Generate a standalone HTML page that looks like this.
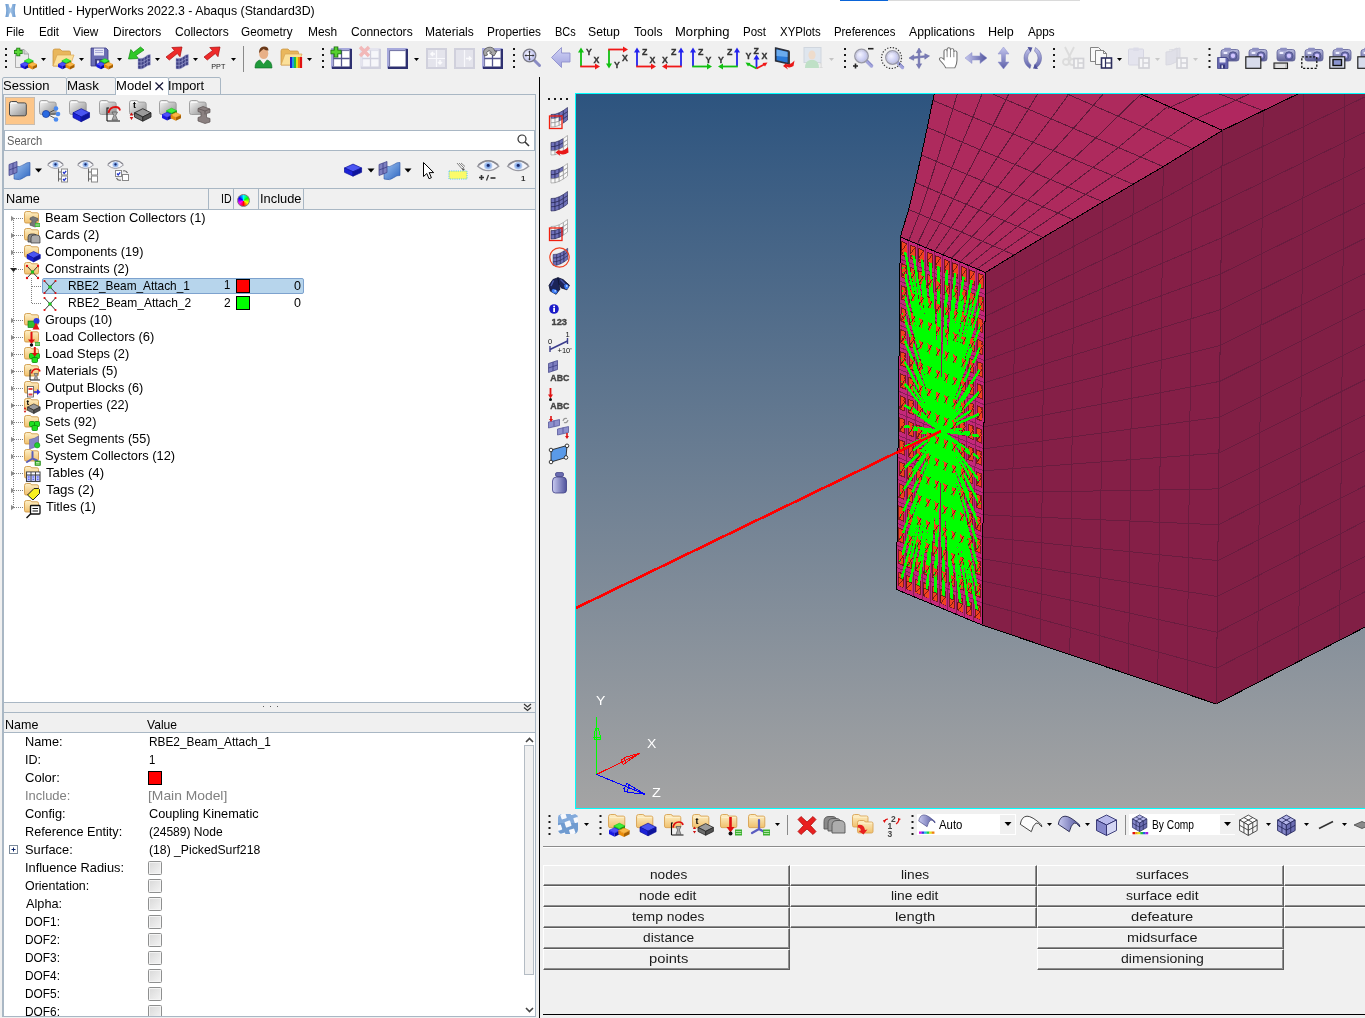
<!DOCTYPE html><html><head><meta charset="utf-8"><title>HyperWorks</title><style>
html,body{margin:0;padding:0;}
body{width:1365px;height:1018px;overflow:hidden;background:#f0f0f0;position:relative;font-family:"Liberation Sans",sans-serif;}
.a{position:absolute;box-sizing:border-box;}
.t{position:absolute;white-space:pre;transform-origin:0 0;display:block;}
svg{overflow:visible;}
#root{position:absolute;left:0;top:0;width:1365px;height:1018px;overflow:hidden;will-change:transform;transform:translateZ(0);}
</style></head><body><div id="root"><svg class="a" style="left:0;top:0" width="0" height="0"><defs>
<linearGradient id="gFold" x1="0" y1="0" x2="0" y2="1"><stop offset="0" stop-color="#fdf0c8"/><stop offset="1" stop-color="#f0c06c"/></linearGradient>
<linearGradient id="gFoldG" x1="0" y1="0" x2="1" y2="1"><stop offset="0" stop-color="#fafafa"/><stop offset="1" stop-color="#8e8e8e"/></linearGradient>
<linearGradient id="gPur" x1="0" y1="0" x2="0" y2="1"><stop offset="0" stop-color="#c4c6ee"/><stop offset="1" stop-color="#5c5fa8"/></linearGradient>
<linearGradient id="gPurL" x1="0" y1="0" x2="0" y2="1"><stop offset="0" stop-color="#d2d4f6"/><stop offset="1" stop-color="#a0a2de"/></linearGradient>
<linearGradient id="gPurH" x1="0" y1="0" x2="1" y2="0"><stop offset="0" stop-color="#c8caf0"/><stop offset="1" stop-color="#4f529c"/></linearGradient>
<linearGradient id="gCam" x1="0" y1="0" x2="0" y2="1"><stop offset="0" stop-color="#b9bbe0"/><stop offset="1" stop-color="#5e6096"/></linearGradient>
<linearGradient id="gBlueF" x1="0" y1="0" x2="1" y2="1"><stop offset="0" stop-color="#9ec4f2"/><stop offset="1" stop-color="#2f66c0"/></linearGradient>
<radialGradient id="gLens" cx="0.4" cy="0.4" r="0.6"><stop offset="0" stop-color="#f4f4ff"/><stop offset="1" stop-color="#b9bcec"/></radialGradient>
<radialGradient id="gEye" cx="0.5" cy="0.5" r="0.5"><stop offset="0" stop-color="#3050a8"/><stop offset="0.45" stop-color="#7fa6e6"/><stop offset="1" stop-color="#c8daf6"/></radialGradient>
</defs></svg>
<div class="a" style="left:0px;top:0px;width:1365px;height:41px;background:#ffffff;"></div>
<div class="a" style="left:840px;top:0px;width:240px;height:1px;background:#dadada;"></div>
<div class="a" style="left:840px;top:0px;width:48px;height:1px;background:#0a64d8;"></div>
<svg class="a" style="left:4.7px;top:4.4px" width="11" height="13" viewBox="0 0 11 13"><defs><linearGradient id="gApp" x1="0" y1="0" x2="1" y2="0"><stop offset="0" stop-color="#6a99cf"/><stop offset="0.5" stop-color="#a4c4e6"/><stop offset="1" stop-color="#6a99cf"/></linearGradient></defs><path d="M0.300 0h3.300q0.500 3.600 1.900 4.700q1.400 -1.100 1.900 -4.700h3.300q-0.900 3.500 -0.900 6.500q0 3 0.900 6.500h-3.300q-0.500 -3.600 -1.900 -4.700q-1.400 1.100 -1.900 4.700h-3.300q0.900 -3.500 0.900 -6.500q0 -3 -0.900 -6.500z" fill="url(#gApp)"/></svg>
<span class="t " style="left:22.5px;top:5.16px;font-size:12.8px;line-height:12.8px;color:#000;transform:scaleX(0.9657);">Untitled - HyperWorks 2022.3 - Abaqus (Standard3D)</span>
<span class="t " style="left:6.4px;top:26.18px;font-size:12.9px;line-height:12.9px;color:#000;transform:scaleX(0.8844);">File</span>
<span class="t " style="left:38.6px;top:26.18px;font-size:12.9px;line-height:12.9px;color:#000;transform:scaleX(0.9028);">Edit</span>
<span class="t " style="left:73.2px;top:26.18px;font-size:12.9px;line-height:12.9px;color:#000;transform:scaleX(0.9152);">View</span>
<span class="t " style="left:112.7px;top:26.18px;font-size:12.9px;line-height:12.9px;color:#000;transform:scaleX(0.9346);">Directors</span>
<span class="t " style="left:174.6px;top:26.18px;font-size:12.9px;line-height:12.9px;color:#000;transform:scaleX(0.9366);">Collectors</span>
<span class="t " style="left:241.4px;top:26.18px;font-size:12.9px;line-height:12.9px;color:#000;transform:scaleX(0.9109);">Geometry</span>
<span class="t " style="left:307.5px;top:26.18px;font-size:12.9px;line-height:12.9px;color:#000;transform:scaleX(0.9269);">Mesh</span>
<span class="t " style="left:350.5px;top:26.18px;font-size:12.9px;line-height:12.9px;color:#000;transform:scaleX(0.9355);">Connectors</span>
<span class="t " style="left:425.4px;top:26.18px;font-size:12.9px;line-height:12.9px;color:#000;transform:scaleX(0.9322);">Materials</span>
<span class="t " style="left:487.1px;top:26.18px;font-size:12.9px;line-height:12.9px;color:#000;transform:scaleX(0.9180);">Properties</span>
<span class="t " style="left:554.5px;top:26.18px;font-size:12.9px;line-height:12.9px;color:#000;transform:scaleX(0.8536);">BCs</span>
<span class="t " style="left:588.4px;top:26.18px;font-size:12.9px;line-height:12.9px;color:#000;transform:scaleX(0.9468);">Setup</span>
<span class="t " style="left:633.7px;top:26.18px;font-size:12.9px;line-height:12.9px;color:#000;transform:scaleX(0.9486);">Tools</span>
<span class="t " style="left:675.4px;top:26.18px;font-size:12.9px;line-height:12.9px;color:#000;transform:scaleX(1.0124);">Morphing</span>
<span class="t " style="left:742.9px;top:26.18px;font-size:12.9px;line-height:12.9px;color:#000;transform:scaleX(0.8929);">Post</span>
<span class="t " style="left:779.6px;top:26.18px;font-size:12.9px;line-height:12.9px;color:#000;transform:scaleX(0.8878);">XYPlots</span>
<span class="t " style="left:833.7px;top:26.18px;font-size:12.9px;line-height:12.9px;color:#000;transform:scaleX(0.8824);">Preferences</span>
<span class="t " style="left:909.3px;top:26.18px;font-size:12.9px;line-height:12.9px;color:#000;transform:scaleX(0.9459);">Applications</span>
<span class="t " style="left:988.3px;top:26.18px;font-size:12.9px;line-height:12.9px;color:#000;transform:scaleX(0.9750);">Help</span>
<span class="t " style="left:1028.3px;top:26.18px;font-size:12.9px;line-height:12.9px;color:#000;transform:scaleX(0.9096);">Apps</span>
<svg class="a" style="left:0;top:0" width="1365" height="76" viewBox="0 0 1365 76"><rect x="5" y="48" width="2" height="2" fill="#1a1a1a"/><rect x="5" y="54" width="2" height="2" fill="#1a1a1a"/><rect x="5" y="60" width="2" height="2" fill="#1a1a1a"/><rect x="5" y="66" width="2" height="2" fill="#1a1a1a"/><g transform="translate(13 47)"><path d="M2.500 2.500h8.500l4.500 4.500v13.500h-13z" fill="#ececec" stroke="#9a9a9a" stroke-width="0.8"/><path d="M11 2.500v4.500h4.500" fill="#d8d8d8" stroke="#9a9a9a" stroke-width="0.8"/><path d="M5.300 0.700v8.600M1 5h8.600" stroke="#1a7a10" stroke-width="4"/><path d="M5.300 1.400v7.200M1.700 5h7.200" stroke="#5ad838" stroke-width="2.400"/><g transform="translate(7.5 11)"><g transform="scale(1)"><path d="M3.8 2.8l4.500 -2.200l4.500 2.200l-4.500 2.200z" fill="#3cf03c" stroke="#12c412" stroke-width="0.5"/><path d="M3.8 2.8l4.500 2.200v2.800l-4.500 -2.200z" fill="#12c412"/><path d="M8.3 5l4.500 -2.200v2.800l-4.500 2.200z" fill="#0a8a0a"/><path d="M0 6.3l4.500 -2.200l4.500 2.200l-4.500 2.200z" fill="#5050fa" stroke="#1818e4" stroke-width="0.5"/><path d="M0 6.3l4.500 2.200v2.800l-4.500 -2.200z" fill="#1818e4"/><path d="M4.5 8.5l4.500 -2.200v2.800l-4.500 2.200z" fill="#0a0a9c"/><path d="M7.5 6.5l4.500 -2.200l4.500 2.200l-4.500 2.200z" fill="#fab848" stroke="#ea8c0a" stroke-width="0.5"/><path d="M7.5 6.5l4.500 2.200v2.800l-4.500 -2.200z" fill="#ea8c0a"/><path d="M12 8.7l4.500 -2.200v2.800l-4.500 2.200z" fill="#a86000"/></g></g></g><path d="M41 58h5l-2.5 3z" fill="#000"/><g transform="translate(52 47)"><path d="M1 4q0 -2 2 -2h5l2 2h7q1.5 0 1.5 1.5v13.5h-17.5z" fill="#e9b75c" stroke="#c88f3a" stroke-width="0.7"/><path d="M1 19l4 -11h17l-4 11z" fill="#fbe09a" stroke="#d9a455" stroke-width="0.7"/><g transform="translate(6 11)"><g transform="scale(1)"><path d="M3.8 2.8l4.500 -2.200l4.500 2.200l-4.500 2.200z" fill="#3cf03c" stroke="#12c412" stroke-width="0.5"/><path d="M3.8 2.8l4.500 2.200v2.800l-4.500 -2.200z" fill="#12c412"/><path d="M8.3 5l4.500 -2.200v2.800l-4.500 2.200z" fill="#0a8a0a"/><path d="M0 6.3l4.500 -2.200l4.500 2.200l-4.500 2.200z" fill="#5050fa" stroke="#1818e4" stroke-width="0.5"/><path d="M0 6.3l4.500 2.200v2.800l-4.500 -2.200z" fill="#1818e4"/><path d="M4.5 8.5l4.500 -2.200v2.800l-4.500 2.200z" fill="#0a0a9c"/><path d="M7.5 6.5l4.500 -2.200l4.500 2.200l-4.500 2.200z" fill="#fab848" stroke="#ea8c0a" stroke-width="0.5"/><path d="M7.5 6.5l4.500 2.200v2.800l-4.500 -2.200z" fill="#ea8c0a"/><path d="M12 8.7l4.500 -2.200v2.800l-4.500 2.200z" fill="#a86000"/></g></g></g><path d="M79 58h5l-2.5 3z" fill="#000"/><g transform="translate(90 47)"><path d="M1 1h15l2 2v16h-17z" fill="#6a6cb4" stroke="#3c3e84" stroke-width="0.8"/><rect x="4" y="1.5" width="10" height="7" fill="#e6e6f6"/><path d="M5 3.5h8M5 5.5h8" stroke="#9a9cd0" stroke-width="0.8"/><rect x="5" y="12" width="8" height="7" fill="#3c3e84"/><rect x="7" y="13.5" width="2.2" height="4" fill="#dde"/><g transform="translate(6.5 11)"><g transform="scale(1)"><path d="M3.8 2.8l4.500 -2.200l4.500 2.200l-4.500 2.200z" fill="#3cf03c" stroke="#12c412" stroke-width="0.5"/><path d="M3.8 2.8l4.500 2.200v2.800l-4.500 -2.200z" fill="#12c412"/><path d="M8.3 5l4.500 -2.200v2.800l-4.500 2.200z" fill="#0a8a0a"/><path d="M0 6.3l4.500 -2.200l4.500 2.200l-4.500 2.200z" fill="#5050fa" stroke="#1818e4" stroke-width="0.5"/><path d="M0 6.3l4.500 2.200v2.800l-4.500 -2.200z" fill="#1818e4"/><path d="M4.5 8.5l4.500 -2.200v2.800l-4.500 2.200z" fill="#0a0a9c"/><path d="M7.5 6.5l4.500 -2.200l4.500 2.200l-4.500 2.200z" fill="#fab848" stroke="#ea8c0a" stroke-width="0.5"/><path d="M7.5 6.5l4.500 2.200v2.800l-4.500 -2.200z" fill="#ea8c0a"/><path d="M12 8.7l4.500 -2.200v2.800l-4.500 2.200z" fill="#a86000"/></g></g></g><path d="M117 58h5l-2.5 3z" fill="#000"/><g transform="translate(128 47)"><path d="M12.500 0l3.500 3l-8 5.500l2.500 3l-10 0.500l2.300 -9.500l2.700 3z" fill="#30c828" stroke="#0c8a0a" stroke-width="0.7"/><g transform="translate(10 7.5)"><g transform="scale(0.880 0.950)"><path d="M0 4q5 1 8 -1.5q3 -2.5 6 -2.5v11q-3 0 -6 2.5q-3 2.5 -8 1.5z" fill="#3e4084" stroke="#a4a6d8" stroke-width="0.5"/><path d="M0 7.7q5 1 8 -1.5q3 -2.5 6 -2.5M0 11.3q5 1 8 -1.5q3 -2.5 6 -2.5M3.5 4.6v11M7 3.2v11M10.5 0.8v11" stroke="#a4a6d8" stroke-width="0.7" fill="none"/></g></g></g><path d="M155 58h5l-2.5 3z" fill="#000"/><g transform="translate(166 47)"><path d="M0 10l8.500 -6.500l-2.700 -3l10.200 -0.500l-2 9.700l-2.700 -3.200l-8 6.500z" fill="#ee2a2a" stroke="#a80a0a" stroke-width="0.7"/><g transform="translate(10 7.5)"><g transform="scale(0.880 0.950)"><path d="M0 4q5 1 8 -1.5q3 -2.5 6 -2.5v11q-3 0 -6 2.5q-3 2.5 -8 1.5z" fill="#3e4084" stroke="#a4a6d8" stroke-width="0.5"/><path d="M0 7.7q5 1 8 -1.5q3 -2.5 6 -2.5M0 11.3q5 1 8 -1.5q3 -2.5 6 -2.5M3.5 4.6v11M7 3.2v11M10.5 0.8v11" stroke="#a4a6d8" stroke-width="0.7" fill="none"/></g></g></g><path d="M193 58h5l-2.5 3z" fill="#000"/><g transform="translate(204 47)"><path d="M0 10l8.500 -6.500l-2.700 -3l10.200 -0.500l-2 9.700l-2.700 -3.200l-8 6.500z" fill="#ee2a2a" stroke="#a80a0a" stroke-width="0.7"/><text x="7.300" y="21.800" font-family="Liberation Sans" font-size="7.200" fill="#222">PPT</text></g><path d="M231 58h5l-2.5 3z" fill="#000"/><rect x="243" y="46" width="1" height="26" fill="#8a8a8a"/><g transform="translate(255 47)"><path d="M0 21q0 -7 5 -8l3.5 3l3.5 -3q5 1 5 8z" fill="#1f9a3a" stroke="#0c6a22" stroke-width="0.6"/><path d="M5.5 13l3 4l3 -4l-3 -1z" fill="#f4f4f4"/><ellipse cx="8.7" cy="6.5" rx="4.6" ry="5.6" fill="#e8b088"/><path d="M4 6q0 -6.5 5 -6.5q4.5 0 4.5 4q-3 0 -5 -1.5q-2 1.5 -4.5 4z" fill="#6a3a1a"/></g><g transform="translate(280 47)"><path d="M1 4q0 -2 2 -2h5l2 2h7q1.5 0 1.5 1.5v12.5h-17.5z" fill="#e9b75c" stroke="#c88f3a" stroke-width="0.7"/><path d="M1 18l4 -11h17l-4 11z" fill="#fbe09a" stroke="#d9a455" stroke-width="0.7"/><rect x="10" y="10" width="2.1" height="11" fill="#2020d0"/><rect x="12" y="10" width="2.1" height="11" fill="#20a0e0"/><rect x="14" y="10" width="2.1" height="11" fill="#20c040"/><rect x="16" y="10" width="2.1" height="11" fill="#e0e020"/><rect x="18" y="10" width="2.1" height="11" fill="#f08010"/><rect x="20" y="10" width="2.1" height="11" fill="#e01010"/></g><path d="M307 58h5l-2.5 3z" fill="#000"/><rect x="322" y="48" width="2" height="2" fill="#1a1a1a"/><rect x="322" y="54" width="2" height="2" fill="#1a1a1a"/><rect x="322" y="60" width="2" height="2" fill="#1a1a1a"/><rect x="322" y="66" width="2" height="2" fill="#1a1a1a"/><g transform="translate(331 48)"><rect x="1" y="1" width="19" height="19" fill="#fff"/><path d="M1.200 20.500v-19.300h19.300" stroke="#a8aadc" stroke-width="2.400" fill="none"/><path d="M1 19.800h18.800v-18.800" stroke="#2e3070" stroke-width="2.400" fill="none"/><path d="M2.600 18.200v-15.600h15.600" stroke="#54568e" stroke-width="0.800" fill="none"/><path d="M10.500 2.400v16.400M2.400 10.500h16.400" stroke="#54568e" stroke-width="1.300"/><path d="M5 -1.5v11M-0.5 4h11" stroke="#1a6a10" stroke-width="4.6"/><path d="M5 -0.7v9.4M0.3 4h9.4" stroke="#56d030" stroke-width="2.8"/></g><g transform="translate(360 48)"><rect x="1" y="1" width="19" height="19" fill="#f6f6fa"/><path d="M1.200 20.500v-19.300h19.300" stroke="#e4e4ee" stroke-width="2.400" fill="none"/><path d="M1 19.800h18.800v-18.800" stroke="#d0d0de" stroke-width="2.400" fill="none"/><path d="M2.600 18.200v-15.600h15.600" stroke="#dcdce8" stroke-width="0.800" fill="none"/><path d="M10.500 2.400v16.400M2.400 10.500h16.400" stroke="#d0d0de" stroke-width="1.300"/><path d="M0 -1l9 9M9 -1l-9 9" stroke="#f2b8b8" stroke-width="3.4"/></g><g transform="translate(387 48)"><rect x="1" y="1" width="19" height="19" fill="#fff"/><path d="M1.200 20.500v-19.300h19.300" stroke="#a8aadc" stroke-width="2.400" fill="none"/><path d="M1 19.800h18.800v-18.800" stroke="#2e3070" stroke-width="2.400" fill="none"/><path d="M2.600 18.200v-15.600h15.600" stroke="#54568e" stroke-width="0.800" fill="none"/></g><path d="M414 58h5l-2.5 3z" fill="#000"/><g transform="translate(426 48)"><rect x="1" y="1" width="19" height="19" fill="#e4e4ec" stroke="#d0d0dc" stroke-width="2"/><path d="M10.5 2v17M2 10.5h17" stroke="#f8f8fc" stroke-width="1.200"/><path d="M9 6h-4M7 4l-2 2l2 2M14 12v4M12 14l2 2l2 -2" stroke="#fbfbfd" stroke-width="1.500" fill="none"/></g><g transform="translate(454 48)"><rect x="1" y="1" width="19" height="19" fill="#e4e4ec" stroke="#d0d0dc" stroke-width="2"/><path d="M10.5 2v17" stroke="#f8f8fc" stroke-width="1.200"/><path d="M12 10.5h5M15 8.5l2 2l-2 2" stroke="#fbfbfd" stroke-width="1.500" fill="none"/></g><g transform="translate(482 48)"><rect x="1" y="1" width="19" height="19" fill="#fff"/><path d="M1.200 20.500v-19.300h19.300" stroke="#a8aadc" stroke-width="2.400" fill="none"/><path d="M1 19.800h18.800v-18.800" stroke="#2e3070" stroke-width="2.400" fill="none"/><path d="M2.600 18.200v-15.600h15.600" stroke="#54568e" stroke-width="0.800" fill="none"/><path d="M10.500 2.400v16.400M2.400 10.500h16.400" stroke="#54568e" stroke-width="1.300"/><path d="M2.5 8q-3 -6 3 -8.5q6 -1.5 7.5 4l2 -0.5l-3 5l-4.5 -3l2 -0.5q-1 -2.5 -3.5 -1.5q-2.5 1.5 -0.5 4z" fill="#a8a8a8" stroke="#505050" stroke-width="0.8"/></g><rect x="513" y="48" width="2" height="2" fill="#1a1a1a"/><rect x="513" y="54" width="2" height="2" fill="#1a1a1a"/><rect x="513" y="60" width="2" height="2" fill="#1a1a1a"/><rect x="513" y="66" width="2" height="2" fill="#1a1a1a"/><g transform="translate(522 48)"><path d="M11.5 11.5l6 6" stroke="#8a8cc4" stroke-width="3" stroke-linecap="round"/><circle cx="7.5" cy="7.5" r="6.3" fill="url(#gLens)" stroke="#7a7a86" stroke-width="1.3"/><path d="M7.5 3.5v8M3.5 7.5h8" stroke="#333" stroke-width="0.9"/><path d="M7.5 2.5l-1.3 1.8h2.6zM7.5 12.5l-1.3 -1.8h2.6zM2.5 7.5l1.8 -1.3v2.6zM12.5 7.5l-1.8 -1.3v2.6z" fill="#333"/></g><g transform="translate(551 47)"><path d="M0.5 10.5l10 -10v5.5h8.5v9h-8.5v5.5z" fill="url(#gPurL)" stroke="#8e90cc" stroke-width="0.9"/></g><g transform="translate(578 46.5)"><path d="M3 20V4" stroke="#10c010" stroke-width="1.8"/><path d="M3 1l-3 5h6z" fill="#10c010"/><path d="M2.2 20H19" stroke="#f01818" stroke-width="1.8"/><path d="M22 20l-5 -3v6z" fill="#f01818"/><text x="8" y="8" font-family="Liberation Sans" font-weight="bold" font-size="8.800" fill="#333" stroke="#333" stroke-width="0.300">Y</text><text x="15.5" y="16" font-family="Liberation Sans" font-weight="bold" font-size="8.800" fill="#333" stroke="#333" stroke-width="0.300">X</text></g><g transform="translate(606 46.5)"><path d="M3 3V19" stroke="#10c010" stroke-width="1.8"/><path d="M3 22l-3 -5h6z" fill="#10c010"/><path d="M2.2 3H19" stroke="#f01818" stroke-width="1.8"/><path d="M22 3l-5 -3v6z" fill="#f01818"/><text x="8" y="21" font-family="Liberation Sans" font-weight="bold" font-size="8.800" fill="#333" stroke="#333" stroke-width="0.300">Y</text><text x="16" y="14" font-family="Liberation Sans" font-weight="bold" font-size="8.800" fill="#333" stroke="#333" stroke-width="0.300">X</text></g><g transform="translate(634 46.5)"><path d="M3 20V4" stroke="#2222ee" stroke-width="1.8"/><path d="M3 1l-3 5h6z" fill="#2222ee"/><path d="M2.2 20H19" stroke="#f01818" stroke-width="1.8"/><path d="M22 20l-5 -3v6z" fill="#f01818"/><text x="8" y="8" font-family="Liberation Sans" font-weight="bold" font-size="8.800" fill="#333" stroke="#333" stroke-width="0.300">Z</text><text x="15.5" y="16" font-family="Liberation Sans" font-weight="bold" font-size="8.800" fill="#333" stroke="#333" stroke-width="0.300">X</text></g><g transform="translate(662 46.5)"><path d="M19 20V4" stroke="#2222ee" stroke-width="1.8"/><path d="M19 1l-3 5h6z" fill="#2222ee"/><path d="M19.8 20H3" stroke="#f01818" stroke-width="1.8"/><path d="M0 20l5 -3v6z" fill="#f01818"/><text x="9" y="8" font-family="Liberation Sans" font-weight="bold" font-size="8.800" fill="#333" stroke="#333" stroke-width="0.300">Z</text><text x="0" y="16" font-family="Liberation Sans" font-weight="bold" font-size="8.800" fill="#333" stroke="#333" stroke-width="0.300">X</text></g><g transform="translate(690 46.5)"><path d="M3 20V4" stroke="#2222ee" stroke-width="1.8"/><path d="M3 1l-3 5h6z" fill="#2222ee"/><path d="M2.2 20H19" stroke="#10c010" stroke-width="1.8"/><path d="M22 20l-5 -3v6z" fill="#10c010"/><text x="8" y="8" font-family="Liberation Sans" font-weight="bold" font-size="8.800" fill="#333" stroke="#333" stroke-width="0.300">Z</text><text x="15.5" y="16" font-family="Liberation Sans" font-weight="bold" font-size="8.800" fill="#333" stroke="#333" stroke-width="0.300">Y</text></g><g transform="translate(718 46.5)"><path d="M19 20V4" stroke="#2222ee" stroke-width="1.8"/><path d="M19 1l-3 5h6z" fill="#2222ee"/><path d="M19.8 20H3" stroke="#10c010" stroke-width="1.8"/><path d="M0 20l5 -3v6z" fill="#10c010"/><text x="9" y="8" font-family="Liberation Sans" font-weight="bold" font-size="8.800" fill="#333" stroke="#333" stroke-width="0.300">Z</text><text x="0" y="16" font-family="Liberation Sans" font-weight="bold" font-size="8.800" fill="#333" stroke="#333" stroke-width="0.300">Y</text></g><g transform="translate(745.5 46.5)"><path d="M11 22V11" stroke="#2222ee" stroke-width="1.8"/><path d="M11 8l-3 5h6z" fill="#2222ee"/><path d="M11 22L2.500 17.500" stroke="#10c010" stroke-width="1.8"/><path d="M0 16l5 0.500l-2.500 3.500z" fill="#10c010"/><path d="M11 22L19.500 17.500" stroke="#f01818" stroke-width="1.8"/><path d="M22 16l-5 0.500l2.500 3.500z" fill="#f01818"/><text x="0" y="12" font-family="Liberation Sans" font-weight="bold" font-size="8.800" fill="#333" stroke="#333" stroke-width="0.300">Y</text><text x="8" y="7" font-family="Liberation Sans" font-weight="bold" font-size="8.800" fill="#333" stroke="#333" stroke-width="0.300">Z</text><text x="16" y="12" font-family="Liberation Sans" font-weight="bold" font-size="8.800" fill="#333" stroke="#333" stroke-width="0.300">X</text></g><g transform="translate(775 47)"><path d="M0.700 1.200l12.800 3v12.600l-12.800 -3z" fill="#2a7ad8" stroke="#2a2e3a" stroke-width="1.700"/><path d="M1.5 2.5l11 2.5v5l-11 -1z" fill="#7ab8f4" opacity="0.8"/><path d="M13.5 4l1.5 0.5v13l-1.5 -0.5z" fill="#444"/><path d="M11 17q5 1 8.5 -3.5l-1 5.5q-4 2.5 -7 0.5l1.5 3l-5 -3.5l4.5 -4z" fill="#e81818"/></g><g transform="translate(803 47)"><rect x="1" y="0.5" width="17" height="15" fill="#dfe6ee" stroke="#d0d6de"/><path d="M2 21q0 -7 5 -8h4q5 1 5 8z" fill="#bfe0c6"/><ellipse cx="9" cy="8" rx="3.6" ry="4.6" fill="#eedccc"/><text x="16" y="21" font-family="Liberation Sans" font-size="7" font-weight="bold" fill="#d8d8d8">1</text></g><path d="M829 58h5l-2.5 3z" fill="#c4c4c4"/><rect x="844" y="48" width="2" height="2" fill="#1a1a1a"/><rect x="844" y="54" width="2" height="2" fill="#1a1a1a"/><rect x="844" y="60" width="2" height="2" fill="#1a1a1a"/><rect x="844" y="66" width="2" height="2" fill="#1a1a1a"/><g transform="translate(853 47.5)"><path d="M13 13l5.500 5.500" stroke="#a2a4dc" stroke-width="3.400" stroke-linecap="round"/><path d="M13 13l5.500 5.500" stroke="#7e80c0" stroke-width="1" stroke-linecap="round" transform="translate(0.900 -0.900)"/><circle cx="8.500" cy="8.500" r="6.800" fill="url(#gLens)" stroke="#9a9aa6" stroke-width="1.300"/><circle cx="8.500" cy="8.500" r="5.300" fill="none" stroke="#c8c8d8" stroke-width="0.800"/><path d="M15 1.2h5.5" stroke="#222" stroke-width="1.6"/><path d="M0 18.5h5M2.5 16v5" stroke="#222" stroke-width="1.6"/></g><g transform="translate(882 47.5)"><g transform="translate(2 1.5)"><path d="M13 13l5.500 5.500" stroke="#a2a4dc" stroke-width="3.400" stroke-linecap="round"/><path d="M13 13l5.500 5.500" stroke="#7e80c0" stroke-width="1" stroke-linecap="round" transform="translate(0.900 -0.900)"/><circle cx="8.500" cy="8.500" r="6.800" fill="url(#gLens)" stroke="#9a9aa6" stroke-width="1.300"/><circle cx="8.500" cy="8.500" r="5.300" fill="none" stroke="#c8c8d8" stroke-width="0.800"/></g><ellipse cx="9.5" cy="10.5" rx="10" ry="10.5" fill="none" stroke="#333" stroke-width="1.2" stroke-dasharray="1.3 1.6"/></g><g transform="translate(910 48)"><path d="M9 0l2.6 4.5h-1.8v3.7h5v-1.9l4.7 2.7l-4.7 2.7v-1.9h-5v6.2h1.8l-2.6 4.5l-2.6 -4.5h1.8v-6.2h-4.5v1.9l-4.7 -2.7l4.7 -2.7v1.9h4.5v-3.7h-1.8z" fill="#7a7cb8" stroke="#5c5e9c" stroke-width="0.5" transform="skewY(-6) translate(0 1)"/></g><g transform="translate(938 47)"><g transform="scale(1.200 1.020)"><path d="M6.500 20.500Q5 17 2 13.500Q0.500 11.500 1.800 10.600Q3.200 9.800 5 12.200L5 4.200Q5 2.600 6.300 2.600Q7.600 2.600 7.600 4.200L7.600 2.400Q7.600 0.800 9 0.800Q10.400 0.800 10.400 2.400L10.400 3Q10.400 1.600 11.800 1.600Q13.200 1.600 13.200 3.200L13.200 5Q13.200 3.800 14.500 3.800Q15.800 3.800 15.800 5.400L15.800 13Q15.800 17 14 20.500Z" fill="#fff" stroke="#6e6e6e" stroke-width="0.9"/><path d="M7.600 4v6M10.400 3v7M13.200 5v5" stroke="#7a7a7a" stroke-width="0.8"/></g></g><g transform="translate(965 52)"><path d="M0 6l7 -5.5v3.5h8v-3.5l7 5.5l-7 5.5v-3.5h-8v3.5z" fill="url(#gPurH)" stroke="#8e90cc" stroke-width="0.5"/></g><g transform="translate(998 47)"><path d="M5.5 0l5.5 7h-3.5v8h3.5l-5.5 7l-5.5 -7h3.5v-8h-3.5z" fill="url(#gPur)" stroke="#8e90cc" stroke-width="0.5"/></g><g transform="translate(1023 47)"><path d="M7 0.5q-6 4 -6 10.5q0 6.5 6 10.5l1 -3.5q-3.5 -3 -3.5 -7q0 -4 3.5 -7z" fill="url(#gPur)" stroke="#5c5e9c" stroke-width="0.5"/><path d="M12.5 0.5q6 4 6 10.5q0 6.5 -6 10.5l-1 -3.5q3.5 -3 3.5 -7q0 -4 -3.5 -7z" fill="url(#gPur)" stroke="#5c5e9c" stroke-width="0.5"/><path d="M4.5 0l5 0.5l-2 4.5zM15 22l-5 -0.5l2 -4.5z" fill="#4f529c"/></g><rect x="1053" y="48" width="2" height="2" fill="#1a1a1a"/><rect x="1053" y="54" width="2" height="2" fill="#1a1a1a"/><rect x="1053" y="60" width="2" height="2" fill="#1a1a1a"/><rect x="1053" y="66" width="2" height="2" fill="#1a1a1a"/><g transform="translate(1062 47)"><path d="M3 0l6 12M12 0l-6 12" stroke="#dcdcdc" stroke-width="1.8"/><circle cx="4" cy="15" r="3" fill="none" stroke="#dcdcdc" stroke-width="1.8"/><circle cx="10.5" cy="15" r="3" fill="none" stroke="#dcdcdc" stroke-width="1.8"/><rect x="12" y="11.500" width="9.500" height="9.500" fill="#f6f6f6" stroke="#d2d2d6" stroke-width="1.700"/><path d="M16 11.5v9.5M16 16h5.5" stroke="#d2d2d6" stroke-width="1.400"/></g><g transform="translate(1090 47)"><path d="M0.5 0.5h8l3 3v11h-11z" fill="#f8f8f8" stroke="#777" stroke-width="0.9"/><path d="M5.5 3.5h8l3 3v11h-11z" fill="#f8f8f8" stroke="#777" stroke-width="0.9"/><path d="M13.5 3.5v3h3" fill="none" stroke="#777" stroke-width="0.9"/><rect x="11.5" y="11" width="10" height="10" fill="#fff" stroke="#2c2e5c" stroke-width="1.6"/><path d="M15.5 11v10M15.5 16h6" stroke="#2c2e5c" stroke-width="1.2"/></g><path d="M1117 58h5l-2.5 3z" fill="#000"/><g transform="translate(1128 47)"><rect x="0.5" y="2" width="15" height="16" rx="1" fill="#e4e4ee" stroke="#d6d6e2"/><rect x="5" y="0.5" width="6" height="3.4" rx="1" fill="#dcdce8"/><rect x="11" y="11" width="10" height="10" fill="#f6f6f8" stroke="#d2d2d8" stroke-width="1.700"/><path d="M15 11v10M15 16h6" stroke="#d2d2d8" stroke-width="1.400"/></g><path d="M1155 58h5l-2.5 3z" fill="#c8c8c8"/><g transform="translate(1166 47)"><path d="M0 5q5 0 8 -2q3 -2 6 -2v13q-3 0 -6 2q-3 2 -8 2z" fill="#e0e0e8" stroke="#d8d8e0"/><path d="M3 3q5 0 8 -2v13" fill="none" stroke="#d8d8e0"/><rect x="11" y="11" width="10" height="10" fill="#f6f6f8" stroke="#d2d2d8" stroke-width="1.700"/><path d="M15 11v10M15 16h6" stroke="#d2d2d8" stroke-width="1.400"/></g><path d="M1193 58h5l-2.5 3z" fill="#c8c8c8"/><rect x="1208.5" y="48" width="2" height="2" fill="#1a1a1a"/><rect x="1208.5" y="54" width="2" height="2" fill="#1a1a1a"/><rect x="1208.5" y="60" width="2" height="2" fill="#1a1a1a"/><rect x="1208.5" y="66" width="2" height="2" fill="#1a1a1a"/><g transform="translate(1217 47)"><rect x="4" y="2.5" width="18" height="11.5" rx="2.5" fill="url(#gCam)" stroke="#5c5e96" stroke-width="0.8"/><rect x="7" y="0.8" width="7" height="3" rx="1" fill="#8d8fc2"/><rect x="6.5" y="5" width="4" height="2" rx="0.8" fill="#eef"/><circle cx="16" cy="8.800" r="4" fill="#6d6fae" stroke="#4a4c86" stroke-width="0.8"/><circle cx="16" cy="8.800" r="2.200" fill="#d0c4ff"/><path d="M0.5 10.5h9l1.5 1.5v9.5h-10.5z" fill="#6466b0" stroke="#3a3c80" stroke-width="0.7"/><rect x="2.5" y="11" width="6" height="4.5" fill="#e8e8f8"/><rect x="3" y="17.5" width="5" height="4" fill="#34367a"/><rect x="4.5" y="18.3" width="1.5" height="3" fill="#dde"/></g><g transform="translate(1245 47)"><rect x="4" y="2.5" width="18" height="11.5" rx="2.5" fill="url(#gCam)" stroke="#5c5e96" stroke-width="0.8"/><rect x="7" y="0.8" width="7" height="3" rx="1" fill="#8d8fc2"/><rect x="6.5" y="5" width="4" height="2" rx="0.8" fill="#eef"/><circle cx="16" cy="8.800" r="4" fill="#6d6fae" stroke="#4a4c86" stroke-width="0.8"/><circle cx="16" cy="8.800" r="2.200" fill="#d0c4ff"/><rect x="0.8" y="9.8" width="15" height="11.5" fill="#d8dcec" stroke="#222" stroke-width="1.2"/></g><g transform="translate(1273 47)"><rect x="4" y="2.5" width="18" height="11.5" rx="2.5" fill="url(#gCam)" stroke="#5c5e96" stroke-width="0.8"/><rect x="7" y="0.8" width="7" height="3" rx="1" fill="#8d8fc2"/><rect x="6.5" y="5" width="4" height="2" rx="0.8" fill="#eef"/><circle cx="16" cy="8.800" r="4" fill="#6d6fae" stroke="#4a4c86" stroke-width="0.8"/><circle cx="16" cy="8.800" r="2.200" fill="#d0c4ff"/><rect x="1" y="16" width="13.5" height="5.5" fill="#c8c8c8" stroke="#222" stroke-width="1.1"/><path d="M3 18h9M3 20h9" stroke="#fff" stroke-width="0.9"/></g><g transform="translate(1301 47)"><rect x="4" y="2.5" width="18" height="11.5" rx="2.5" fill="url(#gCam)" stroke="#5c5e96" stroke-width="0.8"/><rect x="7" y="0.8" width="7" height="3" rx="1" fill="#8d8fc2"/><rect x="6.5" y="5" width="4" height="2" rx="0.8" fill="#eef"/><circle cx="16" cy="8.800" r="4" fill="#6d6fae" stroke="#4a4c86" stroke-width="0.8"/><circle cx="16" cy="8.800" r="2.200" fill="#d0c4ff"/><rect x="0.8" y="9.8" width="15" height="11.5" fill="none" stroke="#111" stroke-width="1.3" stroke-dasharray="2.2 1.6"/></g><g transform="translate(1329 47)"><rect x="4" y="2.5" width="18" height="11.5" rx="2.5" fill="url(#gCam)" stroke="#5c5e96" stroke-width="0.8"/><rect x="7" y="0.8" width="7" height="3" rx="1" fill="#8d8fc2"/><rect x="6.5" y="5" width="4" height="2" rx="0.8" fill="#eef"/><circle cx="16" cy="8.800" r="4" fill="#6d6fae" stroke="#4a4c86" stroke-width="0.8"/><circle cx="16" cy="8.800" r="2.200" fill="#d0c4ff"/><rect x="0.8" y="9.8" width="15" height="11.5" fill="#d8dcec" stroke="#222" stroke-width="1.2"/><rect x="4" y="12.5" width="8.5" height="6" fill="#8a94d0" stroke="#111" stroke-width="1.4"/></g><g transform="translate(1357 47)"><rect x="4" y="2.5" width="18" height="11.5" rx="2.5" fill="url(#gCam)" stroke="#5c5e96" stroke-width="0.8"/><rect x="7" y="0.8" width="7" height="3" rx="1" fill="#8d8fc2"/><rect x="6.5" y="5" width="4" height="2" rx="0.8" fill="#eef"/><circle cx="16" cy="8.800" r="4" fill="#6d6fae" stroke="#4a4c86" stroke-width="0.8"/><circle cx="16" cy="8.800" r="2.200" fill="#d0c4ff"/><rect x="0.8" y="9.8" width="15" height="11.5" fill="#d8dcec" stroke="#222" stroke-width="1.2"/></g></svg>
<div class="a" style="left:2px;top:77px;width:65px;height:18px;background:#f0f0f0;border:1px solid #a9b7c4;border-bottom:1px solid #a9b7c4;border-radius:2px 2px 0 0;"></div>
<span class="t " style="left:2.8px;top:78.54px;font-size:13.3px;line-height:13.3px;color:#000;transform:scaleX(0.9814);">Session</span>
<div class="a" style="left:66px;top:77px;width:50px;height:18px;background:#f0f0f0;border:1px solid #a9b7c4;border-bottom:1px solid #a9b7c4;border-radius:2px 2px 0 0;"></div>
<span class="t " style="left:66.6px;top:78.54px;font-size:13.3px;line-height:13.3px;color:#000;transform:scaleX(1.0025);">Mask</span>
<div class="a" style="left:115px;top:77px;width:54px;height:18px;background:#ffffff;border:1px solid #a9b7c4;border-bottom:none;border-radius:2px 2px 0 0;"></div>
<span class="t " style="left:115.6px;top:78.54px;font-size:13.3px;line-height:13.3px;color:#000;transform:scaleX(0.9821);">Model</span>
<div class="a" style="left:168px;top:77px;width:53px;height:18px;background:#f0f0f0;border:1px solid #a9b7c4;border-bottom:1px solid #a9b7c4;border-radius:2px 2px 0 0;"></div>
<span class="t " style="left:168.0px;top:78.54px;font-size:13.3px;line-height:13.3px;color:#000;transform:scaleX(0.9577);">Import</span>
<svg class="a" style="left:155px;top:82px" width="9" height="9"><path d="M0.5 0.5L8 8M8 0.5L0.5 8" stroke="#1a1a3a" stroke-width="1.3" fill="none"/></svg>
<div class="a" style="left:2px;top:94px;width:534px;height:923px;border:1px solid #a9b7c4;border-left:2px solid #a9b7c4;"></div>
<div class="a" style="left:220px;top:94px;width:316px;height:1px;background:#a9b7c4;"></div>
<div class="a" style="left:116px;top:94px;width:52px;height:1px;background:#ffffff;"></div>
<div class="a" style="left:5px;top:97px;width:30px;height:28px;background:#fdc689;border:1px solid #c9bcae;"></div>
<svg class="a" style="left:0;top:0" width="540" height="130" viewBox="0 0 540 130"><g transform="translate(9 101)"><path d="M0.5 2.500q0 -2 2 -2h4.500q1.200 0 1.700 1.400h6.800q1.800 0 1.800 1.800v9.300q0 1.800 -1.800 1.800h-13.200q-1.800 0 -1.800 -1.800z" fill="url(#gFoldG)" stroke="#4a4a4a" stroke-width="1"/><path d="M2 2.300h6" stroke="#fff" stroke-width="1" opacity="0.8"/></g><g transform="translate(39 99)"><path d="M0.5 3.800q0 -2.300 2.300 -2.300h4.700q1.400 0 2 1.600h5.700q2 0 2 2v8.400q0 2 -2 2h-12.700q-2 0 -2 -2z" fill="url(#gFoldG)" stroke="#9a9a9a" stroke-width="0.9"/><path d="M2 3.300h6.500" stroke="#fff" stroke-width="1" opacity="0.9"/><path d="M8 15l9 -5M8 15l10 0M8 15l9 5" stroke="#333" stroke-width="0.8"/><circle cx="7" cy="15" r="3.6" fill="#2a6ae0" stroke="#0a2a90" stroke-width="0.6"/><circle cx="17" cy="9.5" r="2.3" fill="#4a8af0"/><circle cx="19" cy="15" r="2.3" fill="#4a8af0"/><circle cx="17" cy="20.5" r="2.3" fill="#4a8af0"/></g><g transform="translate(69 99)"><path d="M0.5 3.800q0 -2.300 2.300 -2.300h4.700q1.400 0 2 1.600h5.700q2 0 2 2v8.400q0 2 -2 2h-12.700q-2 0 -2 -2z" fill="url(#gFoldG)" stroke="#9a9a9a" stroke-width="0.9"/><path d="M2 3.300h6.500" stroke="#fff" stroke-width="1" opacity="0.9"/><g transform="translate(4 8.5)"><g transform="scale(1.180)"><path d="M0 4.5l7 -3.5l7 3.5l-7 3.5z" fill="#4a55f2" stroke="#0a0f9a" stroke-width="0.6"/><path d="M0 4.5l7 3.5v4l-7 -3.5z" fill="#1c22d8" stroke="#0a0f9a" stroke-width="0.6"/><path d="M7 8l7 -3.5v4l-7 3.5z" fill="#0e149c" stroke="#0a0f9a" stroke-width="0.6"/></g></g></g><g transform="translate(99 99)"><path d="M0.5 3.800q0 -2.300 2.300 -2.300h4.700q1.400 0 2 1.600h5.700q2 0 2 2v8.400q0 2 -2 2h-12.700q-2 0 -2 -2z" fill="url(#gFoldG)" stroke="#9a9a9a" stroke-width="0.9"/><path d="M2 3.300h6.500" stroke="#fff" stroke-width="1" opacity="0.9"/><path d="M8 22v-13h2M8 22h13" stroke="#111" stroke-width="1.1" fill="none"/><path d="M9.5 14q1 -6 7 -6q4 0 4.5 3.5" stroke="#e01010" stroke-width="1.8" fill="none"/><path d="M13 13h5.5l-1.8 3.5l1.8 4.5h-5.5l1.8 -4.5z" fill="#aaa" stroke="#555" stroke-width="0.7"/></g><g transform="translate(129 99)"><path d="M0.5 3.800q0 -2.300 2.300 -2.300h4.700q1.400 0 2 1.600h5.700q2 0 2 2v8.400q0 2 -2 2h-12.700q-2 0 -2 -2z" fill="url(#gFoldG)" stroke="#9a9a9a" stroke-width="0.9"/><path d="M2 3.300h6.500" stroke="#fff" stroke-width="1" opacity="0.9"/><g transform="translate(5.5 8.5)"><g transform="scale(1.180)"><path d="M0 4.5l7 -3.5l7 3.5l-7 3.5z" fill="#9a9a9a" stroke="#222" stroke-width="0.7"/><path d="M0 4.5l7 3.5v3.6l-7 -3.5z" fill="#6e6e6e" stroke="#222" stroke-width="0.7"/><path d="M7 8l7 -3.5v3.6l-7 3.5z" fill="#505050" stroke="#222" stroke-width="0.7"/></g></g><text x="4" y="9" font-family="Liberation Sans" font-weight="bold" font-size="9" fill="#000">t</text><path d="M2.5 13.5l1.8 3h-3.6zM2.5 21l1.8 -3h-3.6z" fill="#d01010"/></g><g transform="translate(159 99)"><path d="M0.5 3.800q0 -2.300 2.300 -2.300h4.700q1.400 0 2 1.600h5.700q2 0 2 2v8.400q0 2 -2 2h-12.700q-2 0 -2 -2z" fill="url(#gFoldG)" stroke="#9a9a9a" stroke-width="0.9"/><path d="M2 3.300h6.500" stroke="#fff" stroke-width="1" opacity="0.9"/><g transform="translate(3 8.5)"><g transform="scale(1.15)"><path d="M3.8 2.8l4.500 -2.200l4.500 2.200l-4.500 2.200z" fill="#3cf03c" stroke="#12c412" stroke-width="0.5"/><path d="M3.8 2.8l4.500 2.200v2.800l-4.500 -2.200z" fill="#12c412"/><path d="M8.3 5l4.500 -2.200v2.800l-4.500 2.200z" fill="#0a8a0a"/><path d="M0 6.3l4.500 -2.200l4.500 2.200l-4.500 2.200z" fill="#5050fa" stroke="#1818e4" stroke-width="0.5"/><path d="M0 6.3l4.500 2.200v2.800l-4.500 -2.200z" fill="#1818e4"/><path d="M4.5 8.5l4.500 -2.200v2.800l-4.500 2.200z" fill="#0a0a9c"/><path d="M7.5 6.5l4.500 -2.200l4.500 2.200l-4.500 2.200z" fill="#fab848" stroke="#ea8c0a" stroke-width="0.5"/><path d="M7.5 6.5l4.500 2.200v2.800l-4.500 -2.200z" fill="#ea8c0a"/><path d="M12 8.7l4.500 -2.200v2.800l-4.500 2.200z" fill="#a86000"/></g></g></g><g transform="translate(189 99)"><path d="M0.5 3.800q0 -2.300 2.300 -2.300h4.700q1.400 0 2 1.600h5.700q2 0 2 2v8.400q0 2 -2 2h-12.700q-2 0 -2 -2z" fill="url(#gFoldG)" stroke="#9a9a9a" stroke-width="0.9"/><path d="M2 3.300h6.500" stroke="#fff" stroke-width="1" opacity="0.9"/><path d="M9 9.5l5 -2l7 2.5v3.5l-3.5 1v4l3.5 1v3.5l-5 1.5l-7 -2.5v-3.5l3 -1v-4l-3 -1z" fill="#8a8080" stroke="#5a5050" stroke-width="0.7"/><path d="M9 9.5l7 2.5l5 -2M16 12v3.5" stroke="#5a5050" stroke-width="0.7" fill="none"/></g></svg>
<div class="a" style="left:4px;top:130px;width:531px;height:21px;background:#ffffff;border:1px solid #a9b7c4;"></div>
<span class="t " style="left:6.8px;top:135.19px;font-size:12.3px;line-height:12.3px;color:#606060;transform:scaleX(0.9036);">Search</span>
<svg class="a" style="left:517px;top:134px" width="13" height="13" viewBox="0 0 13 13"><circle cx="5" cy="5" r="4" fill="none" stroke="#333" stroke-width="1.2"/><path d="M8 8l4 4" stroke="#333" stroke-width="1.6"/></svg>
<svg class="a" style="left:0;top:0" width="540" height="190" viewBox="0 0 540 190"><g transform="translate(9 160)"><path d="M5 6q6 2 10 -1.5q3 -2.5 6 -2v13q-3 -0.5 -6 2q-4 3.5 -10 1.5z" fill="url(#gBlueF)" stroke="#2c56a8" stroke-width="0.6"/><path d="M0 4.5l8 -3v11l-8 3z" fill="#7e80c0" stroke="#3c3e84" stroke-width="0.7"/><path d="M4 3v11M0 10l8 -3" stroke="#3c3e84" stroke-width="0.8"/></g><path d="M35 168.5h7l-3.500 4z" fill="#000"/><g transform="translate(47 160)"><path d="M0.500 5q8 -8.500 16 0q-8 7 -16 0z" fill="#f6f6fa" stroke="#9a9aa2" stroke-width="1"/><circle cx="8.500" cy="4.600" r="3.200" fill="url(#gEye)"/><circle cx="8.500" cy="4.300" r="1.100" fill="#182868"/><path d="M1 3.800q7.500 -6.500 15 0" stroke="#8a8a92" stroke-width="1.100" fill="none"/><g transform="translate(11 8.5)"><path d="M0.5 0v13M0.5 3.5h3M0.5 10.5h3" stroke="#666" stroke-width="1" fill="none"/><rect x="3.5" y="0.5" width="6" height="6" fill="#fff" stroke="#888" stroke-width="1"/><path d="M5 3.5l1.2 1.4l2 -2.6" stroke="#2233cc" stroke-width="1.3" fill="none"/><rect x="3.5" y="7.5" width="6" height="6" fill="#fff" stroke="#888" stroke-width="1"/><path d="M5 10.5l1.2 1.4l2 -2.6" stroke="#2233cc" stroke-width="1.3" fill="none"/></g></g><g transform="translate(77 160)"><path d="M0.500 5q8 -8.500 16 0q-8 7 -16 0z" fill="#f6f6fa" stroke="#9a9aa2" stroke-width="1"/><circle cx="8.500" cy="4.600" r="3.200" fill="url(#gEye)"/><circle cx="8.500" cy="4.300" r="1.100" fill="#182868"/><path d="M1 3.800q7.500 -6.500 15 0" stroke="#8a8a92" stroke-width="1.100" fill="none"/><g transform="translate(11 8.5)"><path d="M0.5 0v13M0.5 3.5h3M0.5 10.5h3" stroke="#666" stroke-width="1" fill="none"/><rect x="3.5" y="0.5" width="6" height="6" fill="#fff" stroke="#888" stroke-width="1"/><rect x="3.5" y="7.5" width="6" height="6" fill="#fff" stroke="#888" stroke-width="1"/></g></g><g transform="translate(107 160)"><path d="M0.500 5q8 -8.500 16 0q-8 7 -16 0z" fill="#f6f6fa" stroke="#9a9aa2" stroke-width="1"/><circle cx="8.500" cy="4.600" r="3.200" fill="url(#gEye)"/><circle cx="8.500" cy="4.300" r="1.100" fill="#182868"/><path d="M1 3.800q7.500 -6.500 15 0" stroke="#8a8a92" stroke-width="1.100" fill="none"/><rect x="8.5" y="10.5" width="6" height="6" fill="#fff" stroke="#888"/><path d="M10 13.5l1.2 1.4l2 -2.6" stroke="#2233cc" stroke-width="1.3" fill="none"/><rect x="15.5" y="14.500" width="6" height="6" fill="#fff" stroke="#888"/><path d="M16 11q3 -1 4.5 2M14 20q-3 1 -4.500 -2" stroke="#666" stroke-width="1.2" fill="none"/></g><g transform="translate(344.5 163)"><g transform="scale(1.220 1.100)"><path d="M0 4.5l7 -3.5l7 3.5l-7 3.5z" fill="#4a55f2" stroke="#0a0f9a" stroke-width="0.6"/><path d="M0 4.5l7 3.5v4l-7 -3.5z" fill="#1c22d8" stroke="#0a0f9a" stroke-width="0.6"/><path d="M7 8l7 -3.5v4l-7 3.5z" fill="#0e149c" stroke="#0a0f9a" stroke-width="0.6"/></g></g><path d="M367.5 168.5h7l-3.500 4z" fill="#000"/><g transform="translate(379 160)"><path d="M5 6q6 2 10 -1.5q3 -2.5 6 -2v13q-3 -0.5 -6 2q-4 3.5 -10 1.5z" fill="url(#gBlueF)" stroke="#2c56a8" stroke-width="0.6"/><path d="M0 4.5l8 -3v11l-8 3z" fill="#7e80c0" stroke="#3c3e84" stroke-width="0.7"/><path d="M4 3v11M0 10l8 -3" stroke="#3c3e84" stroke-width="0.8"/></g><path d="M404.5 168.5h7l-3.500 4z" fill="#000"/><g transform="translate(423 162)"><path d="M0.5 0.5v14l3.3 -3l2.2 5.2l2.4 -1l-2.200 -5.100h4.500z" fill="#fff" stroke="#000" stroke-width="1"/></g><g transform="translate(448 163)"><rect x="1" y="8" width="18" height="8" fill="#fbfb6a" stroke="#58c8e8" stroke-width="1" stroke-dasharray="1.2 1"/><path d="M9 0l6 7M11 0l5 5M13 0l4 3.500" stroke="#555" stroke-width="0.7"/><path d="M15 8l-1 -3l3 1z" fill="#555"/></g><g transform="translate(477 160)"><g transform="scale(1.320 1.250)"><path d="M0.500 5q8 -8.500 16 0q-8 7 -16 0z" fill="#f6f6fa" stroke="#9a9aa2" stroke-width="1"/><circle cx="8.500" cy="4.600" r="3.200" fill="url(#gEye)"/><circle cx="8.500" cy="4.300" r="1.100" fill="#182868"/><path d="M1 3.800q7.500 -6.500 15 0" stroke="#8a8a92" stroke-width="1.100" fill="none"/></g><path d="M2 17.500h5M4.500 15v5" stroke="#333" stroke-width="1.6"/><path d="M11.500 15l-2 5.500" stroke="#333" stroke-width="1.2"/><path d="M13.500 18h5" stroke="#333" stroke-width="1.6"/></g><g transform="translate(507 160)"><g transform="scale(1.320 1.250)"><path d="M0.500 5q8 -8.500 16 0q-8 7 -16 0z" fill="#f6f6fa" stroke="#9a9aa2" stroke-width="1"/><circle cx="8.500" cy="4.600" r="3.200" fill="url(#gEye)"/><circle cx="8.500" cy="4.300" r="1.100" fill="#182868"/><path d="M1 3.800q7.500 -6.500 15 0" stroke="#8a8a92" stroke-width="1.100" fill="none"/></g><text x="14" y="21" font-family="Liberation Sans" font-weight="bold" font-size="8" fill="#333">1</text></g></svg>
<div class="a" style="left:4px;top:188px;width:531px;height:22px;background:#f0f0f0;border-top:1px solid #a9b7c4;border-bottom:1px solid #a9b7c4;"></div>
<div class="a" style="left:208px;top:189px;width:1px;height:20px;background:#a9b7c4;"></div>
<div class="a" style="left:233px;top:189px;width:1px;height:20px;background:#a9b7c4;"></div>
<div class="a" style="left:258px;top:189px;width:1px;height:20px;background:#a9b7c4;"></div>
<div class="a" style="left:303px;top:189px;width:1px;height:20px;background:#a9b7c4;"></div>
<span class="t " style="left:5.7px;top:191.60px;font-size:13px;line-height:13px;color:#000;transform:scaleX(0.9782);">Name</span>
<span class="t " style="left:220.5px;top:191.60px;font-size:13px;line-height:13px;color:#000;transform:scaleX(0.8134);">ID</span>
<span class="t " style="left:260.1px;top:191.60px;font-size:13px;line-height:13px;color:#000;transform:scaleX(0.9883);">Include</span>
<div class="a" style="left:237.3px;top:194.3px;width:13.2px;height:13.2px;border-radius:50%;border:1px solid #7a7a7a;background:conic-gradient(#00ffff,#00ff00 60deg,#ffff00 120deg,#ff0000 180deg,#ff00ff 240deg,#0000ff 300deg,#00ffff);"></div>
<div class="a" style="left:4px;top:210px;width:531px;height:493px;background:#ffffff;border-bottom:1px solid #a9b7c4;"></div>
<div class="a" style="left:42px;top:278px;width:262px;height:16px;background:#b7d5ec;border:1px solid #7da2ce;border-radius:2px;"></div>
<svg class="a" style="left:0;top:1px" width="60" height="520" viewBox="0 0 60 520"><path d="M13.500 217V507" stroke="#808080" stroke-width="1" stroke-dasharray="1 1"/><path d="M14 217.5H23" stroke="#808080" stroke-width="1" stroke-dasharray="1 1"/><path d="M11 214.8l3.500 2.700l-3.500 2.700z" fill="#8c8c8c"/><path d="M14 234.5H23" stroke="#808080" stroke-width="1" stroke-dasharray="1 1"/><path d="M11 231.8l3.500 2.700l-3.500 2.700z" fill="#8c8c8c"/><path d="M14 251.5H23" stroke="#808080" stroke-width="1" stroke-dasharray="1 1"/><path d="M11 248.8l3.500 2.700l-3.500 2.700z" fill="#8c8c8c"/><path d="M14 268.5H23" stroke="#808080" stroke-width="1" stroke-dasharray="1 1"/><path d="M10 267h7l-3.500 4z" fill="#222"/><path d="M14 319.5H23" stroke="#808080" stroke-width="1" stroke-dasharray="1 1"/><path d="M11 316.8l3.500 2.700l-3.500 2.700z" fill="#8c8c8c"/><path d="M14 336.5H23" stroke="#808080" stroke-width="1" stroke-dasharray="1 1"/><path d="M11 333.8l3.500 2.700l-3.500 2.700z" fill="#8c8c8c"/><path d="M14 353.5H23" stroke="#808080" stroke-width="1" stroke-dasharray="1 1"/><path d="M11 350.8l3.500 2.700l-3.500 2.700z" fill="#8c8c8c"/><path d="M14 370.5H23" stroke="#808080" stroke-width="1" stroke-dasharray="1 1"/><path d="M11 367.8l3.500 2.700l-3.500 2.700z" fill="#8c8c8c"/><path d="M14 387.5H23" stroke="#808080" stroke-width="1" stroke-dasharray="1 1"/><path d="M11 384.8l3.500 2.700l-3.500 2.700z" fill="#8c8c8c"/><path d="M14 404.5H23" stroke="#808080" stroke-width="1" stroke-dasharray="1 1"/><path d="M11 401.8l3.500 2.700l-3.500 2.700z" fill="#8c8c8c"/><path d="M14 421.5H23" stroke="#808080" stroke-width="1" stroke-dasharray="1 1"/><path d="M11 418.8l3.500 2.700l-3.500 2.700z" fill="#8c8c8c"/><path d="M14 438.5H23" stroke="#808080" stroke-width="1" stroke-dasharray="1 1"/><path d="M11 435.8l3.500 2.700l-3.500 2.700z" fill="#8c8c8c"/><path d="M14 455.5H23" stroke="#808080" stroke-width="1" stroke-dasharray="1 1"/><path d="M11 452.8l3.500 2.700l-3.500 2.700z" fill="#8c8c8c"/><path d="M14 472.5H23" stroke="#808080" stroke-width="1" stroke-dasharray="1 1"/><path d="M11 469.8l3.500 2.700l-3.500 2.700z" fill="#8c8c8c"/><path d="M14 489.5H23" stroke="#808080" stroke-width="1" stroke-dasharray="1 1"/><path d="M11 486.8l3.500 2.700l-3.500 2.700z" fill="#8c8c8c"/><path d="M14 506.5H23" stroke="#808080" stroke-width="1" stroke-dasharray="1 1"/><path d="M11 503.8l3.500 2.700l-3.500 2.700z" fill="#8c8c8c"/><path d="M31.500 277V302.500M32 285.500H41M32 302.500H41" stroke="#808080" stroke-width="1" stroke-dasharray="1 1" fill="none"/></svg>
<span class="t " style="left:44.5px;top:210.77px;font-size:13.5px;line-height:13.5px;color:#000;transform:scaleX(0.9556);">Beam Section Collectors (1)</span>
<svg class="a" style="left:24px;top:210.5px" width="18" height="19" viewBox="0 0 18 19"><path d="M0.500 2.500q0 -2 2 -2h3.500q1 0 1.600 1.300h5.400q1.500 0 1.500 1.500v7.200q0 1.500 -1.500 1.500h-11q-1.500 0 -1.500 -1.500z" fill="url(#gFold)" stroke="#d09a48" stroke-width="0.9"/><path d="M6 7l3 -1.500l5 2v2l-2 0.700v2l2 0.700v2l-3 1.100l-5 -1.800v-2l1.800 -0.700v-2.200l-1.800 -0.500z" fill="#777" stroke="#444" stroke-width="0.5"/><rect x="11" y="12" width="5" height="4" fill="#3cb030"/><path d="M11.500 13.300h4M11.500 14.700h4" stroke="#c8f0c0" stroke-width="0.600"/></svg>
<span class="t " style="left:44.8px;top:227.77px;font-size:13.5px;line-height:13.5px;color:#000;transform:scaleX(0.9639);">Cards (2)</span>
<svg class="a" style="left:24px;top:227.5px" width="18" height="19" viewBox="0 0 18 19"><path d="M0.500 2.500q0 -2 2 -2h3.500q1 0 1.600 1.300h5.400q1.500 0 1.500 1.500v7.200q0 1.500 -1.500 1.500h-11q-1.500 0 -1.500 -1.500z" fill="url(#gFold)" stroke="#d09a48" stroke-width="0.9"/><path d="M4 9q0 -3 3 -3h3q3 0 3 3v5h-9z" fill="#888" stroke="#333" stroke-width="0.7"/><path d="M7 10q0 -3 3 -3h3q3 0 3 3v5h-9z" fill="#aaa" stroke="#333" stroke-width="0.7"/></svg>
<span class="t " style="left:44.9px;top:244.77px;font-size:13.5px;line-height:13.5px;color:#000;transform:scaleX(0.9432);">Components (19)</span>
<svg class="a" style="left:24px;top:244.5px" width="18" height="19" viewBox="0 0 18 19"><path d="M0.500 2.500q0 -2 2 -2h3.500q1 0 1.600 1.300h5.400q1.500 0 1.500 1.500v7.200q0 1.500 -1.500 1.500h-11q-1.500 0 -1.500 -1.500z" fill="url(#gFold)" stroke="#d09a48" stroke-width="0.9"/><g transform="translate(3 5.5)"><g transform="scale(0.950)"><path d="M0 4.5l7 -3.5l7 3.5l-7 3.5z" fill="#4a55f2" stroke="#0a0f9a" stroke-width="0.6"/><path d="M0 4.5l7 3.5v4l-7 -3.5z" fill="#1c22d8" stroke="#0a0f9a" stroke-width="0.6"/><path d="M7 8l7 -3.5v4l-7 3.5z" fill="#0e149c" stroke="#0a0f9a" stroke-width="0.6"/></g></g></svg>
<span class="t " style="left:44.9px;top:261.77px;font-size:13.5px;line-height:13.5px;color:#000;transform:scaleX(0.9478);">Constraints (2)</span>
<svg class="a" style="left:24px;top:261.5px" width="18" height="19" viewBox="0 0 18 19"><path d="M0.500 2.500q0 -2 2 -2h3.500q1 0 1.600 1.300h5.400q1.500 0 1.500 1.500v7.200q0 1.500 -1.500 1.500h-11q-1.500 0 -1.500 -1.500z" fill="url(#gFold)" stroke="#d09a48" stroke-width="0.9"/><path d="M3 4l11 12M14 4l-11 12" stroke="#222" stroke-width="0.9"/><circle cx="8.500" cy="10" r="1.700" fill="#20c020"/><g fill="#e01010"><circle cx="3" cy="4" r="1.200"/><circle cx="14" cy="4" r="1.200"/><circle cx="3" cy="16" r="1.200"/><circle cx="14" cy="16" r="1.200"/></g></svg>
<span class="t " style="left:67.8px;top:278.77px;font-size:13.5px;line-height:13.5px;color:#000;transform:scaleX(0.8778);">RBE2_Beam_Attach_1</span>
<svg class="a" style="left:42px;top:278.5px" width="17" height="16" viewBox="0 0 17 16"><path d="M2.500 2l11 12M13.500 2l-11 12" stroke="#222" stroke-width="0.900"/><circle cx="8" cy="8" r="1.800" fill="#20c020"/><g fill="#e01010"><circle cx="2.500" cy="2" r="1.100"/><circle cx="13.500" cy="2" r="1.100"/><circle cx="2.500" cy="14" r="1.100"/><circle cx="13.500" cy="14" r="1.100"/></g></svg>
<span class="t " style="left:67.7px;top:295.77px;font-size:13.5px;line-height:13.5px;color:#000;transform:scaleX(0.8873);">RBE2_Beam_Attach_2</span>
<svg class="a" style="left:42px;top:295.5px" width="17" height="16" viewBox="0 0 17 16"><path d="M2.500 2l11 12M13.500 2l-11 12" stroke="#222" stroke-width="0.900"/><circle cx="8" cy="8" r="1.800" fill="#20c020"/><g fill="#e01010"><circle cx="2.500" cy="2" r="1.100"/><circle cx="13.500" cy="2" r="1.100"/><circle cx="2.500" cy="14" r="1.100"/><circle cx="13.500" cy="14" r="1.100"/></g></svg>
<span class="t " style="left:44.9px;top:312.77px;font-size:13.5px;line-height:13.5px;color:#000;transform:scaleX(0.9323);">Groups (10)</span>
<svg class="a" style="left:24px;top:312.5px" width="18" height="19" viewBox="0 0 18 19"><path d="M0.500 2.500q0 -2 2 -2h3.500q1 0 1.600 1.300h5.400q1.500 0 1.500 1.500v7.200q0 1.500 -1.500 1.500h-11q-1.500 0 -1.500 -1.500z" fill="url(#gFold)" stroke="#d09a48" stroke-width="0.9"/><rect x="4" y="8" width="7" height="6.500" fill="#30c030" stroke="#0a6a0a" stroke-width="0.600"/><circle cx="12.500" cy="8" r="3" fill="#2a3ae0"/><path d="M12 16.500l-3.500 0l3.500 -7l3.500 7z" fill="#e01818"/></svg>
<span class="t " style="left:44.5px;top:329.77px;font-size:13.5px;line-height:13.5px;color:#000;transform:scaleX(0.9585);">Load Collectors (6)</span>
<svg class="a" style="left:24px;top:329.5px" width="18" height="19" viewBox="0 0 18 19"><path d="M0.500 2.500q0 -2 2 -2h3.500q1 0 1.600 1.300h5.400q1.500 0 1.500 1.500v7.200q0 1.500 -1.500 1.500h-11q-1.500 0 -1.500 -1.500z" fill="url(#gFold)" stroke="#d09a48" stroke-width="0.9"/><path d="M7.500 2v9" stroke="#e01010" stroke-width="2"/><path d="M4 9.500h7l-3.500 4.500z" fill="#e01010"/><circle cx="7.500" cy="15" r="1.700" fill="#111"/><rect x="11" y="12" width="5" height="4" fill="#3cb030"/><path d="M11.500 13.300h4M11.500 14.700h4" stroke="#c8f0c0" stroke-width="0.600"/></svg>
<span class="t " style="left:44.5px;top:346.77px;font-size:13.5px;line-height:13.5px;color:#000;transform:scaleX(0.9507);">Load Steps (2)</span>
<svg class="a" style="left:24px;top:346.5px" width="18" height="19" viewBox="0 0 18 19"><path d="M0.500 2.500q0 -2 2 -2h3.500q1 0 1.600 1.300h5.400q1.500 0 1.500 1.500v7.200q0 1.500 -1.500 1.500h-11q-1.500 0 -1.500 -1.500z" fill="url(#gFold)" stroke="#d09a48" stroke-width="0.9"/><rect x="5.500" y="6.500" width="5" height="5" rx="1" fill="#20e020" stroke="#0a8a0a" stroke-width="0.8"/><rect x="10.500" y="6.500" width="5" height="5" rx="1" fill="#20e020" stroke="#0a8a0a" stroke-width="0.8"/><rect x="8" y="10.500" width="5.500" height="5" rx="1" fill="#20e020" stroke="#0a8a0a" stroke-width="0.8"/><path d="M10.800 0v7" stroke="#e01010" stroke-width="2"/><path d="M7.800 6h6l-3 3.500z" fill="#e01010"/></svg>
<span class="t " style="left:44.5px;top:363.77px;font-size:13.5px;line-height:13.5px;color:#000;transform:scaleX(0.9680);">Materials (5)</span>
<svg class="a" style="left:24px;top:363.5px" width="18" height="19" viewBox="0 0 18 19"><path d="M0.500 2.500q0 -2 2 -2h3.500q1 0 1.600 1.300h5.400q1.500 0 1.500 1.500v7.200q0 1.500 -1.500 1.500h-11q-1.500 0 -1.500 -1.500z" fill="url(#gFold)" stroke="#d09a48" stroke-width="0.9"/><path d="M6 16v-10h1.500M6 16h10" stroke="#111" stroke-width="1" fill="none"/><path d="M7.500 9.500q1 -4.500 5 -4.500q3 0 3.500 2.500" stroke="#e01010" stroke-width="1.500" fill="none"/><path d="M10 9.500h4l-1.300 2.500l1.300 3.500h-4l1.300 -3.500z" fill="#aaa" stroke="#555" stroke-width="0.600"/></svg>
<span class="t " style="left:44.9px;top:380.77px;font-size:13.5px;line-height:13.5px;color:#000;transform:scaleX(0.9432);">Output Blocks (6)</span>
<svg class="a" style="left:24px;top:380.5px" width="18" height="19" viewBox="0 0 18 19"><path d="M0.500 2.500q0 -2 2 -2h3.500q1 0 1.600 1.300h5.400q1.500 0 1.500 1.500v7.200q0 1.500 -1.500 1.500h-11q-1.500 0 -1.500 -1.500z" fill="url(#gFold)" stroke="#d09a48" stroke-width="0.9"/><rect x="3.500" y="5.500" width="6" height="10.500" fill="#fff" stroke="#555" stroke-width="0.800"/><path d="M4.500 7h4v2h-4zM4.500 12.500h4v2h-4z" fill="#e04040"/><path d="M10 11h4" stroke="#2a2ae0" stroke-width="1.600"/><path d="M13 8l3.500 3l-3.500 3z" fill="#2a2ae0"/></svg>
<span class="t " style="left:44.5px;top:397.77px;font-size:13.5px;line-height:13.5px;color:#000;transform:scaleX(0.9377);">Properties (22)</span>
<svg class="a" style="left:24px;top:397.5px" width="18" height="19" viewBox="0 0 18 19"><path d="M0.500 2.500q0 -2 2 -2h3.500q1 0 1.600 1.300h5.400q1.500 0 1.500 1.500v7.200q0 1.500 -1.500 1.500h-11q-1.500 0 -1.500 -1.500z" fill="url(#gFold)" stroke="#d09a48" stroke-width="0.9"/><g transform="translate(3.5 5)"><g transform="scale(0.900)"><path d="M0 4.5l7 -3.5l7 3.5l-7 3.5z" fill="#9a9a9a" stroke="#222" stroke-width="0.7"/><path d="M0 4.5l7 3.5v3.6l-7 -3.5z" fill="#6e6e6e" stroke="#222" stroke-width="0.7"/><path d="M7 8l7 -3.5v3.6l-7 3.5z" fill="#505050" stroke="#222" stroke-width="0.7"/></g></g><text x="2.500" y="7" font-family="Liberation Sans" font-weight="bold" font-size="8" fill="#000">t</text><path d="M1 9l1.300 2.200h-2.600zM1 15l1.300 -2.200h-2.600z" fill="#d01010"/></svg>
<span class="t " style="left:44.9px;top:414.77px;font-size:13.5px;line-height:13.5px;color:#000;transform:scaleX(0.9381);">Sets (92)</span>
<svg class="a" style="left:24px;top:414.5px" width="18" height="19" viewBox="0 0 18 19"><path d="M0.500 2.500q0 -2 2 -2h3.500q1 0 1.600 1.300h5.400q1.500 0 1.500 1.500v7.200q0 1.500 -1.500 1.500h-11q-1.500 0 -1.500 -1.500z" fill="url(#gFold)" stroke="#d09a48" stroke-width="0.9"/><rect x="5.500" y="6.500" width="5" height="5" rx="1" fill="#20e020" stroke="#0a8a0a" stroke-width="0.8"/><rect x="10.500" y="6.500" width="5" height="5" rx="1" fill="#20e020" stroke="#0a8a0a" stroke-width="0.8"/><rect x="8" y="10.500" width="5.500" height="5" rx="1" fill="#20e020" stroke="#0a8a0a" stroke-width="0.8"/></svg>
<span class="t " style="left:44.9px;top:431.77px;font-size:13.5px;line-height:13.5px;color:#000;transform:scaleX(0.9363);">Set Segments (55)</span>
<svg class="a" style="left:24px;top:431.5px" width="18" height="19" viewBox="0 0 18 19"><path d="M0.500 2.500q0 -2 2 -2h3.500q1 0 1.600 1.300h5.400q1.500 0 1.500 1.500v7.200q0 1.500 -1.500 1.500h-11q-1.500 0 -1.500 -1.500z" fill="url(#gFold)" stroke="#d09a48" stroke-width="0.9"/><path d="M5.500 7.500q5 -0.500 9 -3.500v9q-4 3 -9 4z" fill="#8486c4" stroke="#5a5ca4" stroke-width="0.500"/><circle cx="13.200" cy="13.300" r="2.700" fill="#20d030" stroke="#0a8a0a" stroke-width="0.500"/></svg>
<span class="t " style="left:44.9px;top:448.77px;font-size:13.5px;line-height:13.5px;color:#000;transform:scaleX(0.9526);">System Collectors (12)</span>
<svg class="a" style="left:24px;top:448.5px" width="18" height="19" viewBox="0 0 18 19"><path d="M0.500 2.500q0 -2 2 -2h3.500q1 0 1.600 1.300h5.400q1.500 0 1.500 1.500v7.200q0 1.500 -1.500 1.500h-11q-1.500 0 -1.500 -1.500z" fill="url(#gFold)" stroke="#d09a48" stroke-width="0.9"/><path d="M8.500 9.500V3M8.500 9.500L3 13M8.500 9.500L13 11.500" stroke="#5a5eb8" stroke-width="2" fill="none" stroke-linecap="round"/><rect x="11" y="12" width="5.500" height="4.500" fill="#3cb030" stroke="#2a8a1c" stroke-width="0.600"/><path d="M12 13.500h3.500M12 15h3.500" stroke="#d8f8c8" stroke-width="0.800"/></svg>
<span class="t " style="left:45.9px;top:465.77px;font-size:13.5px;line-height:13.5px;color:#000;transform:scaleX(0.9796);">Tables (4)</span>
<svg class="a" style="left:24px;top:465.5px" width="18" height="19" viewBox="0 0 18 19"><path d="M0.500 2.500q0 -2 2 -2h3.500q1 0 1.600 1.300h5.400q1.500 0 1.500 1.500v7.200q0 1.500 -1.500 1.500h-11q-1.500 0 -1.500 -1.500z" fill="url(#gFold)" stroke="#d09a48" stroke-width="0.9"/><rect x="2.500" y="6" width="13.500" height="9.500" fill="#c4c8ff" stroke="#444" stroke-width="1.100"/><rect x="3.200" y="6.600" width="12.200" height="2" fill="#fff"/><path d="M2.500 9h13.500M7 6v9.500M11.500 6v9.500" stroke="#444" stroke-width="1"/><path d="M4 11h1.600M4 13.200h1.600M8.500 11h1.600M8.500 13.200h1.600M13 11h1.600M13 13.200h1.600" stroke="#3a4af0" stroke-width="1.100"/></svg>
<span class="t " style="left:45.9px;top:482.77px;font-size:13.5px;line-height:13.5px;color:#000;transform:scaleX(0.9863);">Tags (2)</span>
<svg class="a" style="left:24px;top:482.5px" width="18" height="19" viewBox="0 0 18 19"><path d="M0.500 2.500q0 -2 2 -2h3.500q1 0 1.600 1.300h5.400q1.500 0 1.500 1.500v7.200q0 1.500 -1.500 1.500h-11q-1.500 0 -1.500 -1.500z" fill="url(#gFold)" stroke="#d09a48" stroke-width="0.9"/><path d="M3.500 12l6.500 -6.500h4.500l1 1v4l-6.500 6.500z" fill="#f8f020" stroke="#222" stroke-width="1"/></svg>
<span class="t " style="left:45.9px;top:499.77px;font-size:13.5px;line-height:13.5px;color:#000;transform:scaleX(0.9569);">Titles (1)</span>
<svg class="a" style="left:24px;top:499.5px" width="18" height="19" viewBox="0 0 18 19"><path d="M0.500 2.500q0 -2 2 -2h3.500q1 0 1.600 1.300h5.400q1.500 0 1.500 1.500v7.200q0 1.500 -1.500 1.500h-11q-1.500 0 -1.500 -1.500z" fill="url(#gFold)" stroke="#d09a48" stroke-width="0.9"/><rect x="6.500" y="5.500" width="9.500" height="8.500" rx="0.8" fill="#fff" stroke="#111" stroke-width="1.300"/><path d="M8.500 8.500h5.500M8.500 11h5.500" stroke="#111" stroke-width="1.200"/><path d="M7 13.500l-4.500 4.500" stroke="#111" stroke-width="1.400"/></svg>
<span class="t " style="left:224.0px;top:279.42px;font-size:12.5px;line-height:12.5px;color:#000;transform:scaleX(0.9091);">1</span>
<span class="t " style="left:223.9px;top:296.00px;font-size:13px;line-height:13px;color:#000;transform:scaleX(0.9197);">2</span>
<div class="a" style="left:236px;top:279px;width:14px;height:14px;background:#ff0000;border:1px solid #000;"></div>
<div class="a" style="left:236px;top:296px;width:14px;height:14px;background:#00ff00;border:1px solid #000;"></div>
<span class="t " style="left:294.0px;top:279.00px;font-size:13px;line-height:13px;color:#000;transform:scaleX(0.9615);">0</span>
<span class="t " style="left:294.0px;top:296.00px;font-size:13px;line-height:13px;color:#000;transform:scaleX(0.9615);">0</span>
<div class="a" style="left:263px;top:706px;width:1px;height:1px;background:#5a5a5a;"></div>
<div class="a" style="left:270px;top:706px;width:1px;height:1px;background:#5a5a5a;"></div>
<div class="a" style="left:277px;top:706px;width:1px;height:1px;background:#5a5a5a;"></div>
<svg class="a" style="left:523px;top:703px" width="9" height="9"><path d="M1 1L4.5 4L8 1M1 4.5L4.5 7.5L8 4.5" stroke="#333" stroke-width="1.2" fill="none"/></svg>
<div class="a" style="left:4px;top:712px;width:531px;height:1px;background:#a9b7c4;"></div>
<span class="t " style="left:5.2px;top:718.66px;font-size:12.8px;line-height:12.8px;color:#000;transform:scaleX(0.9781);">Name</span>
<span class="t " style="left:147.4px;top:718.66px;font-size:12.8px;line-height:12.8px;color:#000;transform:scaleX(0.9445);">Value</span>
<div class="a" style="left:4px;top:732px;width:531px;height:1px;background:#a9b7c4;"></div>
<div class="a" style="left:4px;top:733px;width:519px;height:283px;background:#ffffff;"></div>
<span class="t " style="left:24.7px;top:734.60px;font-size:13px;line-height:13px;color:#000;transform:scaleX(0.9823);">Name:</span>
<span class="t " style="left:148.5px;top:734.60px;font-size:13px;line-height:13px;color:#000;transform:scaleX(0.9116);">RBE2_Beam_Attach_1</span>
<span class="t " style="left:24.6px;top:752.60px;font-size:13px;line-height:13px;color:#000;transform:scaleX(0.9650);">ID:</span>
<span class="t " style="left:149.2px;top:752.60px;font-size:13px;line-height:13px;color:#000;transform:scaleX(0.8741);">1</span>
<span class="t " style="left:25.0px;top:770.60px;font-size:13px;line-height:13px;color:#000;transform:scaleX(1.0033);">Color:</span>
<span class="t " style="left:24.5px;top:788.60px;font-size:13px;line-height:13px;color:#808080;transform:scaleX(0.9963);">Include:</span>
<span class="t " style="left:148.4px;top:788.60px;font-size:13px;line-height:13px;color:#808080;transform:scaleX(1.0651);">[Main Model]</span>
<span class="t " style="left:25.1px;top:806.60px;font-size:13px;line-height:13px;color:#000;transform:scaleX(0.9850);">Config:</span>
<span class="t " style="left:148.8px;top:806.60px;font-size:13px;line-height:13px;color:#000;transform:scaleX(0.9782);">Coupling Kinematic</span>
<span class="t " style="left:24.7px;top:824.60px;font-size:13px;line-height:13px;color:#000;transform:scaleX(0.9744);">Reference Entity:</span>
<span class="t " style="left:148.7px;top:824.60px;font-size:13px;line-height:13px;color:#000;transform:scaleX(0.9267);">(24589) Node</span>
<span class="t " style="left:25.1px;top:842.60px;font-size:13px;line-height:13px;color:#000;transform:scaleX(0.9856);">Surface:</span>
<span class="t " style="left:148.7px;top:842.60px;font-size:13px;line-height:13px;color:#000;transform:scaleX(0.9383);">(18) _PickedSurf218</span>
<span class="t " style="left:24.5px;top:860.60px;font-size:13px;line-height:13px;color:#000;transform:scaleX(0.9852);">Influence Radius:</span>
<div class="a" style="left:148px;top:860.8px;width:14px;height:14px;border:1px solid #8e8f8f;border-radius:1.5px;background:linear-gradient(135deg,#d8d8d8,#f4f4f4);box-shadow:inset 0 0 0 1px #f4f4f4;"></div>
<span class="t " style="left:25.1px;top:878.60px;font-size:13px;line-height:13px;color:#000;transform:scaleX(0.9558);">Orientation:</span>
<div class="a" style="left:148px;top:878.8px;width:14px;height:14px;border:1px solid #8e8f8f;border-radius:1.5px;background:linear-gradient(135deg,#d8d8d8,#f4f4f4);box-shadow:inset 0 0 0 1px #f4f4f4;"></div>
<span class="t " style="left:25.7px;top:896.60px;font-size:13px;line-height:13px;color:#000;transform:scaleX(0.9790);">Alpha:</span>
<div class="a" style="left:148px;top:896.8px;width:14px;height:14px;border:1px solid #8e8f8f;border-radius:1.5px;background:linear-gradient(135deg,#d8d8d8,#f4f4f4);box-shadow:inset 0 0 0 1px #f4f4f4;"></div>
<span class="t " style="left:24.8px;top:914.60px;font-size:13px;line-height:13px;color:#000;transform:scaleX(0.9131);">DOF1:</span>
<div class="a" style="left:148px;top:914.8px;width:14px;height:14px;border:1px solid #8e8f8f;border-radius:1.5px;background:linear-gradient(135deg,#d8d8d8,#f4f4f4);box-shadow:inset 0 0 0 1px #f4f4f4;"></div>
<span class="t " style="left:24.8px;top:932.60px;font-size:13px;line-height:13px;color:#000;transform:scaleX(0.9131);">DOF2:</span>
<div class="a" style="left:148px;top:932.8px;width:14px;height:14px;border:1px solid #8e8f8f;border-radius:1.5px;background:linear-gradient(135deg,#d8d8d8,#f4f4f4);box-shadow:inset 0 0 0 1px #f4f4f4;"></div>
<span class="t " style="left:24.8px;top:950.60px;font-size:13px;line-height:13px;color:#000;transform:scaleX(0.9131);">DOF3:</span>
<div class="a" style="left:148px;top:950.8px;width:14px;height:14px;border:1px solid #8e8f8f;border-radius:1.5px;background:linear-gradient(135deg,#d8d8d8,#f4f4f4);box-shadow:inset 0 0 0 1px #f4f4f4;"></div>
<span class="t " style="left:24.8px;top:968.60px;font-size:13px;line-height:13px;color:#000;transform:scaleX(0.9131);">DOF4:</span>
<div class="a" style="left:148px;top:968.8px;width:14px;height:14px;border:1px solid #8e8f8f;border-radius:1.5px;background:linear-gradient(135deg,#d8d8d8,#f4f4f4);box-shadow:inset 0 0 0 1px #f4f4f4;"></div>
<span class="t " style="left:24.8px;top:986.60px;font-size:13px;line-height:13px;color:#000;transform:scaleX(0.9131);">DOF5:</span>
<div class="a" style="left:148px;top:986.8px;width:14px;height:14px;border:1px solid #8e8f8f;border-radius:1.5px;background:linear-gradient(135deg,#d8d8d8,#f4f4f4);box-shadow:inset 0 0 0 1px #f4f4f4;"></div>
<span class="t " style="left:24.8px;top:1004.60px;font-size:13px;line-height:13px;color:#000;transform:scaleX(0.9131);">DOF6:</span>
<div class="a" style="left:148px;top:1004.8px;width:14px;height:14px;border:1px solid #8e8f8f;border-radius:1.5px;background:linear-gradient(135deg,#d8d8d8,#f4f4f4);box-shadow:inset 0 0 0 1px #f4f4f4;"></div>
<div class="a" style="left:148px;top:771px;width:14px;height:14px;background:#ff0000;border:1px solid #000;"></div>
<svg class="a" style="left:9px;top:845px" width="9" height="9"><rect x="0.5" y="0.5" width="8" height="8" fill="#fff" stroke="#7b8a99"/><path d="M2.5 4.5H6.5M4.5 2.5V6.5" stroke="#0a246a" stroke-width="1"/></svg>
<div class="a" style="left:3px;top:1016px;width:533px;height:2px;background:#f0f0f0;border-top:1px solid #a9b7c4;"></div>
<div class="a" style="left:523px;top:733px;width:12px;height:283px;background:#ffffff;"></div>
<div class="a" style="left:524px;top:745px;width:10px;height:230px;background:#f0f0f0;border:1px solid #b4bcc4;"></div>
<svg class="a" style="left:525px;top:737px" width="9" height="6"><path d="M1 5L4.5 1.5L8 5" stroke="#444" stroke-width="1.6" fill="none"/></svg>
<svg class="a" style="left:525px;top:1007px" width="9" height="6"><path d="M1 1L4.5 4.5L8 1" stroke="#444" stroke-width="1.6" fill="none"/></svg>
<div class="a" style="left:539px;top:77px;width:1px;height:941px;background:#000;"></div>
<svg class="a" style="left:0;top:0" width="575" height="500" viewBox="0 0 575 500"><rect x="548" y="98" width="2" height="2" fill="#1a1a1a"/><rect x="554" y="98" width="2" height="2" fill="#1a1a1a"/><rect x="560" y="98" width="2" height="2" fill="#1a1a1a"/><rect x="566" y="98" width="2" height="2" fill="#1a1a1a"/><g transform="translate(548 106)"><path d="M3.0 8.5L7.1 8.2L7.1 12.4L3.0 12.7Z" fill="#6e70b8" stroke="#1c1c4c" stroke-width="0.600"/><path d="M3.0 12.7L7.1 12.4L7.1 16.5L3.0 16.8Z" fill="#f8f8f8" stroke="#8a8a8a" stroke-width="0.600"/><path d="M3.0 16.8L7.1 16.5L7.1 20.7L3.0 21.0Z" fill="#f8f8f8" stroke="#8a8a8a" stroke-width="0.600"/><path d="M7.1 8.2L11.2 6.8L11.2 11.0L7.1 12.4Z" fill="#6e70b8" stroke="#1c1c4c" stroke-width="0.600"/><path d="M7.1 12.4L11.2 11.0L11.2 15.2L7.1 16.5Z" fill="#f8f8f8" stroke="#8a8a8a" stroke-width="0.600"/><path d="M7.1 16.5L11.2 15.2L11.2 19.3L7.1 20.7Z" fill="#f8f8f8" stroke="#8a8a8a" stroke-width="0.600"/><path d="M11.2 6.8L15.4 4.5L15.4 8.7L11.2 11.0Z" fill="#6e70b8" stroke="#1c1c4c" stroke-width="0.600"/><path d="M11.2 11.0L15.4 8.7L15.4 12.9L11.2 15.2Z" fill="#6e70b8" stroke="#1c1c4c" stroke-width="0.600"/><path d="M11.2 15.2L15.4 12.9L15.4 17.0L11.2 19.3Z" fill="#f8f8f8" stroke="#8a8a8a" stroke-width="0.600"/><path d="M15.4 4.5L19.5 1.5L19.5 5.7L15.4 8.7Z" fill="#6e70b8" stroke="#1c1c4c" stroke-width="0.600"/><path d="M15.4 8.7L19.5 5.7L19.5 9.8L15.4 12.9Z" fill="#6e70b8" stroke="#1c1c4c" stroke-width="0.600"/><path d="M15.4 12.9L19.5 9.8L19.5 14.0L15.4 17.0Z" fill="#6e70b8" stroke="#1c1c4c" stroke-width="0.600"/><rect x="1.500" y="10" width="12.500" height="12.500" fill="none" stroke="#f02010" stroke-width="1.300"/></g><g transform="translate(548 134)"><path d="M3.0 8.5L7.1 8.2L7.1 12.4L3.0 12.7Z" fill="#6e70b8" stroke="#1c1c4c" stroke-width="0.600"/><path d="M3.0 12.7L7.1 12.4L7.1 16.5L3.0 16.8Z" fill="#6e70b8" stroke="#1c1c4c" stroke-width="0.600"/><path d="M3.0 16.8L7.1 16.5L7.1 20.7L3.0 21.0Z" fill="#f8f8f8" stroke="#8a8a8a" stroke-width="0.600"/><path d="M7.1 8.2L11.2 6.8L11.2 11.0L7.1 12.4Z" fill="#6e70b8" stroke="#1c1c4c" stroke-width="0.600"/><path d="M7.1 12.4L11.2 11.0L11.2 15.2L7.1 16.5Z" fill="#6e70b8" stroke="#1c1c4c" stroke-width="0.600"/><path d="M7.1 16.5L11.2 15.2L11.2 19.3L7.1 20.7Z" fill="#f8f8f8" stroke="#8a8a8a" stroke-width="0.600"/><path d="M11.2 6.8L15.4 4.5L15.4 8.7L11.2 11.0Z" fill="#6e70b8" stroke="#1c1c4c" stroke-width="0.600"/><path d="M11.2 11.0L15.4 8.7L15.4 12.9L11.2 15.2Z" fill="#6e70b8" stroke="#1c1c4c" stroke-width="0.600"/><path d="M11.2 15.2L15.4 12.9L15.4 17.0L11.2 19.3Z" fill="#f8f8f8" stroke="#8a8a8a" stroke-width="0.600"/><path d="M15.4 4.5L19.5 1.5L19.5 5.7L15.4 8.7Z" fill="#f8f8f8" stroke="#8a8a8a" stroke-width="0.600"/><path d="M15.4 8.7L19.5 5.7L19.5 9.8L15.4 12.9Z" fill="#f8f8f8" stroke="#8a8a8a" stroke-width="0.600"/><path d="M15.4 12.9L19.5 9.8L19.5 14.0L15.4 17.0Z" fill="#f8f8f8" stroke="#8a8a8a" stroke-width="0.600"/><path d="M10 16q5 2.500 10 -3l0.500 5.500q-5 3.500 -9 1l1 2.500l-5 -3.500l4.500 -4z" fill="#e81818"/></g><g transform="translate(548 162)"><path d="M3.0 8.5L7.1 8.2L7.1 12.4L3.0 12.7Z" fill="#6e70b8" stroke="#1c1c4c" stroke-width="0.600"/><path d="M3.0 12.7L7.1 12.4L7.1 16.5L3.0 16.8Z" fill="#6e70b8" stroke="#1c1c4c" stroke-width="0.600"/><path d="M3.0 16.8L7.1 16.5L7.1 20.7L3.0 21.0Z" fill="#f8f8f8" stroke="#8a8a8a" stroke-width="0.600"/><path d="M7.1 8.2L11.2 6.8L11.2 11.0L7.1 12.4Z" fill="#6e70b8" stroke="#1c1c4c" stroke-width="0.600"/><path d="M7.1 12.4L11.2 11.0L11.2 15.2L7.1 16.5Z" fill="#6e70b8" stroke="#1c1c4c" stroke-width="0.600"/><path d="M7.1 16.5L11.2 15.2L11.2 19.3L7.1 20.7Z" fill="#f8f8f8" stroke="#8a8a8a" stroke-width="0.600"/><path d="M11.2 6.8L15.4 4.5L15.4 8.7L11.2 11.0Z" fill="#6e70b8" stroke="#1c1c4c" stroke-width="0.600"/><path d="M11.2 11.0L15.4 8.7L15.4 12.9L11.2 15.2Z" fill="#f8f8f8" stroke="#8a8a8a" stroke-width="0.600"/><path d="M11.2 15.2L15.4 12.9L15.4 17.0L11.2 19.3Z" fill="#f8f8f8" stroke="#8a8a8a" stroke-width="0.600"/><path d="M15.4 4.5L19.5 1.5L19.5 5.7L15.4 8.7Z" fill="#f8f8f8" stroke="#8a8a8a" stroke-width="0.600"/><path d="M15.4 8.7L19.5 5.7L19.5 9.8L15.4 12.9Z" fill="#f8f8f8" stroke="#8a8a8a" stroke-width="0.600"/><path d="M15.4 12.9L19.5 9.8L19.5 14.0L15.4 17.0Z" fill="#f8f8f8" stroke="#8a8a8a" stroke-width="0.600"/></g><g transform="translate(548 190)"><path d="M3.0 8.5L7.1 8.2L7.1 12.4L3.0 12.7Z" fill="#6e70b8" stroke="#1c1c4c" stroke-width="0.600"/><path d="M3.0 12.7L7.1 12.4L7.1 16.5L3.0 16.8Z" fill="#6e70b8" stroke="#1c1c4c" stroke-width="0.600"/><path d="M3.0 16.8L7.1 16.5L7.1 20.7L3.0 21.0Z" fill="#6e70b8" stroke="#1c1c4c" stroke-width="0.600"/><path d="M7.1 8.2L11.2 6.8L11.2 11.0L7.1 12.4Z" fill="#6e70b8" stroke="#1c1c4c" stroke-width="0.600"/><path d="M7.1 12.4L11.2 11.0L11.2 15.2L7.1 16.5Z" fill="#6e70b8" stroke="#1c1c4c" stroke-width="0.600"/><path d="M7.1 16.5L11.2 15.2L11.2 19.3L7.1 20.7Z" fill="#6e70b8" stroke="#1c1c4c" stroke-width="0.600"/><path d="M11.2 6.8L15.4 4.5L15.4 8.7L11.2 11.0Z" fill="#6e70b8" stroke="#1c1c4c" stroke-width="0.600"/><path d="M11.2 11.0L15.4 8.7L15.4 12.9L11.2 15.2Z" fill="#6e70b8" stroke="#1c1c4c" stroke-width="0.600"/><path d="M11.2 15.2L15.4 12.9L15.4 17.0L11.2 19.3Z" fill="#6e70b8" stroke="#1c1c4c" stroke-width="0.600"/><path d="M15.4 4.5L19.5 1.5L19.5 5.7L15.4 8.7Z" fill="#6e70b8" stroke="#1c1c4c" stroke-width="0.600"/><path d="M15.4 8.7L19.5 5.7L19.5 9.8L15.4 12.9Z" fill="#6e70b8" stroke="#1c1c4c" stroke-width="0.600"/><path d="M15.4 12.9L19.5 9.8L19.5 14.0L15.4 17.0Z" fill="#6e70b8" stroke="#1c1c4c" stroke-width="0.600"/></g><g transform="translate(548 218)"><path d="M3.0 8.5L7.1 8.2L7.1 12.4L3.0 12.7Z" fill="#f8f8f8" stroke="#8a8a8a" stroke-width="0.600"/><path d="M3.0 12.7L7.1 12.4L7.1 16.5L3.0 16.8Z" fill="#6e70b8" stroke="#1c1c4c" stroke-width="0.600"/><path d="M3.0 16.8L7.1 16.5L7.1 20.7L3.0 21.0Z" fill="#6e70b8" stroke="#1c1c4c" stroke-width="0.600"/><path d="M7.1 8.2L11.2 6.8L11.2 11.0L7.1 12.4Z" fill="#f8f8f8" stroke="#8a8a8a" stroke-width="0.600"/><path d="M7.1 12.4L11.2 11.0L11.2 15.2L7.1 16.5Z" fill="#6e70b8" stroke="#1c1c4c" stroke-width="0.600"/><path d="M7.1 16.5L11.2 15.2L11.2 19.3L7.1 20.7Z" fill="#6e70b8" stroke="#1c1c4c" stroke-width="0.600"/><path d="M11.2 6.8L15.4 4.5L15.4 8.7L11.2 11.0Z" fill="#f8f8f8" stroke="#8a8a8a" stroke-width="0.600"/><path d="M11.2 11.0L15.4 8.7L15.4 12.9L11.2 15.2Z" fill="#6e70b8" stroke="#1c1c4c" stroke-width="0.600"/><path d="M11.2 15.2L15.4 12.9L15.4 17.0L11.2 19.3Z" fill="#6e70b8" stroke="#1c1c4c" stroke-width="0.600"/><path d="M15.4 4.5L19.5 1.5L19.5 5.7L15.4 8.7Z" fill="#f8f8f8" stroke="#8a8a8a" stroke-width="0.600"/><path d="M15.4 8.7L19.5 5.7L19.5 9.8L15.4 12.9Z" fill="#f8f8f8" stroke="#8a8a8a" stroke-width="0.600"/><path d="M15.4 12.9L19.5 9.8L19.5 14.0L15.4 17.0Z" fill="#f8f8f8" stroke="#8a8a8a" stroke-width="0.600"/><rect x="1.500" y="10" width="12.500" height="12.500" fill="none" stroke="#f02010" stroke-width="1.300"/></g><g transform="translate(549 247)"><g transform="translate(1.5 0)"><g transform="scale(0.880)"><path d="M3.0 8.5L7.1 8.2L7.1 12.4L3.0 12.7Z" fill="#6e70b8" stroke="#1c1c4c" stroke-width="0.600"/><path d="M3.0 12.7L7.1 12.4L7.1 16.5L3.0 16.8Z" fill="#6e70b8" stroke="#1c1c4c" stroke-width="0.600"/><path d="M3.0 16.8L7.1 16.5L7.1 20.7L3.0 21.0Z" fill="#6e70b8" stroke="#1c1c4c" stroke-width="0.600"/><path d="M7.1 8.2L11.2 6.8L11.2 11.0L7.1 12.4Z" fill="#6e70b8" stroke="#1c1c4c" stroke-width="0.600"/><path d="M7.1 12.4L11.2 11.0L11.2 15.2L7.1 16.5Z" fill="#6e70b8" stroke="#1c1c4c" stroke-width="0.600"/><path d="M7.1 16.5L11.2 15.2L11.2 19.3L7.1 20.7Z" fill="#6e70b8" stroke="#1c1c4c" stroke-width="0.600"/><path d="M11.2 6.8L15.4 4.5L15.4 8.7L11.2 11.0Z" fill="#6e70b8" stroke="#1c1c4c" stroke-width="0.600"/><path d="M11.2 11.0L15.4 8.7L15.4 12.9L11.2 15.2Z" fill="#6e70b8" stroke="#1c1c4c" stroke-width="0.600"/><path d="M11.2 15.2L15.4 12.9L15.4 17.0L11.2 19.3Z" fill="#6e70b8" stroke="#1c1c4c" stroke-width="0.600"/><path d="M15.4 4.5L19.5 1.5L19.5 5.7L15.4 8.7Z" fill="#6e70b8" stroke="#1c1c4c" stroke-width="0.600"/><path d="M15.4 8.7L19.5 5.7L19.5 9.8L15.4 12.9Z" fill="#6e70b8" stroke="#1c1c4c" stroke-width="0.600"/><path d="M15.4 12.9L19.5 9.8L19.5 14.0L15.4 17.0Z" fill="#6e70b8" stroke="#1c1c4c" stroke-width="0.600"/></g></g><circle cx="10.500" cy="10.500" r="9.700" fill="none" stroke="#f04020" stroke-width="1.200"/></g><g transform="translate(548 276)"><path d="M4.900 3.600L10 1.700L11.900 13.200L8.100 18.300L2.300 15.100L1 9.300Z" fill="#1c2458" stroke="#0a1030" stroke-width="0.800" stroke-linejoin="round"/><path d="M10 1.700L15.100 3.600L21.500 9.300L18.900 13.800L13.200 11.900L10.600 6.800Z" fill="#1c2458" stroke="#0a1030" stroke-width="0.800" stroke-linejoin="round"/><path d="M5.500 4.500L3 10M12.500 3.500L17 8" stroke="#4a5ab0" stroke-width="1.400"/><ellipse cx="6.600" cy="15.300" rx="3" ry="2" fill="#3a7af4" transform="rotate(25 6.600 15.300)"/><ellipse cx="18.400" cy="10.600" rx="2.100" ry="2.600" fill="#3a7af4" transform="rotate(-30 18.400 10.600)"/><circle cx="7.200" cy="14.800" r="0.900" fill="#b8d4ff"/><circle cx="18.800" cy="10" r="0.900" fill="#b8d4ff"/></g><g transform="translate(548 304)"><circle cx="6" cy="5" r="4.800" fill="#1a1ac8"/><rect x="5.200" y="4" width="1.800" height="4" fill="#fff"/><circle cx="6.100" cy="2.400" r="1" fill="#fff"/><text x="3.500" y="21" font-family="Liberation Sans" font-weight="bold" font-size="9.300" fill="#444" stroke="#444" stroke-width="0.350">123</text></g><g transform="translate(548 331)"><path d="M2 18.500L19.500 10" stroke="#3a3c8c" stroke-width="1.600"/><path d="M2 15v6M19.500 7v6" stroke="#3a3c8c" stroke-width="1.400"/><text x="0" y="13" font-family="Liberation Sans" font-size="7.500" fill="#111">0</text><text x="17.500" y="6" font-family="Liberation Sans" font-size="7.500" fill="#111">1</text><text x="9.500" y="22" font-family="Liberation Sans" font-size="7.500" fill="#111">+10'</text></g><g transform="translate(548 360)"><path d="M0.500 3.500l9 -3v9l-9 3z" fill="#7e80c0" stroke="#3c3e84" stroke-width="0.700"/><path d="M5 2v9M0.500 8l9 -3" stroke="#3c3e84" stroke-width="0.800"/><text x="2.300" y="21" font-family="Liberation Sans" font-weight="bold" font-size="8.800" fill="#444" stroke="#444" stroke-width="0.350">ABC</text></g><g transform="translate(548 388)"><path d="M2.500 0v8" stroke="#e01010" stroke-width="1.800"/><path d="M0 6.500h5l-2.500 4z" fill="#e01010"/><circle cx="2.500" cy="11.500" r="1.500" fill="#111"/><text x="2.300" y="21" font-family="Liberation Sans" font-weight="bold" font-size="8.800" fill="#444" stroke="#444" stroke-width="0.350">ABC</text></g><g transform="translate(548 416)"><path d="M0.500 6l11 -2.500v6l-11 2.500z" fill="#8e90cc" stroke="#4a4c94" stroke-width="0.700"/><path d="M6 4.500v6" stroke="#4a4c94" stroke-width="0.700"/><path d="M9.500 13l11 -2.500v6l-11 2.500z" fill="#8e90cc" stroke="#4a4c94" stroke-width="0.700"/><path d="M15 11.500v6" stroke="#4a4c94" stroke-width="0.700"/><path d="M3 0v4" stroke="#e01010" stroke-width="1.600"/><path d="M1 3h4l-2 3z" fill="#e01010"/><path d="M19 17v4" stroke="#e01010" stroke-width="1.600"/><path d="M17 20h4l-2 3z" fill="#e01010"/><path d="M15 5q1 -3.500 4 -2.500M20 4q-1 3.500 -4 2.500" stroke="#999" stroke-width="1.200" fill="none"/></g><g transform="translate(548 444)"><path d="M3 6l16 -4.500l-1 12l-15 4.500z" fill="#5a9ae8" stroke="#222" stroke-width="0.900"/><g fill="#fff" stroke="#222" stroke-width="0.900"><circle cx="3" cy="6" r="1.800"/><circle cx="19" cy="1.800" r="1.800"/><circle cx="18" cy="13.500" r="1.800"/><circle cx="3" cy="18" r="1.800"/></g></g><g transform="translate(552 472)"><rect x="3.500" y="0.500" width="8" height="4" rx="1.500" fill="#6a6cb0" stroke="#3c3e84" stroke-width="0.700"/><path d="M0.500 9q0 -4 4 -4h6q4 0 4 4v9q0 3 -3 3h-8q-3 0 -3 -3z" fill="url(#gPurH)" stroke="#3c3e84" stroke-width="0.800"/></g></svg>
<svg class="a" style="left:0;top:0" width="1365" height="1018" viewBox="0 0 1365 1018" shape-rendering="crispEdges"><defs><linearGradient id="bg" x1="0" y1="0" x2="0" y2="1"><stop offset="0" stop-color="#2d547f"/><stop offset="1" stop-color="#a4a4a4"/></linearGradient><clipPath id="vc"><rect x="576" y="94" width="789" height="714"/></clipPath></defs><rect x="575" y="93" width="791" height="716" fill="#00ffff"/><rect x="576" y="94" width="789" height="714" fill="url(#bg)"/><g clip-path="url(#vc)"><polygon points="900.3,237.0 908.7,209.4 915.2,182.4 921.4,155.0 927.3,127.3 932.9,100.3 938.6,71.0 944.4,40.5 950.6,9.1 977.8,21.2 1005.0,33.4 1032.1,45.5 1059.3,57.6 1086.5,69.8 1113.7,81.9 1140.9,94.0 1168.0,106.1 1195.2,118.3 1222.4,130.4 1192.6,148.6 1163.2,166.6 1133.2,184.2 1103.0,201.8 1073.2,219.6 1043.2,237.4 1014.2,254.9 985.5,272.5 977.0,268.9 968.5,265.4 959.9,261.9 951.4,258.3 942.9,254.8 934.4,251.2 925.9,247.6 917.3,244.1 908.8,240.6" fill="#ae2a5d"/><polygon points="948.5,20.5 975.9,31.5 1003.3,42.5 1030.7,53.5 1058.1,64.5 1085.5,75.5 1112.8,86.4 1140.2,97.4 1167.6,108.4 1195.0,119.4 1222.4,130.4 1263.2,110.7 1304.0,91.0 1344.8,71.3 1385.6,51.6 1385.6,51.6 1358.2,42.7 1330.8,33.9 1303.4,25.0 1276.0,16.2 1248.7,7.3 1221.3,-1.5 1193.9,-10.4 1166.5,-19.3 1139.1,-28.1 1111.7,-37.0 1070.9,-22.6 1030.1,-8.2 989.3,6.1" fill="#b0275f"/><polygon points="985.5,272.5 1014.2,254.9 1043.2,237.4 1073.2,219.6 1103.0,201.8 1133.2,184.2 1163.2,166.6 1192.6,148.6 1222.4,130.4 1222.0,166.2 1221.6,202.1 1221.3,238.0 1220.9,273.8 1220.5,309.6 1220.1,345.5 1219.7,381.4 1219.3,417.2 1219.0,453.1 1218.6,488.9 1218.2,524.8 1217.8,560.6 1217.4,596.5 1217.1,632.3 1216.7,668.1 1216.3,704.0 1216.3,704.0 1187.0,694.1 1157.7,684.2 1128.4,674.4 1099.2,664.5 1069.9,654.6 1040.6,644.8 1011.3,634.9 982.0,625.0 982.2,603.0 982.4,580.9 982.7,558.9 982.9,536.9 983.1,514.8 983.3,492.8 983.5,470.8 983.8,448.8 984.0,426.7 984.2,404.7 984.4,382.7 984.6,360.6 984.8,338.6 985.1,316.6 985.3,294.5" fill="#851f47"/><polygon points="1222.4,130.4 1263.2,110.7 1304.0,91.0 1344.8,71.3 1385.6,51.6 1385.3,87.0 1385.0,122.5 1384.7,158.0 1384.4,193.4 1384.1,228.9 1383.8,264.4 1383.5,299.8 1383.1,335.3 1382.8,370.8 1382.5,406.2 1382.2,441.7 1381.9,477.2 1381.6,512.6 1381.3,548.1 1381.0,583.5 1380.7,619.0 1380.7,619.0 1339.6,640.3 1298.5,661.5 1257.4,682.8 1216.3,704.0 1216.7,668.1 1217.1,632.3 1217.4,596.5 1217.8,560.6 1218.2,524.8 1218.6,488.9 1219.0,453.1 1219.3,417.2 1219.7,381.4 1220.1,345.5 1220.5,309.6 1220.9,273.8 1221.3,238.0 1221.6,202.1 1222.0,166.2" fill="#811f45"/><path d="M908.7 209.4 L919.3 214.0 L929.8 218.5 L940.4 223.0 L950.9 227.6 L961.5 232.1 L972.0 236.7 L982.5 241.3 L993.1 245.8 L1003.7 250.3 L1014.2 254.9M915.2 182.4 L928.0 187.9 L940.8 193.4 L953.6 198.9 L966.4 204.4 L979.2 209.9 L992.0 215.4 L1004.8 220.9 L1017.6 226.4 L1030.4 231.9 L1043.2 237.4M921.4 155.0 L936.6 161.5 L951.8 167.9 L966.9 174.4 L982.1 180.8 L997.3 187.3 L1012.5 193.8 L1027.7 200.2 L1042.8 206.7 L1058.0 213.1 L1073.2 219.6M927.3 127.3 L944.9 134.7 L962.4 142.2 L980.0 149.7 L997.6 157.1 L1015.1 164.6 L1032.7 172.0 L1050.3 179.4 L1067.9 186.9 L1085.4 194.4 L1103.0 201.8M932.9 100.3 L952.9 108.7 L973.0 117.1 L993.0 125.5 L1013.0 133.9 L1033.1 142.2 L1053.1 150.6 L1073.1 159.0 L1093.1 167.4 L1113.2 175.8 L1133.2 184.2M938.6 71.0 L961.1 80.6 L983.5 90.1 L1006.0 99.7 L1028.4 109.2 L1050.9 118.8 L1073.4 128.4 L1095.8 137.9 L1118.3 147.5 L1140.7 157.0 L1163.2 166.6M944.4 40.5 L969.2 51.3 L994.0 62.1 L1018.9 72.9 L1043.7 83.7 L1068.5 94.6 L1093.3 105.4 L1118.1 116.2 L1143.0 127.0 L1167.8 137.8 L1192.6 148.6M908.8 240.6 L919.3 214.0 L928.0 187.9 L936.6 161.5 L944.9 134.7 L952.9 108.7 L961.1 80.6 L969.2 51.3 L977.8 21.2M917.3 244.1 L929.8 218.5 L940.8 193.4 L951.8 167.9 L962.4 142.2 L973.0 117.1 L983.5 90.1 L994.0 62.1 L1005.0 33.4M925.9 247.6 L940.4 223.0 L953.6 198.9 L966.9 174.4 L980.0 149.7 L993.0 125.5 L1006.0 99.7 L1018.9 72.9 L1032.1 45.5M934.4 251.2 L950.9 227.6 L966.4 204.4 L982.1 180.8 L997.6 157.1 L1013.0 133.9 L1028.4 109.2 L1043.7 83.7 L1059.3 57.6M942.9 254.8 L961.5 232.1 L979.2 209.9 L997.3 187.3 L1015.1 164.6 L1033.1 142.2 L1050.9 118.8 L1068.5 94.6 L1086.5 69.8M951.4 258.3 L972.0 236.7 L992.0 215.4 L1012.5 193.8 L1032.7 172.0 L1053.1 150.6 L1073.4 128.4 L1093.3 105.4 L1113.7 81.9M959.9 261.9 L982.5 241.3 L1004.8 220.9 L1027.7 200.2 L1050.3 179.4 L1073.1 159.0 L1095.8 137.9 L1118.1 116.2 L1140.9 94.0M968.5 265.4 L993.1 245.8 L1017.6 226.4 L1042.8 206.7 L1067.9 186.9 L1093.1 167.4 L1118.3 147.5 L1143.0 127.0 L1168.0 106.1M977.0 268.9 L1003.7 250.3 L1030.4 231.9 L1058.0 213.1 L1085.4 194.4 L1113.2 175.8 L1140.7 157.0 L1167.8 137.8 L1195.2 118.3" fill="none" stroke="#5e1a3a" stroke-width="1"/><path d="M989.3 6.1 L1016.7 16.6 L1044.1 27.0 L1071.5 37.5 L1098.9 48.0 L1126.2 58.4 L1153.6 68.9 L1181.0 79.3 L1208.4 89.8 L1235.8 100.2 L1263.2 110.7M1030.1 -8.2 L1057.5 1.7 L1084.9 11.6 L1112.3 21.5 L1139.7 31.5 L1167.0 41.4 L1194.4 51.3 L1221.8 61.2 L1249.2 71.2 L1276.6 81.1 L1304.0 91.0M1070.9 -22.6 L1098.3 -13.2 L1125.7 -3.8 L1153.1 5.6 L1180.5 15.0 L1207.9 24.4 L1235.2 33.7 L1262.6 43.1 L1290.0 52.5 L1317.4 61.9 L1344.8 71.3M975.9 31.5 L1016.7 16.6 L1057.5 1.7 L1098.3 -13.2 L1139.1 -28.1M1003.3 42.5 L1044.1 27.0 L1084.9 11.6 L1125.7 -3.8 L1166.5 -19.3M1030.7 53.5 L1071.5 37.5 L1112.3 21.5 L1153.1 5.6 L1193.9 -10.4M1058.1 64.5 L1098.9 48.0 L1139.7 31.5 L1180.5 15.0 L1221.3 -1.5M1085.5 75.5 L1126.2 58.4 L1167.0 41.4 L1207.9 24.4 L1248.7 7.3M1112.8 86.4 L1153.6 68.9 L1194.4 51.3 L1235.2 33.7 L1276.0 16.2M1140.2 97.4 L1181.0 79.3 L1221.8 61.2 L1262.6 43.1 L1303.4 25.0M1167.6 108.4 L1208.4 89.8 L1249.2 71.2 L1290.0 52.5 L1330.8 33.9M1195.0 119.4 L1235.8 100.2 L1276.6 81.1 L1317.4 61.9 L1358.2 42.7" fill="none" stroke="#5e1a3a" stroke-width="1"/><path d="M985.3 294.5 L1014.2 278.6 L1043.3 262.8 L1073.2 246.7 L1102.9 230.7 L1133.0 214.7 L1162.9 198.8 L1192.3 182.6 L1222.0 166.2M985.1 316.6 L1014.2 302.3 L1043.4 288.2 L1073.2 273.8 L1102.9 259.5 L1132.7 245.3 L1162.5 231.1 L1192.0 216.6 L1221.6 202.1M984.8 338.6 L1014.2 326.1 L1043.6 313.5 L1073.2 300.9 L1102.8 288.4 L1132.5 275.8 L1162.2 263.3 L1191.7 250.6 L1221.3 238.0M984.6 360.6 L1014.2 349.8 L1043.7 338.9 L1073.2 328.1 L1102.8 317.2 L1132.3 306.4 L1161.8 295.5 L1191.3 284.7 L1220.9 273.8M984.4 382.7 L1013.9 373.5 L1043.4 364.4 L1072.9 355.3 L1102.5 346.2 L1132.0 337.0 L1161.5 327.9 L1191.0 318.8 L1220.5 309.6M984.2 404.7 L1013.7 397.3 L1043.2 389.9 L1072.7 382.5 L1102.2 375.1 L1131.6 367.7 L1161.1 360.3 L1190.6 352.9 L1220.1 345.5M984.0 426.7 L1013.4 421.0 L1042.9 415.4 L1072.4 409.7 L1101.8 404.0 L1131.3 398.4 L1160.8 392.7 L1190.3 387.0 L1219.7 381.4M983.8 448.8 L1013.2 444.8 L1042.7 440.9 L1072.1 436.9 L1101.5 433.0 L1131.0 429.0 L1160.4 425.1 L1189.9 421.1 L1219.3 417.2M983.5 470.8 L1013.0 468.6 L1042.4 466.3 L1071.8 464.1 L1101.2 461.9 L1130.7 459.7 L1160.1 457.5 L1189.5 455.3 L1219.0 453.1M983.3 492.8 L1012.7 492.3 L1042.1 491.8 L1071.5 491.3 L1101.0 490.9 L1130.4 490.4 L1159.8 489.9 L1189.2 489.4 L1218.6 488.9M983.1 514.8 L1012.5 516.1 L1041.9 517.3 L1071.3 518.6 L1100.7 519.8 L1130.0 521.0 L1159.4 522.3 L1188.8 523.5 L1218.2 524.8M982.9 536.9 L1012.2 539.8 L1041.6 542.8 L1071.0 545.8 L1100.3 548.7 L1129.7 551.7 L1159.1 554.7 L1188.5 557.6 L1217.8 560.6M982.7 558.9 L1012.0 563.6 L1041.4 568.3 L1070.7 573.0 L1100.0 577.7 L1129.4 582.4 L1158.7 587.1 L1188.1 591.8 L1217.4 596.5M982.4 580.9 L1011.8 587.4 L1041.1 593.8 L1070.4 600.2 L1099.8 606.6 L1129.1 613.0 L1158.4 619.5 L1187.7 625.9 L1217.1 632.3M982.2 603.0 L1011.5 611.1 L1040.8 619.3 L1070.1 627.4 L1099.4 635.6 L1128.8 643.7 L1158.1 651.9 L1187.4 660.0 L1216.7 668.1M1014.2 254.9 L1014.2 278.6 L1014.2 302.3 L1014.2 326.1 L1014.2 349.8 L1013.9 373.5 L1013.7 397.3 L1013.4 421.0 L1013.2 444.8 L1013.0 468.6 L1012.7 492.3 L1012.5 516.1 L1012.2 539.8 L1012.0 563.6 L1011.8 587.4 L1011.5 611.1 L1011.3 634.9M1043.2 237.4 L1043.3 262.8 L1043.4 288.2 L1043.6 313.5 L1043.7 338.9 L1043.4 364.4 L1043.2 389.9 L1042.9 415.4 L1042.7 440.9 L1042.4 466.3 L1042.1 491.8 L1041.9 517.3 L1041.6 542.8 L1041.4 568.3 L1041.1 593.8 L1040.8 619.3 L1040.6 644.8M1073.2 219.6 L1073.2 246.7 L1073.2 273.8 L1073.2 300.9 L1073.2 328.1 L1072.9 355.3 L1072.7 382.5 L1072.4 409.7 L1072.1 436.9 L1071.8 464.1 L1071.5 491.3 L1071.3 518.6 L1071.0 545.8 L1070.7 573.0 L1070.4 600.2 L1070.1 627.4 L1069.9 654.6M1103.0 201.8 L1102.9 230.7 L1102.9 259.5 L1102.8 288.4 L1102.8 317.2 L1102.5 346.2 L1102.2 375.1 L1101.8 404.0 L1101.5 433.0 L1101.2 461.9 L1101.0 490.9 L1100.7 519.8 L1100.3 548.7 L1100.0 577.7 L1099.8 606.6 L1099.4 635.6 L1099.2 664.5M1133.2 184.2 L1133.0 214.7 L1132.7 245.3 L1132.5 275.8 L1132.3 306.4 L1132.0 337.0 L1131.6 367.7 L1131.3 398.4 L1131.0 429.0 L1130.7 459.7 L1130.4 490.4 L1130.0 521.0 L1129.7 551.7 L1129.4 582.4 L1129.1 613.0 L1128.8 643.7 L1128.4 674.4M1163.2 166.6 L1162.9 198.8 L1162.5 231.1 L1162.2 263.3 L1161.8 295.5 L1161.5 327.9 L1161.1 360.3 L1160.8 392.7 L1160.4 425.1 L1160.1 457.5 L1159.8 489.9 L1159.4 522.3 L1159.1 554.7 L1158.7 587.1 L1158.4 619.5 L1158.1 651.9 L1157.7 684.2M1192.6 148.6 L1192.3 182.6 L1192.0 216.6 L1191.7 250.6 L1191.3 284.7 L1191.0 318.8 L1190.6 352.9 L1190.3 387.0 L1189.9 421.1 L1189.5 455.3 L1189.2 489.4 L1188.8 523.5 L1188.5 557.6 L1188.1 591.8 L1187.7 625.9 L1187.4 660.0 L1187.0 694.1M1222.4 130.4 L1222.0 166.2 L1221.6 202.1 L1221.3 238.0 L1220.9 273.8 L1220.5 309.6 L1220.1 345.5 L1219.7 381.4 L1219.3 417.2 L1219.0 453.1 L1218.6 488.9 L1218.2 524.8 L1217.8 560.6 L1217.4 596.5 L1217.1 632.3 L1216.7 668.1 L1216.3 704.0" fill="none" stroke="#6a1c3f" stroke-width="1"/><path d="M1222.0 166.2 L1262.8 146.4 L1303.7 126.6 L1344.5 106.8 L1385.3 87.0M1221.6 202.1 L1262.5 182.2 L1303.3 162.3 L1344.2 142.4 L1385.0 122.5M1221.3 238.0 L1262.1 218.0 L1303.0 198.0 L1343.8 178.0 L1384.7 158.0M1220.9 273.8 L1261.8 253.7 L1302.6 233.6 L1343.5 213.5 L1384.4 193.4M1220.5 309.6 L1261.4 289.5 L1302.3 269.3 L1343.2 249.1 L1384.1 228.9M1220.1 345.5 L1261.0 325.2 L1301.9 304.9 L1342.8 284.7 L1383.8 264.4M1219.7 381.4 L1260.7 361.0 L1301.6 340.6 L1342.5 320.2 L1383.5 299.8M1219.3 417.2 L1260.3 396.7 L1301.2 376.3 L1342.2 355.8 L1383.1 335.3M1219.0 453.1 L1259.9 432.5 L1300.9 411.9 L1341.9 391.3 L1382.8 370.8M1218.6 488.9 L1259.6 468.2 L1300.6 447.6 L1341.6 426.9 L1382.5 406.2M1218.2 524.8 L1259.2 504.0 L1300.2 483.2 L1341.2 462.5 L1382.2 441.7M1217.8 560.6 L1258.9 539.7 L1299.9 518.9 L1340.9 498.0 L1381.9 477.2M1217.4 596.5 L1258.5 575.5 L1299.5 554.5 L1340.6 533.6 L1381.6 512.6M1217.1 632.3 L1258.1 611.2 L1299.2 590.2 L1340.2 569.1 L1381.3 548.1M1216.7 668.1 L1257.8 647.0 L1298.8 625.8 L1339.9 604.7 L1381.0 583.5M1263.2 110.7 L1262.8 146.4 L1262.5 182.2 L1262.1 218.0 L1261.8 253.7 L1261.4 289.5 L1261.0 325.2 L1260.7 361.0 L1260.3 396.7 L1259.9 432.5 L1259.6 468.2 L1259.2 504.0 L1258.9 539.7 L1258.5 575.5 L1258.1 611.2 L1257.8 647.0 L1257.4 682.8M1304.0 91.0 L1303.7 126.6 L1303.3 162.3 L1303.0 198.0 L1302.6 233.6 L1302.3 269.3 L1301.9 304.9 L1301.6 340.6 L1301.2 376.3 L1300.9 411.9 L1300.6 447.6 L1300.2 483.2 L1299.9 518.9 L1299.5 554.5 L1299.2 590.2 L1298.8 625.8 L1298.5 661.5M1344.8 71.3 L1344.5 106.8 L1344.2 142.4 L1343.8 178.0 L1343.5 213.5 L1343.2 249.1 L1342.8 284.7 L1342.5 320.2 L1342.2 355.8 L1341.9 391.3 L1341.6 426.9 L1341.2 462.5 L1340.9 498.0 L1340.6 533.6 L1340.2 569.1 L1339.9 604.7 L1339.6 640.3" fill="none" stroke="#6a1c3f" stroke-width="1"/><polygon points="900.3,237.0 985.5,272.5 982.0,625.0 896.5,589.5" fill="#c4287a"/><path d="M900.1 259.0 L908.6 262.6 L917.1 266.1 L925.6 269.7 L934.1 273.2 L942.7 276.8 L951.2 280.3 L959.7 283.9 L968.2 287.4 L976.8 291.0 L985.3 294.5M899.8 281.1 L908.3 284.6 L916.9 288.2 L925.4 291.7 L933.9 295.3 L942.4 298.8 L951.0 302.4 L959.5 305.9 L968.0 309.5 L976.5 313.0 L985.1 316.6M899.6 303.1 L908.1 306.6 L916.6 310.2 L925.2 313.7 L933.7 317.3 L942.2 320.8 L950.7 324.4 L959.3 327.9 L967.8 331.5 L976.3 335.0 L984.8 338.6M899.3 325.1 L907.9 328.7 L916.4 332.2 L924.9 335.8 L933.5 339.3 L942.0 342.9 L950.5 346.4 L959.0 350.0 L967.6 353.5 L976.1 357.1 L984.6 360.6M899.1 347.2 L907.6 350.7 L916.2 354.3 L924.7 357.8 L933.2 361.4 L941.8 364.9 L950.3 368.5 L958.8 372.0 L967.3 375.6 L975.9 379.1 L984.4 382.7M898.9 369.2 L907.4 372.7 L915.9 376.3 L924.5 379.8 L933.0 383.4 L941.5 386.9 L950.1 390.5 L958.6 394.0 L967.1 397.6 L975.7 401.1 L984.2 404.7M898.6 391.2 L907.2 394.8 L915.7 398.3 L924.2 401.9 L932.8 405.4 L941.3 409.0 L949.8 412.5 L958.4 416.1 L966.9 419.6 L975.4 423.2 L984.0 426.7M898.4 413.2 L906.9 416.8 L915.5 420.4 L924.0 423.9 L932.5 427.4 L941.1 431.0 L949.6 434.6 L958.1 438.1 L966.7 441.6 L975.2 445.2 L983.8 448.8M898.2 435.3 L906.7 438.8 L915.2 442.4 L923.8 445.9 L932.3 449.5 L940.8 453.0 L949.4 456.6 L957.9 460.1 L966.5 463.7 L975.0 467.2 L983.5 470.8M897.9 457.3 L906.5 460.9 L915.0 464.4 L923.5 468.0 L932.1 471.5 L940.6 475.1 L949.2 478.6 L957.7 482.2 L966.2 485.7 L974.8 489.3 L983.3 492.8M897.7 479.3 L906.2 482.9 L914.8 486.4 L923.3 490.0 L931.9 493.5 L940.4 497.1 L948.9 500.6 L957.5 504.2 L966.0 507.7 L974.6 511.3 L983.1 514.8M897.5 501.4 L906.0 504.9 L914.5 508.5 L923.1 512.0 L931.6 515.6 L940.2 519.1 L948.7 522.7 L957.2 526.2 L965.8 529.8 L974.3 533.3 L982.9 536.9M897.2 523.4 L905.8 527.0 L914.3 530.5 L922.8 534.1 L931.4 537.6 L939.9 541.2 L948.5 544.7 L957.0 548.3 L965.6 551.8 L974.1 555.4 L982.7 558.9M897.0 545.4 L905.5 549.0 L914.1 552.5 L922.6 556.1 L931.2 559.6 L939.7 563.2 L948.3 566.7 L956.8 570.3 L965.3 573.8 L973.9 577.4 L982.4 580.9M896.7 567.5 L905.3 571.0 L913.8 574.6 L922.4 578.1 L930.9 581.7 L939.5 585.2 L948.0 588.8 L956.6 592.3 L965.1 595.9 L973.7 599.4 L982.2 603.0M908.8 240.6 L908.6 262.6 L908.3 284.6 L908.1 306.6 L907.9 328.7 L907.6 350.7 L907.4 372.7 L907.2 394.8 L906.9 416.8 L906.7 438.8 L906.5 460.9 L906.2 482.9 L906.0 504.9 L905.8 527.0 L905.5 549.0 L905.3 571.0 L905.0 593.0M917.3 244.1 L917.1 266.1 L916.9 288.2 L916.6 310.2 L916.4 332.2 L916.2 354.3 L915.9 376.3 L915.7 398.3 L915.5 420.4 L915.2 442.4 L915.0 464.4 L914.8 486.4 L914.5 508.5 L914.3 530.5 L914.1 552.5 L913.8 574.6 L913.6 596.6M925.9 247.7 L925.6 269.7 L925.4 291.7 L925.2 313.7 L924.9 335.8 L924.7 357.8 L924.5 379.8 L924.2 401.9 L924.0 423.9 L923.8 445.9 L923.5 468.0 L923.3 490.0 L923.1 512.0 L922.8 534.1 L922.6 556.1 L922.4 578.1 L922.1 600.1M934.4 251.2 L934.1 273.2 L933.9 295.3 L933.7 317.3 L933.5 339.3 L933.2 361.4 L933.0 383.4 L932.8 405.4 L932.5 427.4 L932.3 449.5 L932.1 471.5 L931.9 493.5 L931.6 515.6 L931.4 537.6 L931.2 559.6 L930.9 581.7 L930.7 603.7M942.9 254.8 L942.7 276.8 L942.4 298.8 L942.2 320.8 L942.0 342.9 L941.8 364.9 L941.5 386.9 L941.3 409.0 L941.1 431.0 L940.8 453.0 L940.6 475.1 L940.4 497.1 L940.2 519.1 L939.9 541.2 L939.7 563.2 L939.5 585.2 L939.2 607.2M951.4 258.3 L951.2 280.3 L951.0 302.4 L950.7 324.4 L950.5 346.4 L950.3 368.5 L950.1 390.5 L949.8 412.5 L949.6 434.6 L949.4 456.6 L949.2 478.6 L948.9 500.6 L948.7 522.7 L948.5 544.7 L948.3 566.7 L948.0 588.8 L947.8 610.8M959.9 261.9 L959.7 283.9 L959.5 305.9 L959.3 327.9 L959.0 350.0 L958.8 372.0 L958.6 394.0 L958.4 416.1 L958.1 438.1 L957.9 460.1 L957.7 482.2 L957.5 504.2 L957.2 526.2 L957.0 548.3 L956.8 570.3 L956.6 592.3 L956.4 614.4M968.5 265.4 L968.2 287.4 L968.0 309.5 L967.8 331.5 L967.6 353.5 L967.3 375.6 L967.1 397.6 L966.9 419.6 L966.7 441.6 L966.5 463.7 L966.2 485.7 L966.0 507.7 L965.8 529.8 L965.6 551.8 L965.3 573.8 L965.1 595.9 L964.9 617.9M977.0 268.9 L976.8 291.0 L976.5 313.0 L976.3 335.0 L976.1 357.1 L975.9 379.1 L975.7 401.1 L975.4 423.2 L975.2 445.2 L975.0 467.2 L974.8 489.3 L974.6 511.3 L974.3 533.3 L974.1 555.4 L973.9 577.4 L973.7 599.4 L973.5 621.5" fill="none" stroke="#8a1d55" stroke-width="1"/><path d="M901.8 241.6L906.7 243.7L906.6 256.9L901.6 254.8ZM910.3 245.2L915.3 247.2L915.1 260.4L910.2 258.4ZM918.8 248.7L923.8 250.8L923.6 264.0L918.7 261.9ZM927.4 252.3L932.3 254.3L932.2 267.5L927.2 265.5ZM935.9 255.8L940.8 257.9L940.7 271.1L935.7 269.0ZM944.4 259.4L949.3 261.4L949.2 274.6L944.3 272.6ZM952.9 262.9L957.9 265.0L957.7 278.2L952.8 276.1ZM961.4 266.5L966.4 268.5L966.2 281.7L961.3 279.7ZM970.0 270.0L974.9 272.1L974.8 285.3L969.8 283.2ZM978.5 273.6L983.4 275.6L983.3 288.8L978.3 286.8ZM901.6 263.6L906.5 265.7L906.4 278.9L901.4 276.9ZM910.1 267.2L915.0 269.2L914.9 282.5L909.9 280.4ZM918.6 270.7L923.5 272.8L923.4 286.0L918.5 284.0ZM927.1 274.3L932.1 276.3L931.9 289.6L927.0 287.5ZM935.6 277.8L940.6 279.9L940.4 293.1L935.5 291.1ZM944.2 281.4L949.1 283.4L949.0 296.7L944.0 294.6ZM952.7 284.9L957.6 287.0L957.5 300.2L952.6 298.2ZM961.2 288.5L966.2 290.5L966.0 303.8L961.1 301.7ZM969.7 292.0L974.7 294.1L974.5 307.3L969.6 305.3ZM978.3 295.6L983.2 297.6L983.1 310.9L978.1 308.8ZM901.3 285.7L906.3 287.7L906.1 300.9L901.2 298.9ZM909.8 289.2L914.8 291.3L914.6 304.5L909.7 302.4ZM918.4 292.8L923.3 294.8L923.2 308.0L918.2 306.0ZM926.9 296.3L931.8 298.4L931.7 311.6L926.7 309.5ZM935.4 299.9L940.4 301.9L940.2 315.1L935.3 313.1ZM943.9 303.4L948.9 305.5L948.7 318.7L943.8 316.6ZM952.5 307.0L957.4 309.0L957.3 322.2L952.3 320.2ZM961.0 310.5L965.9 312.6L965.8 325.8L960.9 323.7ZM969.5 314.1L974.5 316.1L974.3 329.3L969.4 327.3ZM978.0 317.6L983.0 319.7L982.8 332.9L977.9 330.8ZM901.1 307.7L906.0 309.8L905.9 323.0L900.9 320.9ZM909.6 311.2L914.6 313.3L914.4 326.5L909.5 324.5ZM918.1 314.8L923.1 316.9L922.9 330.1L918.0 328.0ZM926.7 318.3L931.6 320.4L931.5 333.6L926.5 331.6ZM935.2 321.9L940.1 324.0L940.0 337.2L935.0 335.1ZM943.7 325.4L948.7 327.5L948.5 340.7L943.6 338.7ZM952.2 329.0L957.2 331.1L957.0 344.3L952.1 342.2ZM960.8 332.5L965.7 334.6L965.6 347.8L960.6 345.8ZM969.3 336.1L974.2 338.2L974.1 351.4L969.2 349.3ZM977.8 339.6L982.8 341.7L982.6 354.9L977.7 352.9ZM900.8 329.7L905.8 331.8L905.6 345.0L900.7 342.9ZM909.4 333.3L914.3 335.3L914.2 348.6L909.2 346.5ZM917.9 336.8L922.8 338.9L922.7 352.1L917.8 350.0ZM926.4 340.4L931.4 342.4L931.2 355.7L926.3 353.6ZM935.0 343.9L939.9 346.0L939.8 359.2L934.8 357.1ZM943.5 347.5L948.4 349.5L948.3 362.8L943.3 360.7ZM952.0 351.0L957.0 353.1L956.8 366.3L951.9 364.2ZM960.5 354.6L965.5 356.6L965.3 369.9L960.4 367.8ZM969.1 358.1L974.0 360.2L973.9 373.4L968.9 371.3ZM977.6 361.7L982.5 363.7L982.4 377.0L977.5 374.9ZM900.6 351.8L905.6 353.8L905.4 367.0L900.5 365.0ZM909.1 355.3L914.1 357.4L913.9 370.6L909.0 368.5ZM917.7 358.9L922.6 360.9L922.5 374.1L917.5 372.1ZM926.2 362.4L931.1 364.5L931.0 377.7L926.1 375.6ZM934.7 366.0L939.7 368.0L939.5 381.2L934.6 379.2ZM943.3 369.5L948.2 371.6L948.1 384.8L943.1 382.7ZM951.8 373.1L956.7 375.1L956.6 388.3L951.6 386.3ZM960.3 376.6L965.3 378.7L965.1 391.9L960.2 389.8ZM968.8 380.2L973.8 382.2L973.7 395.4L968.7 393.4ZM977.4 383.7L982.3 385.8L982.2 399.0L977.2 396.9ZM900.4 373.8L905.3 375.9L905.2 389.1L900.2 387.0ZM908.9 377.3L913.8 379.4L913.7 392.6L908.8 390.6ZM917.4 380.9L922.4 383.0L922.2 396.2L917.3 394.1ZM926.0 384.4L930.9 386.5L930.8 399.7L925.8 397.7ZM934.5 388.0L939.4 390.1L939.3 403.3L934.4 401.2ZM943.0 391.5L948.0 393.6L947.8 406.8L942.9 404.8ZM951.6 395.1L956.5 397.2L956.4 410.4L951.4 408.3ZM960.1 398.6L965.0 400.7L964.9 413.9L960.0 411.9ZM968.6 402.2L973.6 404.3L973.4 417.5L968.5 415.4ZM977.2 405.7L982.1 407.8L982.0 421.0L977.0 419.0ZM900.1 395.8L905.1 397.9L904.9 411.1L900.0 409.0ZM908.7 399.4L913.6 401.4L913.5 414.7L908.5 412.6ZM917.2 402.9L922.1 405.0L922.0 418.2L917.1 416.1ZM925.7 406.5L930.7 408.5L930.5 421.8L925.6 419.7ZM934.3 410.0L939.2 412.1L939.1 425.3L934.1 423.2ZM942.8 413.6L947.7 415.6L947.6 428.9L942.7 426.8ZM951.3 417.1L956.3 419.2L956.1 432.4L951.2 430.3ZM959.9 420.7L964.8 422.7L964.7 436.0L959.7 433.9ZM968.4 424.2L973.3 426.3L973.2 439.5L968.3 437.4ZM976.9 427.8L981.9 429.8L981.7 443.1L976.8 441.0ZM899.9 417.9L904.8 419.9L904.7 433.1L899.8 431.1ZM908.4 421.4L913.4 423.5L913.2 436.7L908.3 434.6ZM917.0 425.0L921.9 427.0L921.8 440.2L916.8 438.2ZM925.5 428.5L930.5 430.6L930.3 443.8L925.4 441.7ZM934.0 432.1L939.0 434.1L938.8 447.3L933.9 445.3ZM942.6 435.6L947.5 437.7L947.4 450.9L942.4 448.8ZM951.1 439.2L956.1 441.2L955.9 454.4L951.0 452.4ZM959.6 442.7L964.6 444.8L964.5 458.0L959.5 455.9ZM968.2 446.3L973.1 448.3L973.0 461.5L968.0 459.5ZM976.7 449.8L981.7 451.9L981.5 465.1L976.6 463.0ZM899.7 439.9L904.6 441.9L904.5 455.2L899.5 453.1ZM908.2 443.4L913.1 445.5L913.0 458.7L908.1 456.7ZM916.7 447.0L921.7 449.0L921.5 462.3L916.6 460.2ZM925.3 450.5L930.2 452.6L930.1 465.8L925.1 463.8ZM933.8 454.1L938.8 456.1L938.6 469.4L933.7 467.3ZM942.3 457.6L947.3 459.7L947.2 472.9L942.2 470.9ZM950.9 461.2L955.8 463.2L955.7 476.5L950.7 474.4ZM959.4 464.7L964.4 466.8L964.2 480.0L959.3 478.0ZM968.0 468.3L972.9 470.3L972.8 483.6L967.8 481.5ZM976.5 471.8L981.4 473.9L981.3 487.1L976.4 485.1ZM899.4 461.9L904.4 464.0L904.2 477.2L899.3 475.1ZM908.0 465.5L912.9 467.5L912.8 480.7L907.8 478.7ZM916.5 469.0L921.5 471.1L921.3 484.3L916.4 482.2ZM925.0 472.6L930.0 474.6L929.9 487.8L924.9 485.8ZM933.6 476.1L938.5 478.2L938.4 491.4L933.4 489.3ZM942.1 479.7L947.1 481.7L946.9 494.9L942.0 492.9ZM950.7 483.2L955.6 485.3L955.5 498.5L950.5 496.4ZM959.2 486.8L964.1 488.8L964.0 502.0L959.1 500.0ZM967.7 490.3L972.7 492.4L972.6 505.6L967.6 503.5ZM976.3 493.9L981.2 495.9L981.1 509.1L976.1 507.1ZM899.2 483.9L904.1 486.0L904.0 499.2L899.0 497.2ZM907.7 487.5L912.7 489.6L912.5 502.8L907.6 500.7ZM916.3 491.0L921.2 493.1L921.1 506.3L916.1 504.3ZM924.8 494.6L929.8 496.7L929.6 509.9L924.7 507.8ZM933.3 498.1L938.3 500.2L938.2 513.4L933.2 511.4ZM941.9 501.7L946.8 503.8L946.7 517.0L941.8 514.9ZM950.4 505.2L955.4 507.3L955.2 520.5L950.3 518.5ZM959.0 508.8L963.9 510.9L963.8 524.1L958.8 522.0ZM967.5 512.3L972.5 514.4L972.3 527.6L967.4 525.6ZM976.1 515.9L981.0 518.0L980.9 531.2L975.9 529.1ZM898.9 506.0L903.9 508.0L903.8 521.3L898.8 519.2ZM907.5 509.5L912.4 511.6L912.3 524.8L907.3 522.7ZM916.0 513.1L921.0 515.1L920.8 528.4L915.9 526.3ZM924.6 516.6L929.5 518.7L929.4 531.9L924.4 529.8ZM933.1 520.2L938.1 522.2L937.9 535.5L933.0 533.4ZM941.7 523.7L946.6 525.8L946.5 539.0L941.5 536.9ZM950.2 527.3L955.2 529.3L955.0 542.6L950.1 540.5ZM958.7 530.8L963.7 532.9L963.6 546.1L958.6 544.0ZM967.3 534.4L972.2 536.4L972.1 549.7L967.2 547.6ZM975.8 537.9L980.8 540.0L980.7 553.2L975.7 551.1ZM898.7 528.0L903.7 530.1L903.5 543.3L898.6 541.2ZM907.3 531.6L912.2 533.6L912.1 546.8L907.1 544.8ZM915.8 535.1L920.8 537.2L920.6 550.4L915.7 548.3ZM924.3 538.7L929.3 540.7L929.2 553.9L924.2 551.9ZM932.9 542.2L937.8 544.3L937.7 557.5L932.7 555.4ZM941.4 545.8L946.4 547.8L946.3 561.0L941.3 559.0ZM950.0 549.3L954.9 551.4L954.8 564.6L949.8 562.5ZM958.5 552.9L963.5 554.9L963.3 568.1L958.4 566.1ZM967.1 556.4L972.0 558.5L971.9 571.7L966.9 569.6ZM975.6 560.0L980.6 562.0L980.4 575.2L975.5 573.2ZM898.5 550.0L903.4 552.1L903.3 565.3L898.3 563.3ZM907.0 553.6L912.0 555.7L911.8 568.9L906.9 566.8ZM915.6 557.1L920.5 559.2L920.4 572.4L915.4 570.4ZM924.1 560.7L929.1 562.8L928.9 576.0L924.0 573.9ZM932.7 564.2L937.6 566.3L937.5 579.5L932.5 577.5ZM941.2 567.8L946.2 569.9L946.0 583.1L941.1 581.0ZM949.8 571.3L954.7 573.4L954.6 586.6L949.6 584.6ZM958.3 574.9L963.3 577.0L963.1 590.2L958.2 588.1ZM966.8 578.4L971.8 580.5L971.7 593.7L966.7 591.7ZM975.4 582.0L980.3 584.1L980.2 597.3L975.3 595.2ZM898.2 572.1L903.2 574.1L903.0 587.4L898.1 585.3ZM906.8 575.6L911.7 577.7L911.6 590.9L906.6 588.8ZM915.3 579.2L920.3 581.2L920.1 594.5L915.2 592.4ZM923.9 582.7L928.8 584.8L928.7 598.0L923.7 595.9ZM932.4 586.3L937.4 588.3L937.2 601.6L932.3 599.5ZM941.0 589.8L945.9 591.9L945.8 605.1L940.8 603.0ZM949.5 593.4L954.5 595.4L954.3 608.7L949.4 606.6ZM958.1 596.9L963.0 599.0L962.9 612.2L957.9 610.1ZM966.6 600.5L971.6 602.5L971.4 615.8L966.5 613.7ZM975.2 604.0L980.1 606.1L980.0 619.3L975.0 617.2Z" fill="#f0421e" stroke="#7a1a22" stroke-width="1"/><path d="M906.7 243.7L901.6 254.8M915.3 247.2L910.2 258.4M923.8 250.8L918.7 261.9M932.3 254.3L927.2 265.5M940.8 257.9L935.7 269.0M949.3 261.4L944.3 272.6M957.9 265.0L952.8 276.1M966.4 268.5L961.3 279.7M974.9 272.1L969.8 283.2M983.4 275.6L978.3 286.8M906.5 265.7L901.4 276.9M915.0 269.2L909.9 280.4M923.5 272.8L918.5 284.0M932.1 276.3L927.0 287.5M940.6 279.9L935.5 291.1M949.1 283.4L944.0 294.6M957.6 287.0L952.6 298.2M966.2 290.5L961.1 301.7M974.7 294.1L969.6 305.3M983.2 297.6L978.1 308.8M906.3 287.7L901.2 298.9M914.8 291.3L909.7 302.4M923.3 294.8L918.2 306.0M931.8 298.4L926.7 309.5M940.4 301.9L935.3 313.1M948.9 305.5L943.8 316.6M957.4 309.0L952.3 320.2M965.9 312.6L960.9 323.7M974.5 316.1L969.4 327.3M983.0 319.7L977.9 330.8M906.0 309.8L900.9 320.9M914.6 313.3L909.5 324.5M923.1 316.9L918.0 328.0M931.6 320.4L926.5 331.6M940.1 324.0L935.0 335.1M948.7 327.5L943.6 338.7M957.2 331.1L952.1 342.2M965.7 334.6L960.6 345.8M974.2 338.2L969.2 349.3M982.8 341.7L977.7 352.9M905.8 331.8L900.7 342.9M914.3 335.3L909.2 346.5M922.8 338.9L917.8 350.0M931.4 342.4L926.3 353.6M939.9 346.0L934.8 357.1M948.4 349.5L943.3 360.7M957.0 353.1L951.9 364.2M965.5 356.6L960.4 367.8M974.0 360.2L968.9 371.3M982.5 363.7L977.5 374.9M905.6 353.8L900.5 365.0M914.1 357.4L909.0 368.5M922.6 360.9L917.5 372.1M931.1 364.5L926.1 375.6M939.7 368.0L934.6 379.2M948.2 371.6L943.1 382.7M956.7 375.1L951.6 386.3M965.3 378.7L960.2 389.8M973.8 382.2L968.7 393.4M982.3 385.8L977.2 396.9M905.3 375.9L900.2 387.0M913.8 379.4L908.8 390.6M922.4 383.0L917.3 394.1M930.9 386.5L925.8 397.7M939.4 390.1L934.4 401.2M948.0 393.6L942.9 404.8M956.5 397.2L951.4 408.3M965.0 400.7L960.0 411.9M973.6 404.3L968.5 415.4M982.1 407.8L977.0 419.0M905.1 397.9L900.0 409.0M913.6 401.4L908.5 412.6M922.1 405.0L917.1 416.1M930.7 408.5L925.6 419.7M939.2 412.1L934.1 423.2M947.7 415.6L942.7 426.8M956.3 419.2L951.2 430.3M964.8 422.7L959.7 433.9M973.3 426.3L968.3 437.4M981.9 429.8L976.8 441.0M904.8 419.9L899.8 431.1M913.4 423.5L908.3 434.6M921.9 427.0L916.8 438.2M930.5 430.6L925.4 441.7M939.0 434.1L933.9 445.3M947.5 437.7L942.4 448.8M956.1 441.2L951.0 452.4M964.6 444.8L959.5 455.9M973.1 448.3L968.0 459.5M981.7 451.9L976.6 463.0M904.6 441.9L899.5 453.1M913.1 445.5L908.1 456.7M921.7 449.0L916.6 460.2M930.2 452.6L925.1 463.8M938.8 456.1L933.7 467.3M947.3 459.7L942.2 470.9M955.8 463.2L950.7 474.4M964.4 466.8L959.3 478.0M972.9 470.3L967.8 481.5M981.4 473.9L976.4 485.1M904.4 464.0L899.3 475.1M912.9 467.5L907.8 478.7M921.5 471.1L916.4 482.2M930.0 474.6L924.9 485.8M938.5 478.2L933.4 489.3M947.1 481.7L942.0 492.9M955.6 485.3L950.5 496.4M964.1 488.8L959.1 500.0M972.7 492.4L967.6 503.5M981.2 495.9L976.1 507.1M904.1 486.0L899.0 497.2M912.7 489.6L907.6 500.7M921.2 493.1L916.1 504.3M929.8 496.7L924.7 507.8M938.3 500.2L933.2 511.4M946.8 503.8L941.8 514.9M955.4 507.3L950.3 518.5M963.9 510.9L958.8 522.0M972.5 514.4L967.4 525.6M981.0 518.0L975.9 529.1M903.9 508.0L898.8 519.2M912.4 511.6L907.3 522.7M921.0 515.1L915.9 526.3M929.5 518.7L924.4 529.8M938.1 522.2L933.0 533.4M946.6 525.8L941.5 536.9M955.2 529.3L950.1 540.5M963.7 532.9L958.6 544.0M972.2 536.4L967.2 547.6M980.8 540.0L975.7 551.1M903.7 530.1L898.6 541.2M912.2 533.6L907.1 544.8M920.8 537.2L915.7 548.3M929.3 540.7L924.2 551.9M937.8 544.3L932.7 555.4M946.4 547.8L941.3 559.0M954.9 551.4L949.8 562.5M963.5 554.9L958.4 566.1M972.0 558.5L966.9 569.6M980.6 562.0L975.5 573.2M903.4 552.1L898.3 563.3M912.0 555.7L906.9 566.8M920.5 559.2L915.4 570.4M929.1 562.8L924.0 573.9M937.6 566.3L932.5 577.5M946.2 569.9L941.1 581.0M954.7 573.4L949.6 584.6M963.3 577.0L958.2 588.1M971.8 580.5L966.7 591.7M980.3 584.1L975.3 595.2M903.2 574.1L898.1 585.3M911.7 577.7L906.6 588.8M920.3 581.2L915.2 592.4M928.8 584.8L923.7 595.9M937.4 588.3L932.3 599.5M945.9 591.9L940.8 603.0M954.5 595.4L949.4 606.6M963.0 599.0L957.9 610.1M971.6 602.5L966.5 613.7M980.1 606.1L975.0 617.2" fill="none" stroke="#6a1418" stroke-width="0.8"/><path d="M900.3 237.0 L908.7 209.4 L915.2 182.4 L921.4 155.0 L927.3 127.3 L932.9 100.3 L938.6 71.0 L944.4 40.5 L950.6 9.1M900.3 237.0 L985.5 272.5M985.5 272.5 L1014.2 254.9 L1043.2 237.4 L1073.2 219.6 L1103.0 201.8 L1133.2 184.2 L1163.2 166.6 L1192.6 148.6 L1222.4 130.4 L1263.2 110.7 L1304.0 91.0 L1344.8 71.3 L1385.6 51.6M1222.4 130.4 L950.6 9.1M900.3 237.0 L896.5 589.5 L982.0 625.0 L1216.3 704.0 L1380.7 619.0M985.5 272.5 L982.0 625.0" fill="none" stroke="#000" stroke-width="1"/><path d="M1222.4 130.4 L1216.3 704.0" fill="none" stroke="#651a3c" stroke-width="1"/><path d="M941.0 431.0L903.7 244.4M941.0 431.0L912.4 248.0M941.0 431.0L921.1 251.7M941.0 431.0L929.8 255.3M941.0 431.0L938.5 259.0M941.0 431.0L947.2 262.6M941.0 431.0L955.9 266.3M941.0 431.0L964.6 269.9M941.0 431.0L973.2 273.6M941.0 431.0L981.9 277.3M941.0 431.0L903.5 267.0M941.0 431.0L912.2 270.7M941.0 431.0L920.9 274.4M941.0 431.0L929.5 278.0M941.0 431.0L938.2 281.7M941.0 431.0L946.9 285.3M941.0 431.0L955.6 289.0M941.0 431.0L964.3 292.6M941.0 431.0L973.0 296.3M941.0 431.0L981.7 300.0M941.0 431.0L903.2 289.7M941.0 431.0L911.9 293.4M941.0 431.0L920.6 297.1M941.0 431.0L929.3 300.7M941.0 431.0L938.0 304.4M941.0 431.0L946.7 308.0M941.0 431.0L955.4 311.7M941.0 431.0L964.1 315.3M941.0 431.0L972.8 319.0M941.0 431.0L981.5 322.6M941.0 431.0L903.0 312.4M941.0 431.0L911.7 316.1M941.0 431.0L920.4 319.7M941.0 431.0L929.1 323.4M941.0 431.0L937.8 327.1M941.0 431.0L946.5 330.7M941.0 431.0L955.2 334.4M941.0 431.0L963.9 338.0M941.0 431.0L972.6 341.7M941.0 431.0L981.3 345.3M941.0 431.0L902.7 335.1M941.0 431.0L911.4 338.8M941.0 431.0L920.1 342.4M941.0 431.0L928.8 346.1M941.0 431.0L937.5 349.7M941.0 431.0L946.2 353.4M941.0 431.0L954.9 357.1M941.0 431.0L963.6 360.7M941.0 431.0L972.3 364.4M941.0 431.0L981.0 368.0M941.0 431.0L902.5 357.8M941.0 431.0L911.2 361.5M941.0 431.0L919.9 365.1M941.0 431.0L928.6 368.8M941.0 431.0L937.3 372.4M941.0 431.0L946.0 376.1M941.0 431.0L954.7 379.8M941.0 431.0L963.4 383.4M941.0 431.0L972.1 387.1M941.0 431.0L980.8 390.7M941.0 431.0L902.3 380.5M941.0 431.0L911.0 384.2M941.0 431.0L919.7 387.8M941.0 431.0L928.4 391.5M941.0 431.0L937.1 395.1M941.0 431.0L945.8 398.8M941.0 431.0L954.5 402.4M941.0 431.0L963.2 406.1M941.0 431.0L971.9 409.8M941.0 431.0L980.6 413.4M941.0 431.0L902.0 403.2M941.0 431.0L910.7 406.9M941.0 431.0L919.4 410.5M941.0 431.0L928.1 414.2M941.0 431.0L936.8 417.8M941.0 431.0L945.5 421.5M941.0 431.0L954.3 425.1M941.0 431.0L963.0 428.8M941.0 431.0L971.7 432.5M941.0 431.0L980.4 436.1M941.0 431.0L901.8 425.9M941.0 431.0L910.5 429.5M941.0 431.0L919.2 433.2M941.0 431.0L927.9 436.9M941.0 431.0L936.6 440.5M941.0 431.0L945.3 444.2M941.0 431.0L954.0 447.8M941.0 431.0L962.7 451.5M941.0 431.0L971.4 455.1M941.0 431.0L980.1 458.8M941.0 431.0L901.5 448.6M941.0 431.0L910.2 452.2M941.0 431.0L919.0 455.9M941.0 431.0L927.7 459.6M941.0 431.0L936.4 463.2M941.0 431.0L945.1 466.9M941.0 431.0L953.8 470.5M941.0 431.0L962.5 474.2M941.0 431.0L971.2 477.8M941.0 431.0L979.9 481.5M941.0 431.0L901.3 471.3M941.0 431.0L910.0 474.9M941.0 431.0L918.7 478.6M941.0 431.0L927.4 482.2M941.0 431.0L936.1 485.9M941.0 431.0L944.9 489.6M941.0 431.0L953.6 493.2M941.0 431.0L962.3 496.9M941.0 431.0L971.0 500.5M941.0 431.0L979.7 504.2M941.0 431.0L901.1 494.0M941.0 431.0L909.8 497.6M941.0 431.0L918.5 501.3M941.0 431.0L927.2 504.9M941.0 431.0L935.9 508.6M941.0 431.0L944.6 512.3M941.0 431.0L953.3 515.9M941.0 431.0L962.0 519.6M941.0 431.0L970.8 523.2M941.0 431.0L979.5 526.9M941.0 431.0L900.8 516.7M941.0 431.0L909.5 520.3M941.0 431.0L918.2 524.0M941.0 431.0L927.0 527.6M941.0 431.0L935.7 531.3M941.0 431.0L944.4 534.9M941.0 431.0L953.1 538.6M941.0 431.0L961.8 542.3M941.0 431.0L970.5 545.9M941.0 431.0L979.2 549.6M941.0 431.0L900.6 539.4M941.0 431.0L909.3 543.0M941.0 431.0L918.0 546.7M941.0 431.0L926.7 550.3M941.0 431.0L935.4 554.0M941.0 431.0L944.2 557.6M941.0 431.0L952.9 561.3M941.0 431.0L961.6 564.9M941.0 431.0L970.3 568.6M941.0 431.0L979.0 572.3M941.0 431.0L900.3 562.0M941.0 431.0L909.1 565.7M941.0 431.0L917.8 569.4M941.0 431.0L926.5 573.0M941.0 431.0L935.2 576.7M941.0 431.0L943.9 580.3M941.0 431.0L952.6 584.0M941.0 431.0L961.4 587.6M941.0 431.0L970.1 591.3M941.0 431.0L978.8 595.0M941.0 431.0L900.1 584.7M941.0 431.0L908.8 588.4M941.0 431.0L917.5 592.1M941.0 431.0L926.3 595.7M941.0 431.0L935.0 599.4M941.0 431.0L943.7 603.0M941.0 431.0L952.4 606.7M941.0 431.0L961.1 610.3M941.0 431.0L969.9 614.0M941.0 431.0L978.6 617.6" fill="none" stroke="#00ff00" stroke-width="2.6" stroke-linecap="butt"/><path d="M901.8 241.6L906.7 243.7L906.6 252.9L901.7 250.9ZM910.3 245.2L915.3 247.2L915.2 256.5L910.2 254.4ZM918.8 248.7L923.8 250.8L923.7 260.0L918.7 258.0ZM927.4 252.3L932.3 254.3L932.2 263.6L927.3 261.5ZM935.9 255.8L940.8 257.9L940.7 267.1L935.8 265.1ZM944.4 259.4L949.3 261.4L949.2 270.7L944.3 268.6ZM952.9 262.9L957.9 265.0L957.8 274.2L952.8 272.2ZM961.4 266.5L966.4 268.5L966.3 277.8L961.3 275.7ZM970.0 270.0L974.9 272.1L974.8 281.3L969.9 279.3ZM978.5 273.6L983.4 275.6L983.3 284.9L978.4 282.8ZM902.5 266.7L906.8 269.6L904.6 277.5ZM911.1 270.3L915.3 273.1L913.1 281.1ZM919.6 273.8L923.8 276.7L921.6 284.6ZM928.1 277.4L932.4 280.2L930.1 288.2ZM936.6 280.9L940.9 283.8L938.7 291.7ZM945.2 284.5L949.4 287.3L947.2 295.3ZM953.7 288.0L957.9 290.9L955.7 298.8ZM962.2 291.6L966.5 294.4L964.2 302.4ZM970.7 295.1L975.0 298.0L972.8 305.9ZM979.2 298.7L983.5 301.5L981.3 309.5ZM902.3 288.7L906.6 291.6L904.3 299.5ZM910.8 292.3L915.1 295.2L912.9 303.1ZM919.4 295.8L923.6 298.7L921.4 306.6ZM927.9 299.4L932.1 302.3L929.9 310.2ZM936.4 302.9L940.7 305.8L938.4 313.7ZM944.9 306.5L949.2 309.4L947.0 317.3ZM953.5 310.0L957.7 312.9L955.5 320.8ZM962.0 313.6L966.2 316.5L964.0 324.4ZM970.5 317.1L974.8 320.0L972.5 327.9ZM979.0 320.7L983.3 323.6L981.1 331.5ZM902.1 310.8L906.3 313.6L904.1 321.6ZM910.6 314.3L914.9 317.2L912.6 325.1ZM919.1 317.9L923.4 320.7L921.2 328.7ZM927.7 321.4L931.9 324.3L929.7 332.2ZM936.2 325.0L940.4 327.8L938.2 335.8ZM944.7 328.5L949.0 331.4L946.7 339.3ZM953.2 332.1L957.5 334.9L955.3 342.9ZM961.8 335.6L966.0 338.5L963.8 346.4ZM970.3 339.2L974.5 342.0L972.3 350.0ZM978.8 342.7L983.1 345.6L980.8 353.5ZM901.8 332.8L906.1 335.7L903.9 343.6ZM910.4 336.3L914.6 339.2L912.4 347.2ZM918.9 339.9L923.1 342.8L920.9 350.7ZM927.4 343.4L931.7 346.3L929.4 354.3ZM935.9 347.0L940.2 349.9L938.0 357.8ZM944.5 350.5L948.7 353.4L946.5 361.4ZM953.0 354.1L957.3 357.0L955.0 364.9ZM961.5 357.6L965.8 360.5L963.6 368.5ZM970.1 361.2L974.3 364.1L972.1 372.0ZM978.6 364.7L982.8 367.6L980.6 375.6ZM901.6 354.8L905.9 357.7L903.6 365.6ZM910.1 358.4L914.4 361.3L912.2 369.2ZM918.7 361.9L922.9 364.8L920.7 372.7ZM927.2 365.5L931.4 368.4L929.2 376.3ZM935.7 369.0L940.0 371.9L937.7 379.8ZM944.2 372.6L948.5 375.5L946.3 383.4ZM952.8 376.1L957.0 379.0L954.8 386.9ZM961.3 379.7L965.6 382.6L963.3 390.5ZM969.8 383.2L974.1 386.1L971.9 394.0ZM978.4 386.8L982.6 389.7L980.4 397.6ZM901.4 376.9L905.6 379.7L903.4 387.7ZM909.9 380.4L914.1 383.3L911.9 391.2ZM918.4 384.0L922.7 386.8L920.5 394.8ZM927.0 387.5L931.2 390.4L929.0 398.3ZM935.5 391.1L939.7 393.9L937.5 401.9ZM944.0 394.6L948.3 397.5L946.1 405.4ZM952.6 398.2L956.8 401.0L954.6 409.0ZM961.1 401.7L965.3 404.6L963.1 412.5ZM969.6 405.3L973.9 408.1L971.7 416.1ZM978.1 408.8L982.4 411.7L980.2 419.6ZM901.1 398.9L905.4 401.8L903.2 409.7ZM909.7 402.4L913.9 405.3L911.7 413.2ZM918.2 406.0L922.4 408.9L920.2 416.8ZM926.7 409.5L931.0 412.4L928.8 420.3ZM935.3 413.1L939.5 416.0L937.3 423.9ZM943.8 416.6L948.1 419.5L945.8 427.4ZM952.3 420.2L956.6 423.1L954.4 431.0ZM960.9 423.7L965.1 426.6L962.9 434.5ZM969.4 427.3L973.7 430.2L971.4 438.1ZM977.9 430.8L982.2 433.7L980.0 441.6ZM900.9 420.9L905.1 423.8L902.9 431.7ZM909.4 424.5L913.7 427.4L911.5 435.3ZM918.0 428.0L922.2 430.9L920.0 438.8ZM926.5 431.6L930.8 434.5L928.5 442.4ZM935.0 435.1L939.3 438.0L937.1 445.9ZM943.6 438.7L947.8 441.6L945.6 449.5ZM952.1 442.2L956.4 445.1L954.1 453.0ZM960.6 445.8L964.9 448.7L962.7 456.6ZM969.2 449.3L973.4 452.2L971.2 460.1ZM977.7 452.9L982.0 455.8L979.7 463.7ZM900.7 443.0L904.9 445.8L902.7 453.8ZM909.2 446.5L913.4 449.4L911.2 457.3ZM917.7 450.1L922.0 452.9L919.8 460.9ZM926.3 453.6L930.5 456.5L928.3 464.4ZM934.8 457.2L939.1 460.0L936.8 468.0ZM943.3 460.7L947.6 463.6L945.4 471.5ZM951.9 464.3L956.1 467.1L953.9 475.1ZM960.4 467.8L964.7 470.7L962.4 478.6ZM969.0 471.4L973.2 474.2L971.0 482.2ZM977.5 474.9L981.7 477.8L979.5 485.7ZM900.4 465.0L904.7 467.9L902.4 475.8ZM909.0 468.5L913.2 471.4L911.0 479.3ZM917.5 472.1L921.8 475.0L919.5 482.9ZM926.0 475.6L930.3 478.5L928.1 486.4ZM934.6 479.2L938.8 482.1L936.6 490.0ZM943.1 482.7L947.4 485.6L945.1 493.5ZM951.7 486.3L955.9 489.2L953.7 497.1ZM960.2 489.8L964.4 492.7L962.2 500.6ZM968.7 493.4L973.0 496.3L970.8 504.2ZM977.3 496.9L981.5 499.8L979.3 507.7ZM900.2 487.0L904.4 489.9L902.2 497.8ZM908.7 490.6L913.0 493.4L910.7 501.4ZM917.3 494.1L921.5 497.0L919.3 504.9ZM925.8 497.7L930.1 500.5L927.8 508.5ZM934.3 501.2L938.6 504.1L936.4 512.0ZM942.9 504.8L947.1 507.6L944.9 515.6ZM951.4 508.3L955.7 511.2L953.5 519.1ZM960.0 511.9L964.2 514.7L962.0 522.7ZM968.5 515.4L972.8 518.3L970.5 526.2ZM977.0 519.0L981.3 521.8L979.1 529.8ZM899.9 509.0L904.2 511.9L902.0 519.9ZM908.5 512.6L912.7 515.5L910.5 523.4ZM917.0 516.1L921.3 519.0L919.1 527.0ZM925.6 519.7L929.8 522.6L927.6 530.5ZM934.1 523.2L938.4 526.1L936.1 534.1ZM942.7 526.8L946.9 529.7L944.7 537.6ZM951.2 530.3L955.5 533.2L953.2 541.2ZM959.7 533.9L964.0 536.8L961.8 544.7ZM968.3 537.4L972.5 540.3L970.3 548.3ZM976.8 541.0L981.1 543.9L978.9 551.8ZM899.7 531.1L904.0 534.0L901.7 541.9ZM908.2 534.6L912.5 537.5L910.3 545.4ZM916.8 538.2L921.1 541.1L918.8 549.0ZM925.3 541.7L929.6 544.6L927.4 552.5ZM933.9 545.3L938.1 548.2L935.9 556.1ZM942.4 548.8L946.7 551.7L944.5 559.6ZM951.0 552.4L955.2 555.3L953.0 563.2ZM959.5 555.9L963.8 558.8L961.6 566.7ZM968.1 559.5L972.3 562.4L970.1 570.3ZM976.6 563.0L980.9 565.9L978.6 573.8ZM899.5 553.1L903.7 556.0L901.5 563.9ZM908.0 556.7L912.3 559.5L910.0 567.5ZM916.6 560.2L920.8 563.1L918.6 571.0ZM925.1 563.8L929.4 566.6L927.1 574.6ZM933.7 567.3L937.9 570.2L935.7 578.1ZM942.2 570.9L946.5 573.7L944.2 581.7ZM950.7 574.4L955.0 577.3L952.8 585.2ZM959.3 578.0L963.6 580.8L961.3 588.8ZM967.8 581.5L972.1 584.4L969.9 592.3ZM976.4 585.1L980.7 587.9L978.4 595.9ZM898.2 577.4L903.1 579.4L903.0 587.4L898.1 585.3ZM906.7 580.9L911.7 583.0L911.6 590.9L906.6 588.8ZM915.3 584.5L920.2 586.5L920.1 594.5L915.2 592.4ZM923.8 588.0L928.8 590.1L928.7 598.0L923.7 595.9ZM932.4 591.6L937.3 593.6L937.2 601.6L932.3 599.5ZM940.9 595.1L945.9 597.2L945.8 605.1L940.8 603.0ZM949.5 598.7L954.4 600.7L954.3 608.7L949.4 606.6ZM958.0 602.2L963.0 604.3L962.9 612.2L957.9 610.1ZM966.6 605.8L971.5 607.8L971.4 615.8L966.5 613.7ZM975.1 609.3L980.1 611.4L980.0 619.3L975.0 617.2Z" fill="#f0421e"/><path d="M906.7 243.7L901.7 250.9M901.7 250.9L901.8 241.6L906.7 243.7M915.3 247.2L910.2 254.4M910.2 254.4L910.3 245.2L915.3 247.2M923.8 250.8L918.7 258.0M918.7 258.0L918.8 248.7L923.8 250.8M932.3 254.3L927.3 261.5M927.3 261.5L927.4 252.3L932.3 254.3M940.8 257.9L935.8 265.1M935.8 265.1L935.9 255.8L940.8 257.9M949.3 261.4L944.3 268.6M944.3 268.6L944.4 259.4L949.3 261.4M957.9 265.0L952.8 272.2M952.8 272.2L952.9 262.9L957.9 265.0M966.4 268.5L961.3 275.7M961.3 275.7L961.4 266.5L966.4 268.5M974.9 272.1L969.9 279.3M969.9 279.3L970.0 270.0L974.9 272.1M983.4 275.6L978.4 282.8M978.4 282.8L978.5 273.6L983.4 275.6M906.8 268.5L902.5 275.5M915.3 272.0L911.0 279.1M923.9 275.6L919.5 282.6M932.4 279.1L928.0 286.2M940.9 282.7L936.5 289.7M949.4 286.2L945.1 293.3M957.9 289.8L953.6 296.8M966.5 293.3L962.1 300.4M975.0 296.9L970.6 303.9M983.5 300.4L979.2 307.5M906.6 290.5L902.2 297.5M915.1 294.1L910.7 301.1M923.6 297.6L919.3 304.6M932.1 301.2L927.8 308.2M940.7 304.7L936.3 311.7M949.2 308.3L944.8 315.3M957.7 311.8L953.4 318.8M966.2 315.4L961.9 322.4M974.8 318.9L970.4 325.9M983.3 322.5L978.9 329.5M906.3 312.5L902.0 319.6M914.9 316.1L910.5 323.1M923.4 319.6L919.0 326.7M931.9 323.2L927.6 330.2M940.4 326.7L936.1 333.8M949.0 330.3L944.6 337.3M957.5 333.8L953.1 340.9M966.0 337.4L961.7 344.4M974.5 340.9L970.2 348.0M983.1 344.5L978.7 351.5M906.1 334.6L901.7 341.6M914.6 338.1L910.3 345.2M923.2 341.7L918.8 348.7M931.7 345.2L927.3 352.3M940.2 348.8L935.9 355.8M948.7 352.3L944.4 359.4M957.3 355.9L952.9 362.9M965.8 359.4L961.4 366.5M974.3 363.0L970.0 370.0M982.9 366.5L978.5 373.6M905.9 356.6L901.5 363.6M914.4 360.2L910.0 367.2M922.9 363.7L918.6 370.7M931.5 367.3L927.1 374.3M940.0 370.8L935.6 377.8M948.5 374.4L944.2 381.4M957.0 377.9L952.7 384.9M965.6 381.5L961.2 388.5M974.1 385.0L969.8 392.0M982.6 388.6L978.3 395.6M905.6 378.6L901.3 385.7M914.2 382.2L909.8 389.2M922.7 385.7L918.3 392.8M931.2 389.3L926.9 396.3M939.8 392.8L935.4 399.9M948.3 396.4L943.9 403.4M956.8 399.9L952.5 407.0M965.4 403.5L961.0 410.5M973.9 407.0L969.5 414.1M982.4 410.6L978.1 417.6M905.4 400.7L901.0 407.7M913.9 404.2L909.6 411.3M922.5 407.8L918.1 414.8M931.0 411.3L926.6 418.4M939.5 414.9L935.2 421.9M948.1 418.4L943.7 425.5M956.6 422.0L952.2 429.0M965.1 425.5L960.8 432.6M973.7 429.1L969.3 436.1M982.2 432.6L977.8 439.7M905.2 422.7L900.8 429.7M913.7 426.2L909.3 433.3M922.2 429.8L917.9 436.8M930.8 433.3L926.4 440.4M939.3 436.9L934.9 443.9M947.8 440.4L943.5 447.5M956.4 444.0L952.0 451.0M964.9 447.5L960.5 454.6M973.4 451.1L969.1 458.1M982.0 454.6L977.6 461.7M904.9 444.7L900.6 451.8M913.5 448.3L909.1 455.3M922.0 451.8L917.6 458.9M930.5 455.4L926.2 462.4M939.1 458.9L934.7 466.0M947.6 462.5L943.2 469.5M956.1 466.0L951.8 473.1M964.7 469.6L960.3 476.6M973.2 473.1L968.9 480.2M981.8 476.7L977.4 483.7M904.7 466.8L900.3 473.8M913.2 470.3L908.9 477.3M921.8 473.9L917.4 480.9M930.3 477.4L925.9 484.4M938.8 481.0L934.5 488.0M947.4 484.5L943.0 491.5M955.9 488.1L951.6 495.1M964.5 491.6L960.1 498.6M973.0 495.2L968.6 502.2M981.5 498.7L977.2 505.7M904.4 488.8L900.1 495.8M913.0 492.3L908.6 499.4M921.5 495.9L917.2 502.9M930.1 499.4L925.7 506.5M938.6 503.0L934.3 510.0M947.2 506.5L942.8 513.6M955.7 510.1L951.3 517.1M964.2 513.6L959.9 520.7M972.8 517.2L968.4 524.2M981.3 520.7L977.0 527.8M904.2 510.8L899.8 517.9M912.8 514.4L908.4 521.4M921.3 517.9L916.9 525.0M929.8 521.5L925.5 528.5M938.4 525.0L934.0 532.1M946.9 528.6L942.6 535.6M955.5 532.1L951.1 539.2M964.0 535.7L959.7 542.7M972.6 539.2L968.2 546.3M981.1 542.8L976.7 549.8M904.0 532.9L899.6 539.9M912.5 536.4L908.2 543.4M921.1 540.0L916.7 547.0M929.6 543.5L925.2 550.5M938.2 547.1L933.8 554.1M946.7 550.6L942.3 557.6M955.2 554.2L950.9 561.2M963.8 557.7L959.4 564.7M972.3 561.3L968.0 568.3M980.9 564.8L976.5 571.8M903.7 554.9L899.4 561.9M912.3 558.4L907.9 565.5M920.8 562.0L916.5 569.0M929.4 565.5L925.0 572.6M937.9 569.1L933.6 576.1M946.5 572.6L942.1 579.7M955.0 576.2L950.7 583.2M963.6 579.7L959.2 586.8M972.1 583.3L967.8 590.3M980.7 586.8L976.3 593.9M903.1 579.4L898.1 585.3M898.1 585.3L898.2 577.4L903.1 579.4M911.7 583.0L906.6 588.8M906.6 588.8L906.7 580.9L911.7 583.0M920.2 586.5L915.2 592.4M915.2 592.4L915.3 584.5L920.2 586.5M928.8 590.1L923.7 595.9M923.7 595.9L923.8 588.0L928.8 590.1M937.3 593.6L932.3 599.5M932.3 599.5L932.4 591.6L937.3 593.6M945.9 597.2L940.8 603.0M940.8 603.0L940.9 595.1L945.9 597.2M954.4 600.7L949.4 606.6M949.4 606.6L949.5 598.7L954.4 600.7M963.0 604.3L957.9 610.1M957.9 610.1L958.0 602.2L963.0 604.3M971.5 607.8L966.5 613.7M966.5 613.7L966.6 605.8L971.5 607.8M980.1 611.4L975.0 617.2M975.0 617.2L975.1 609.3L980.1 611.4" fill="none" stroke="#5a1216" stroke-width="0.8"/><path d="M576 608 L941 431" stroke="#ff0000" stroke-width="2.6" fill="none"/></g><g fill="none" stroke-width="1"><path d="M596.5 774.5 L597 717" stroke="#00ff00"/><path d="M595.500 728.500 L594 737 L600.500 737 L598.500 728.500 Z M594 739.500 H600.500 M594 737 V739.500 M600.500 737 V739.500" stroke="#00ff00"/><path d="M596.5 774.5 L639.5 753.3" stroke="#ff0000"/><path d="M621 760 L626 757 L639.5 753.3 L628 761 L623.5 764.5 Z M624 758 L626 763" stroke="#ff0000"/><path d="M596.5 774.5 L645 794.3" stroke="#0000ff"/><path d="M624 788.5 L627 783.5 L645 794.3 L630 792.5 L625 791.5 Z M629 785 L627.5 791.5" stroke="#0000ff"/></g></svg>
<span class="t " style="left:595.9px;top:694.30px;font-size:13px;line-height:13px;color:#fff;transform:scaleX(1.0759);">Y</span>
<span class="t " style="left:646.9px;top:737.30px;font-size:13px;line-height:13px;color:#fff;transform:scaleX(1.0759);">X</span>
<span class="t " style="left:652.4px;top:786.30px;font-size:13px;line-height:13px;color:#fff;transform:scaleX(1.1105);">Z</span>
<svg class="a" style="left:0;top:808px" width="1365" height="36" viewBox="0 808 1365 36"><rect x="548.5" y="815" width="2" height="2" fill="#1a1a1a"/><rect x="548.5" y="821" width="2" height="2" fill="#1a1a1a"/><rect x="548.5" y="827" width="2" height="2" fill="#1a1a1a"/><rect x="548.5" y="833" width="2" height="2" fill="#1a1a1a"/><g transform="translate(558 814)"><clipPath id="cpm"><rect x="0" y="0" width="20" height="20" rx="4.5"/></clipPath><g clip-path="url(#cpm)"><rect x="0" y="0" width="20" height="20" fill="#6f9bd0"/><rect x="0" y="0" width="20" height="9" fill="#8fb4e2" opacity="0.6"/><rect x="7.1" y="7.1" width="5.8" height="5.8" rx="0.8" fill="#f6f8fc" transform="rotate(-18 10 10)"/><rect x="2.8" y="-0.5" width="5.4" height="5.4" rx="0.8" fill="#f6f8fc" transform="rotate(-18 5.5 2.2)"/><rect x="15.9" y="3.4" width="5.2" height="5.2" rx="0.8" fill="#f6f8fc" transform="rotate(-18 18.5 6)"/><rect x="-1.7" y="11.1" width="5.4" height="5.4" rx="0.8" fill="#f6f8fc" transform="rotate(-18 1 13.8)"/><rect x="11.6" y="15.1" width="5.4" height="5.4" rx="0.8" fill="#f6f8fc" transform="rotate(-18 14.3 17.8)"/><rect x="12.3" y="-3.7" width="4.4" height="4.4" rx="0.8" fill="#f6f8fc" transform="rotate(-18 14.5 -1.5)"/><rect x="3.3" y="19" width="4.4" height="4.4" rx="0.8" fill="#f6f8fc" transform="rotate(-18 5.5 21.2)"/></g></g><path d="M584 823h5l-2.5 3z" fill="#000"/><rect x="599.5" y="815" width="2" height="2" fill="#1a1a1a"/><rect x="599.5" y="821" width="2" height="2" fill="#1a1a1a"/><rect x="599.5" y="827" width="2" height="2" fill="#1a1a1a"/><rect x="599.5" y="833" width="2" height="2" fill="#1a1a1a"/><g transform="translate(608 814)"><g transform="scale(1.050)"><path d="M0.5 2.5q0 -2 2 -2h4q1.2 0 1.8 1.5h6.2q1.5 0 1.5 1.5v8q0 1.5 -1.5 1.5h-12.5q-1.5 0 -1.5 -1.5z" fill="url(#gFold)" stroke="#d9a455" stroke-width="0.9"/><path d="M1.5 3.2h13.5" stroke="#fff6d8" stroke-width="0.8" opacity="0.8"/></g><g transform="translate(1 8.5)"><g transform="scale(1.25)"><path d="M3.8 2.8l4.500 -2.200l4.500 2.200l-4.500 2.200z" fill="#3cf03c" stroke="#12c412" stroke-width="0.5"/><path d="M3.8 2.8l4.500 2.200v2.800l-4.500 -2.200z" fill="#12c412"/><path d="M8.3 5l4.500 -2.200v2.800l-4.500 2.200z" fill="#0a8a0a"/><path d="M0 6.3l4.500 -2.200l4.500 2.200l-4.500 2.200z" fill="#5050fa" stroke="#1818e4" stroke-width="0.5"/><path d="M0 6.3l4.500 2.200v2.800l-4.500 -2.200z" fill="#1818e4"/><path d="M4.5 8.5l4.500 -2.200v2.800l-4.500 2.200z" fill="#0a0a9c"/><path d="M7.5 6.5l4.500 -2.200l4.500 2.200l-4.500 2.200z" fill="#fab848" stroke="#ea8c0a" stroke-width="0.5"/><path d="M7.5 6.5l4.500 2.200v2.800l-4.500 -2.200z" fill="#ea8c0a"/><path d="M12 8.7l4.500 -2.200v2.800l-4.500 2.200z" fill="#a86000"/></g></g></g><g transform="translate(636 814)"><g transform="scale(1.050)"><path d="M0.5 2.5q0 -2 2 -2h4q1.2 0 1.8 1.5h6.2q1.5 0 1.5 1.5v8q0 1.5 -1.5 1.5h-12.5q-1.5 0 -1.5 -1.5z" fill="url(#gFold)" stroke="#d9a455" stroke-width="0.9"/><path d="M1.5 3.2h13.5" stroke="#fff6d8" stroke-width="0.8" opacity="0.8"/></g><g transform="translate(4 8)"><g transform="scale(1.150)"><path d="M0 4.5l7 -3.5l7 3.5l-7 3.5z" fill="#4a55f2" stroke="#0a0f9a" stroke-width="0.6"/><path d="M0 4.5l7 3.5v4l-7 -3.5z" fill="#1c22d8" stroke="#0a0f9a" stroke-width="0.6"/><path d="M7 8l7 -3.5v4l-7 3.5z" fill="#0e149c" stroke="#0a0f9a" stroke-width="0.6"/></g></g></g><g transform="translate(664 814)"><g transform="scale(1.050)"><path d="M0.5 2.5q0 -2 2 -2h4q1.2 0 1.8 1.5h6.2q1.5 0 1.5 1.5v8q0 1.5 -1.5 1.5h-12.5q-1.5 0 -1.5 -1.5z" fill="url(#gFold)" stroke="#d9a455" stroke-width="0.9"/><path d="M1.5 3.2h13.5" stroke="#fff6d8" stroke-width="0.8" opacity="0.8"/></g><path d="M7.500 21v-12h1.500M7.500 21h12" stroke="#111" stroke-width="1.100" fill="none"/><path d="M9 13.500q1 -5.500 6 -5.500q3.500 0 4 3" stroke="#e01010" stroke-width="1.700" fill="none"/><path d="M12 12.500h5l-1.600 3.500l1.600 4.500h-5l1.600 -4.500z" fill="#aaa" stroke="#555" stroke-width="0.700"/></g><g transform="translate(692 814)"><g transform="scale(1.050)"><path d="M0.5 2.5q0 -2 2 -2h4q1.2 0 1.8 1.5h6.2q1.5 0 1.5 1.5v8q0 1.5 -1.5 1.5h-12.5q-1.5 0 -1.5 -1.5z" fill="url(#gFold)" stroke="#d9a455" stroke-width="0.9"/><path d="M1.5 3.2h13.5" stroke="#fff6d8" stroke-width="0.8" opacity="0.8"/></g><g transform="translate(6 8.5)"><g transform="scale(1.100)"><path d="M0 4.5l7 -3.5l7 3.5l-7 3.5z" fill="#9a9a9a" stroke="#222" stroke-width="0.7"/><path d="M0 4.5l7 3.5v3.6l-7 -3.5z" fill="#6e6e6e" stroke="#222" stroke-width="0.7"/><path d="M7 8l7 -3.5v3.6l-7 3.5z" fill="#505050" stroke="#222" stroke-width="0.7"/></g></g><text x="3.500" y="10" font-family="Liberation Sans" font-weight="bold" font-size="9" fill="#000">t</text><path d="M2.500 12.500l1.600 2.600h-3.200zM2.500 19.500l1.600 -2.600h-3.200z" fill="#d01010"/></g><g transform="translate(720 814)"><g transform="scale(1.050)"><path d="M0.5 2.5q0 -2 2 -2h4q1.2 0 1.8 1.5h6.2q1.5 0 1.5 1.5v8q0 1.5 -1.5 1.5h-12.5q-1.5 0 -1.5 -1.5z" fill="url(#gFold)" stroke="#d9a455" stroke-width="0.9"/><path d="M1.5 3.2h13.5" stroke="#fff6d8" stroke-width="0.8" opacity="0.8"/></g><path d="M10.500 3v12" stroke="#e01010" stroke-width="2.600"/><path d="M6.500 13h8l-4 5.500z" fill="#e01010"/><circle cx="10.500" cy="19.500" r="2" fill="#111"/><rect x="15" y="15.500" width="7" height="6" fill="#3cb030"/><path d="M15.800 17.500h5.500M15.800 19.500h5.500" stroke="#c8f0c0" stroke-width="0.800"/></g><g transform="translate(748 814)"><g transform="scale(1.050)"><path d="M0.5 2.5q0 -2 2 -2h4q1.2 0 1.8 1.5h6.2q1.5 0 1.5 1.5v8q0 1.5 -1.5 1.5h-12.5q-1.5 0 -1.5 -1.5z" fill="url(#gFold)" stroke="#d9a455" stroke-width="0.9"/><path d="M1.5 3.2h13.5" stroke="#fff6d8" stroke-width="0.8" opacity="0.8"/></g><path d="M11 6v9l7 4M11 15l-7 4" stroke="#5a5cc0" stroke-width="2.200" fill="none" stroke-linecap="round"/><rect x="15" y="15.500" width="7" height="6" fill="#3cb030"/><path d="M15.800 17.500h5.500M15.800 19.500h5.500" stroke="#c8f0c0" stroke-width="0.800"/></g><path d="M775 823h5l-2.5 3z" fill="#000"/><rect x="787" y="815" width="1" height="20" fill="#8a8a8a"/><g transform="translate(798 816)"><path d="M3 0.500l6 5.500l6 -5.500l3 3l-5.500 6l5.500 6l-3 3l-6 -5.500l-6 5.500l-3 -3l5.500 -6l-5.500 -6z" fill="#e82020" stroke="#b00a0a" stroke-width="0.800"/></g><g transform="translate(823 814)"><path d="M1 7.500q0 -5 5 -5h3q5 0 5 5v7.500h-13z" fill="#8a8a8a" stroke="#555" stroke-width="0.900"/><path d="M5 9.500q0 -5 5 -5h3q5 0 5 5v7.500h-13z" fill="#9a9a9a" stroke="#555" stroke-width="0.900"/><path d="M9 11.500q0 -5 5 -5h3q5 0 5 5v7.500h-13z" fill="#adadad" stroke="#555" stroke-width="0.900"/></g><g transform="translate(852 814)"><g transform="translate(0 0)"><path d="M0.5 2.5q0 -2 2 -2h4q1.2 0 1.8 1.5h6.2q1.5 0 1.5 1.5v8q0 1.5 -1.5 1.5h-12.5q-1.5 0 -1.5 -1.5z" fill="url(#gFold)" stroke="#d9a455" stroke-width="0.9"/><path d="M1.5 3.2h13.5" stroke="#fff6d8" stroke-width="0.8" opacity="0.8"/></g><g transform="translate(5 6)"><path d="M0.5 2.5q0 -2 2 -2h4q1.2 0 1.8 1.5h6.2q1.5 0 1.5 1.5v8q0 1.5 -1.5 1.5h-12.5q-1.5 0 -1.5 -1.5z" fill="url(#gFold)" stroke="#d9a455" stroke-width="0.9"/><path d="M1.5 3.2h13.5" stroke="#fff6d8" stroke-width="0.8" opacity="0.8"/></g><path d="M6 11q6 -1 7 5l2.500 -0.500l-4 5l-5 -3.500l2.500 -0.500q-0.500 -3 -3.500 -3z" fill="#e82020"/></g><g transform="translate(883 814)"><text x="8" y="8" font-family="Liberation Sans" font-weight="bold" font-size="8.500" fill="#444">2</text><text x="4.500" y="15" font-family="Liberation Sans" font-weight="bold" font-size="8.500" fill="#444">1</text><text x="4.500" y="22.500" font-family="Liberation Sans" font-weight="bold" font-size="8.500" fill="#444">3</text><path d="M1 8q1 -3 4 -3M13 10q2 -1 3 -4" stroke="#e01010" stroke-width="1.200" fill="none"/><path d="M0 6l3 0l-1.500 3zM15 4l3 1l-3 2z" fill="#e01010"/></g><rect x="911.5" y="815" width="2" height="2" fill="#1a1a1a"/><rect x="911.5" y="821" width="2" height="2" fill="#1a1a1a"/><rect x="911.5" y="827" width="2" height="2" fill="#1a1a1a"/><rect x="911.5" y="833" width="2" height="2" fill="#1a1a1a"/><rect x="917" y="814" width="99" height="21" fill="#fff"/><rect x="1000" y="815" width="15" height="19" fill="#f0f0f0"/><g transform="translate(918.5 814)"><g transform="scale(0.760)"><path d="M0.300 9.300Q1.500 1.500 7 1.200Q12 1 21.400 9.700L21.800 11.900Q18 7 16.100 8Q13 10 11.300 16.700Z" fill="url(#gPurH)" stroke="#3a3c7c" stroke-width="0.800"/></g><rect x="0.5" y="17.500" width="2.700" height="2.300" fill="#e010e0"/><rect x="3.05" y="17.500" width="2.700" height="2.300" fill="#3030e0"/><rect x="5.6" y="17.500" width="2.700" height="2.300" fill="#20c0e0"/><rect x="8.15" y="17.500" width="2.700" height="2.300" fill="#20d040"/><rect x="10.7" y="17.500" width="2.700" height="2.300" fill="#e0e020"/><rect x="13.25" y="17.500" width="2.700" height="2.300" fill="#f08010"/></g><path d="M1004.500 822h7l-3.500 4z" fill="#000"/><g transform="translate(1020 815)"><path d="M0.300 9.300Q1.500 1.500 7 1.200Q12 1 21.400 9.700L21.800 11.900Q18 7 16.100 8Q13 10 11.300 16.700Z" fill="#fcfcfc" stroke="#333" stroke-width="0.900"/></g><path d="M1047 823h5l-2.5 3z" fill="#000"/><g transform="translate(1058 815)"><path d="M0.300 9.300Q1.500 1.500 7 1.200Q12 1 21.400 9.700L21.800 11.900Q18 7 16.100 8Q13 10 11.300 16.700Z" fill="url(#gPurH)" stroke="#22244c" stroke-width="0.900"/></g><path d="M1085 823h5l-2.5 3z" fill="#000"/><g transform="translate(1096 814)"><path d="M0.500 6l10 -5l10 5l-10 5z" fill="#b8baec" stroke="#2c2e6c" stroke-width="0.900"/><path d="M0.500 6l10 5v10.500l-10 -5z" fill="#8688cc" stroke="#2c2e6c" stroke-width="0.900"/><path d="M10.500 11l10 -5v10.500l-10 5z" fill="#d4d6f4" stroke="#2c2e6c" stroke-width="0.900"/></g><rect x="1125" y="815" width="1" height="20" fill="#8a8a8a"/><rect x="1129" y="814" width="106" height="21" fill="#fff"/><rect x="1220" y="815" width="15" height="19" fill="#f0f0f0"/><g transform="translate(1132 814)"><g transform="scale(0.9)"><path d="M0.500 5.500l8 -4.500l8 4.500l-8 4.500z" fill="#b4b6ea" stroke="#26285c" stroke-width="0.800"/><path d="M0.500 5.500l8 4.500v9.500l-8 -4.500z" fill="#8486c8" stroke="#26285c" stroke-width="0.800"/><path d="M8.500 10l8 -4.500v9.500l-8 4.500z" fill="#6c6eb2" stroke="#26285c" stroke-width="0.800"/><path d="M4.500 3.250l8 4.500v9.500M12.500 3.250l-8 4.500v9.500M0.500 10.250l8 4.500l8 -4.500" fill="none" stroke="#26285c" stroke-width="0.800"/></g><rect x="0.5" y="18" width="2.700" height="2.300" fill="#e01010"/><rect x="3.1" y="18" width="2.700" height="2.300" fill="#f0a010"/><rect x="5.7" y="18" width="2.700" height="2.300" fill="#e0e020"/><rect x="8.3" y="18" width="2.700" height="2.300" fill="#20c040"/><rect x="10.9" y="18" width="2.700" height="2.300" fill="#2060e0"/><rect x="13.5" y="18" width="2.700" height="2.300" fill="#a020e0"/></g><path d="M1224 822h7l-3.500 4z" fill="#000"/><g transform="translate(1239 814)"><g transform="scale(1.1)"><path d="M0.500 5.500l8 -4.500l8 4.500l-8 4.500z" fill="#ffffff" stroke="#3a3a3a" stroke-width="0.800"/><path d="M0.500 5.500l8 4.500v9.500l-8 -4.500z" fill="#fafafa" stroke="#3a3a3a" stroke-width="0.800"/><path d="M8.500 10l8 -4.500v9.500l-8 4.500z" fill="#f4f4f4" stroke="#3a3a3a" stroke-width="0.800"/><path d="M4.500 3.250l8 4.500v9.500M12.500 3.250l-8 4.500v9.500M0.500 10.250l8 4.500l8 -4.500" fill="none" stroke="#3a3a3a" stroke-width="0.800"/></g></g><path d="M1266 823h5l-2.5 3z" fill="#000"/><g transform="translate(1277 814)"><g transform="scale(1.1)"><path d="M0.500 5.500l8 -4.500l8 4.500l-8 4.500z" fill="#b4b6ea" stroke="#26285c" stroke-width="0.800"/><path d="M0.500 5.500l8 4.500v9.500l-8 -4.500z" fill="#8486c8" stroke="#26285c" stroke-width="0.800"/><path d="M8.500 10l8 -4.500v9.500l-8 4.500z" fill="#6c6eb2" stroke="#26285c" stroke-width="0.800"/><path d="M4.500 3.250l8 4.500v9.500M12.500 3.250l-8 4.500v9.500M0.500 10.250l8 4.500l8 -4.500" fill="none" stroke="#26285c" stroke-width="0.800"/></g></g><path d="M1304 823h5l-2.5 3z" fill="#000"/><path d="M1319 828.500l14 -7" stroke="#333" stroke-width="1.600"/><path d="M1342 823h5l-2.5 3z" fill="#000"/><path d="M1354 825l8 -3.500l8 3.500l-8 3.500z" fill="#8a8a8a" stroke="#444" stroke-width="0.800"/></svg><span class="t " style="left:938.5px;top:818.59px;font-size:12.3px;line-height:12.3px;color:#000;transform:scaleX(0.9257);">Auto</span><span class="t " style="left:1151.9px;top:818.59px;font-size:12.3px;line-height:12.3px;color:#000;transform:scaleX(0.8313);">By Comp</span>
<div class="a" style="left:543px;top:846px;width:822px;height:1px;background:#8c8c8c;"></div>
<div class="a" style="left:543px;top:847px;width:822px;height:1px;background:#ffffff;"></div>
<div class="a" style="left:543px;top:865px;width:247px;height:21px;background:#f0f0f0;border-top:1px solid #fff;border-left:1px solid #fff;border-bottom:1px solid #5c5c5c;border-right:1px solid #5c5c5c;box-shadow:inset -1px -1px 0 #8f8f8f;"></div>
<span class="t " style="left:649.7px;top:868.17px;font-size:13.5px;line-height:13.5px;color:#1a1a1a;transform:scaleX(1.0139);">nodes</span>
<div class="a" style="left:543px;top:886px;width:247px;height:21px;background:#f0f0f0;border-top:1px solid #fff;border-left:1px solid #fff;border-bottom:1px solid #5c5c5c;border-right:1px solid #5c5c5c;box-shadow:inset -1px -1px 0 #8f8f8f;"></div>
<span class="t " style="left:639.4px;top:889.17px;font-size:13.5px;line-height:13.5px;color:#1a1a1a;transform:scaleX(1.0334);">node edit</span>
<div class="a" style="left:543px;top:907px;width:247px;height:21px;background:#f0f0f0;border-top:1px solid #fff;border-left:1px solid #fff;border-bottom:1px solid #5c5c5c;border-right:1px solid #5c5c5c;box-shadow:inset -1px -1px 0 #8f8f8f;"></div>
<span class="t " style="left:632.4px;top:910.17px;font-size:13.5px;line-height:13.5px;color:#1a1a1a;transform:scaleX(1.0276);">temp nodes</span>
<div class="a" style="left:543px;top:928px;width:247px;height:21px;background:#f0f0f0;border-top:1px solid #fff;border-left:1px solid #fff;border-bottom:1px solid #5c5c5c;border-right:1px solid #5c5c5c;box-shadow:inset -1px -1px 0 #8f8f8f;"></div>
<span class="t " style="left:643.0px;top:931.17px;font-size:13.5px;line-height:13.5px;color:#1a1a1a;transform:scaleX(1.0175);">distance</span>
<div class="a" style="left:543px;top:949px;width:247px;height:21px;background:#f0f0f0;border-top:1px solid #fff;border-left:1px solid #fff;border-bottom:1px solid #5c5c5c;border-right:1px solid #5c5c5c;box-shadow:inset -1px -1px 0 #8f8f8f;"></div>
<span class="t " style="left:648.6px;top:952.17px;font-size:13.5px;line-height:13.5px;color:#1a1a1a;transform:scaleX(1.0910);">points</span>
<div class="a" style="left:790px;top:865px;width:247px;height:21px;background:#f0f0f0;border-top:1px solid #fff;border-left:1px solid #fff;border-bottom:1px solid #5c5c5c;border-right:1px solid #5c5c5c;box-shadow:inset -1px -1px 0 #8f8f8f;"></div>
<span class="t " style="left:901.2px;top:868.17px;font-size:13.5px;line-height:13.5px;color:#1a1a1a;transform:scaleX(1.0152);">lines</span>
<div class="a" style="left:790px;top:886px;width:247px;height:21px;background:#f0f0f0;border-top:1px solid #fff;border-left:1px solid #fff;border-bottom:1px solid #5c5c5c;border-right:1px solid #5c5c5c;box-shadow:inset -1px -1px 0 #8f8f8f;"></div>
<span class="t " style="left:891.4px;top:889.17px;font-size:13.5px;line-height:13.5px;color:#1a1a1a;transform:scaleX(1.0191);">line edit</span>
<div class="a" style="left:790px;top:907px;width:247px;height:21px;background:#f0f0f0;border-top:1px solid #fff;border-left:1px solid #fff;border-bottom:1px solid #5c5c5c;border-right:1px solid #5c5c5c;box-shadow:inset -1px -1px 0 #8f8f8f;"></div>
<span class="t " style="left:895.4px;top:910.17px;font-size:13.5px;line-height:13.5px;color:#1a1a1a;transform:scaleX(1.0969);">length</span>
<div class="a" style="left:1037px;top:865px;width:247px;height:21px;background:#f0f0f0;border-top:1px solid #fff;border-left:1px solid #fff;border-bottom:1px solid #5c5c5c;border-right:1px solid #5c5c5c;box-shadow:inset -1px -1px 0 #8f8f8f;"></div>
<span class="t " style="left:1136.1px;top:868.17px;font-size:13.5px;line-height:13.5px;color:#1a1a1a;transform:scaleX(1.0354);">surfaces</span>
<div class="a" style="left:1037px;top:886px;width:247px;height:21px;background:#f0f0f0;border-top:1px solid #fff;border-left:1px solid #fff;border-bottom:1px solid #5c5c5c;border-right:1px solid #5c5c5c;box-shadow:inset -1px -1px 0 #8f8f8f;"></div>
<span class="t " style="left:1126.1px;top:889.17px;font-size:13.5px;line-height:13.5px;color:#1a1a1a;transform:scaleX(1.0396);">surface edit</span>
<div class="a" style="left:1037px;top:907px;width:247px;height:21px;background:#f0f0f0;border-top:1px solid #fff;border-left:1px solid #fff;border-bottom:1px solid #5c5c5c;border-right:1px solid #5c5c5c;box-shadow:inset -1px -1px 0 #8f8f8f;"></div>
<span class="t " style="left:1131.4px;top:910.17px;font-size:13.5px;line-height:13.5px;color:#1a1a1a;transform:scaleX(1.0914);">defeature</span>
<div class="a" style="left:1037px;top:928px;width:247px;height:21px;background:#f0f0f0;border-top:1px solid #fff;border-left:1px solid #fff;border-bottom:1px solid #5c5c5c;border-right:1px solid #5c5c5c;box-shadow:inset -1px -1px 0 #8f8f8f;"></div>
<span class="t " style="left:1127.1px;top:931.17px;font-size:13.5px;line-height:13.5px;color:#1a1a1a;transform:scaleX(1.0693);">midsurface</span>
<div class="a" style="left:1037px;top:949px;width:247px;height:21px;background:#f0f0f0;border-top:1px solid #fff;border-left:1px solid #fff;border-bottom:1px solid #5c5c5c;border-right:1px solid #5c5c5c;box-shadow:inset -1px -1px 0 #8f8f8f;"></div>
<span class="t " style="left:1121.2px;top:952.17px;font-size:13.5px;line-height:13.5px;color:#1a1a1a;transform:scaleX(1.0427);">dimensioning</span>
<div class="a" style="left:1284px;top:865px;width:247px;height:21px;background:#f0f0f0;border-top:1px solid #fff;border-left:1px solid #fff;border-bottom:1px solid #5c5c5c;border-right:1px solid #5c5c5c;box-shadow:inset -1px -1px 0 #8f8f8f;"></div>
<div class="a" style="left:1284px;top:886px;width:247px;height:21px;background:#f0f0f0;border-top:1px solid #fff;border-left:1px solid #fff;border-bottom:1px solid #5c5c5c;border-right:1px solid #5c5c5c;box-shadow:inset -1px -1px 0 #8f8f8f;"></div>
<div class="a" style="left:1284px;top:907px;width:247px;height:21px;background:#f0f0f0;border-top:1px solid #fff;border-left:1px solid #fff;border-bottom:1px solid #5c5c5c;border-right:1px solid #5c5c5c;box-shadow:inset -1px -1px 0 #8f8f8f;"></div>
<div class="a" style="left:543px;top:1014px;width:822px;height:1px;background:#000;"></div></div></body></html>
